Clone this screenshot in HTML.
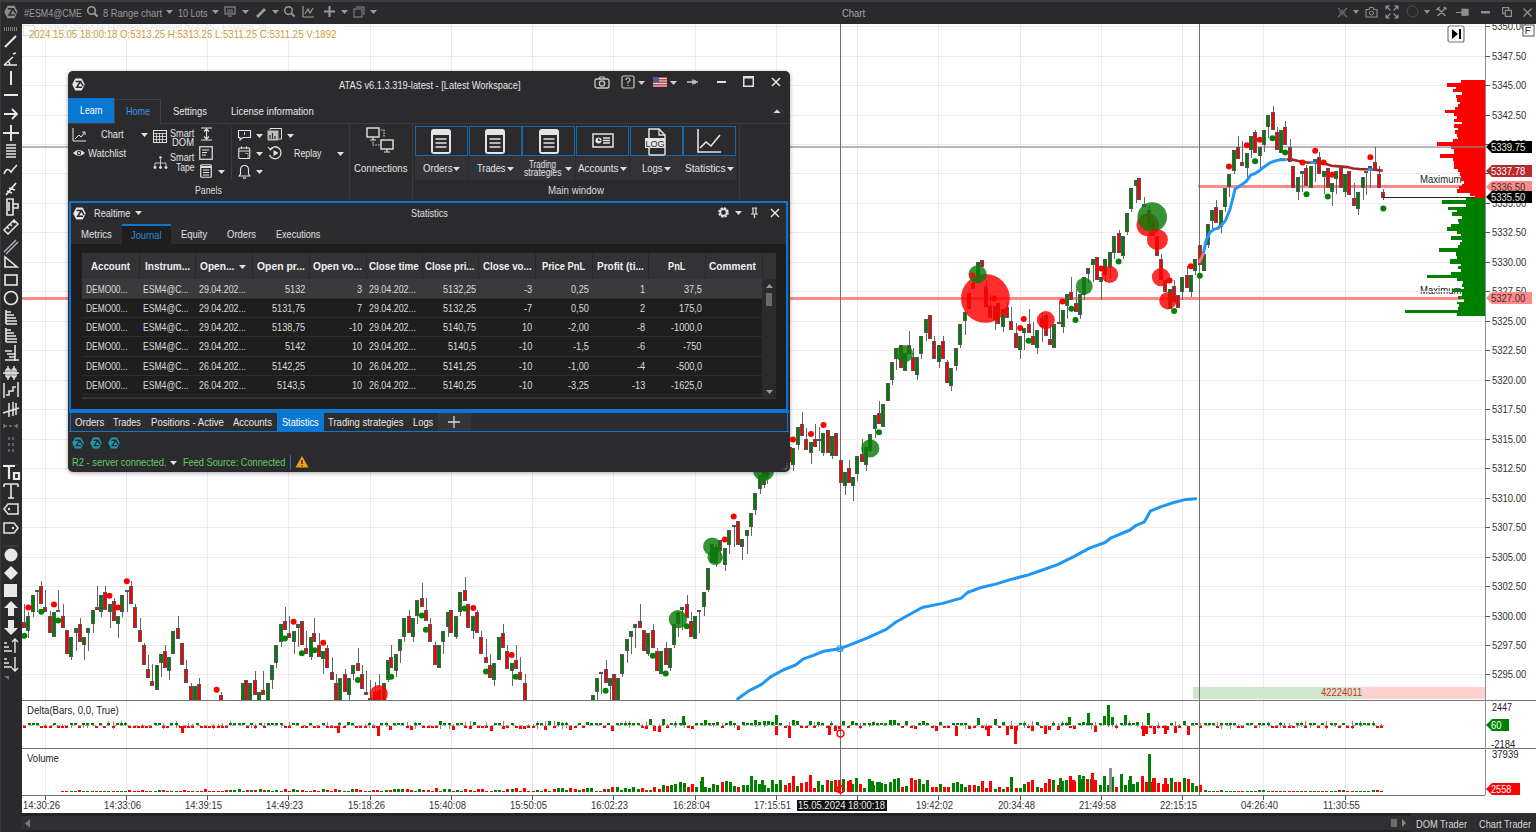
<!DOCTYPE html>
<html><head><meta charset="utf-8">
<style>
*{margin:0;padding:0;box-sizing:border-box}
html,body{width:1536px;height:832px;overflow:hidden;background:#fff;font-family:"Liberation Sans",sans-serif}
.a{position:absolute}
.pl{font-size:11px;color:#333;white-space:nowrap;line-height:14px}
.tt{color:#9b9b9b;font-size:11px;white-space:nowrap;line-height:14px}
.w{color:#e6e6e6;font-size:11px;white-space:nowrap;line-height:14px}
</style></head><body>
<div class="a" style="left:1419.9px;top:173.4px;font-size:10px;line-height:13px;color:#222;font-weight:400;white-space:nowrap;transform:scaleX(0.9575);transform-origin:0 0;">Maximum</div><div class="a" style="left:1419.9px;top:284.2px;font-size:10px;line-height:13px;color:#222;font-weight:400;white-space:nowrap;transform:scaleX(0.9575);transform-origin:0 0;">Maximum</div><svg class="a" style="left:0;top:0" width="1536" height="832" viewBox="0 0 1536 832" shape-rendering="crispEdges"><defs><clipPath id="cm"><rect x="22" y="24" width="1463" height="676"/></clipPath><clipPath id="cp"><rect x="22" y="700" width="1463" height="95"/></clipPath></defs><path d="M45.5 24V795 M126.5 24V795 M207.5 24V795 M288.5 24V795 M370.5 24V795 M451.5 24V795 M532.5 24V795 M613.5 24V795 M695.5 24V795 M776.5 24V795 M857.5 24V795 M938.5 24V795 M1020.5 24V795 M1101.5 24V795 M1182.5 24V795 M1263.5 24V795 M1345.5 24V795 M22 26.5H1485 M22 56.5H1485 M22 85.5H1485 M22 115.5H1485 M22 144.5H1485 M22 173.5H1485 M22 203.5H1485 M22 232.5H1485 M22 262.5H1485 M22 291.5H1485 M22 321.5H1485 M22 350.5H1485 M22 380.5H1485 M22 409.5H1485 M22 439.5H1485 M22 468.5H1485 M22 498.5H1485 M22 527.5H1485 M22 557.5H1485 M22 586.5H1485 M22 616.5H1485 M22 645.5H1485 M22 674.5H1485" stroke="#f2e7ea" stroke-width="1" fill="none"/><rect x="1193" y="687" width="170" height="12" fill="#cfe6cc"/><rect x="1363" y="687" width="122" height="12" fill="#ffd0d0"/><g clip-path="url(#cm)"><rect x="22" y="297" width="1463" height="3" fill="#ff8a8a"/><rect x="1198" y="185" width="287" height="3" fill="#ff8a8a"/></g><g><rect x="1461" y="80" width="24" height="3" fill="#ff0000"/><rect x="1447" y="83" width="38" height="4" fill="#ff0000"/><rect x="1456" y="87" width="29" height="2" fill="#ff0000"/><rect x="1453" y="89" width="32" height="3" fill="#ff0000"/><rect x="1462" y="92" width="23" height="3" fill="#ff0000"/><rect x="1456" y="95" width="29" height="3" fill="#ff0000"/><rect x="1457" y="98" width="28" height="4" fill="#ff0000"/><rect x="1460" y="102" width="25" height="2" fill="#ff0000"/><rect x="1458" y="104" width="27" height="3" fill="#ff0000"/><rect x="1455" y="107" width="30" height="3" fill="#ff0000"/><rect x="1445" y="110" width="40" height="3" fill="#ff0000"/><rect x="1454" y="113" width="31" height="3" fill="#ff0000"/><rect x="1457" y="116" width="28" height="3" fill="#ff0000"/><rect x="1454" y="119" width="31" height="3" fill="#ff0000"/><rect x="1462" y="122" width="23" height="2" fill="#ff0000"/><rect x="1454" y="124" width="31" height="4" fill="#ff0000"/><rect x="1458" y="128" width="27" height="2" fill="#ff0000"/><rect x="1455" y="130" width="30" height="4" fill="#ff0000"/><rect x="1457" y="134" width="28" height="3" fill="#ff0000"/><rect x="1458" y="137" width="27" height="2" fill="#ff0000"/><rect x="1453" y="139" width="32" height="3" fill="#ff0000"/><rect x="1437" y="142" width="48" height="4" fill="#ff0000"/><rect x="1451" y="146" width="34" height="3" fill="#ff0000"/><rect x="1454" y="149" width="31" height="5" fill="#ff0000"/><rect x="1440" y="154" width="45" height="4" fill="#ff0000"/><rect x="1453" y="158" width="32" height="3" fill="#ff0000"/><rect x="1454" y="161" width="31" height="8" fill="#ff0000"/><rect x="1458" y="169" width="27" height="3" fill="#ff0000"/><rect x="1460" y="172" width="25" height="4" fill="#ff0000"/><rect x="1461" y="176" width="24" height="5" fill="#ff0000"/><rect x="1464" y="181" width="21" height="3" fill="#ff0000"/><rect x="1462" y="184" width="23" height="2" fill="#ff0000"/><rect x="1459" y="186" width="26" height="3" fill="#ff0000"/><rect x="1457" y="189" width="28" height="4" fill="#ff0000"/><rect x="1470" y="193" width="15" height="3" fill="#ff0000"/><rect x="1475" y="196" width="10" height="2" fill="#ff0000"/><rect x="1466" y="198" width="19" height="2" fill="#008000"/><rect x="1442" y="200" width="43" height="4" fill="#008000"/><rect x="1466" y="204" width="19" height="3" fill="#008000"/><rect x="1448" y="207" width="37" height="3" fill="#008000"/><rect x="1457" y="210" width="28" height="2" fill="#008000"/><rect x="1452" y="212" width="33" height="4" fill="#008000"/><rect x="1462" y="216" width="23" height="3" fill="#008000"/><rect x="1458" y="219" width="27" height="3" fill="#008000"/><rect x="1459" y="222" width="26" height="2" fill="#008000"/><rect x="1451" y="224" width="34" height="3" fill="#008000"/><rect x="1447" y="227" width="38" height="4" fill="#008000"/><rect x="1457" y="231" width="28" height="3" fill="#008000"/><rect x="1461" y="234" width="24" height="2" fill="#008000"/><rect x="1451" y="236" width="34" height="4" fill="#008000"/><rect x="1462" y="240" width="23" height="2" fill="#008000"/><rect x="1460" y="242" width="25" height="3" fill="#008000"/><rect x="1458" y="245" width="27" height="3" fill="#008000"/><rect x="1439" y="248" width="46" height="4" fill="#008000"/><rect x="1456" y="252" width="29" height="4" fill="#008000"/><rect x="1457" y="256" width="28" height="3" fill="#008000"/><rect x="1450" y="259" width="35" height="5" fill="#008000"/><rect x="1461" y="264" width="24" height="2" fill="#008000"/><rect x="1458" y="266" width="27" height="3" fill="#008000"/><rect x="1461" y="269" width="24" height="3" fill="#008000"/><rect x="1451" y="272" width="34" height="3" fill="#008000"/><rect x="1427" y="275" width="58" height="3" fill="#008000"/><rect x="1457" y="278" width="28" height="3" fill="#008000"/><rect x="1463" y="281" width="22" height="3" fill="#008000"/><rect x="1462" y="284" width="23" height="3" fill="#008000"/><rect x="1464" y="287" width="21" height="2" fill="#008000"/><rect x="1452" y="289" width="33" height="3" fill="#008000"/><rect x="1462" y="292" width="23" height="4" fill="#008000"/><rect x="1458" y="296" width="27" height="3" fill="#008000"/><rect x="1464" y="299" width="21" height="3" fill="#008000"/><rect x="1457" y="302" width="28" height="2" fill="#008000"/><rect x="1459" y="304" width="26" height="3" fill="#008000"/><rect x="1458" y="307" width="27" height="3" fill="#008000"/><rect x="1405" y="310" width="80" height="3" fill="#008000"/><rect x="1457" y="313" width="28" height="3" fill="#008000"/></g><path d="M22 147H1485" stroke="#8a8a8a" stroke-opacity="0.6" stroke-width="2"/><path d="M840.5 24V795M1199.5 24V795" stroke="#707070" stroke-width="1"/><g clip-path="url(#cm)"><path d="M24.5 604V628" stroke="#666"/><rect x="22.5" y="622.5" width="3" height="5" fill="#ff0000" stroke="#555" stroke-width="1"/><path d="M28.5 612V638" stroke="#666"/><rect x="26.5" y="616.5" width="3" height="14" fill="#008000" stroke="#555" stroke-width="1"/><path d="M33.5 595V617" stroke="#666"/><rect x="31.5" y="595.5" width="3" height="16" fill="#008000" stroke="#555" stroke-width="1"/><path d="M37.5 590V612" stroke="#666"/><rect x="35.5" y="590.5" width="3" height="1" fill="#008000" stroke="#555" stroke-width="1"/><path d="M41.5 581V604" stroke="#666"/><rect x="39.5" y="586.5" width="3" height="17" fill="#ff0000" stroke="#555" stroke-width="1"/><path d="M45.5 590V612" stroke="#666"/><rect x="43.5" y="607.5" width="3" height="4" fill="#ff0000" stroke="#555" stroke-width="1"/><path d="M50.5 611V633" stroke="#666"/><rect x="48.5" y="616.5" width="3" height="16" fill="#ff0000" stroke="#555" stroke-width="1"/><path d="M54.5 612V637" stroke="#666"/><rect x="52.5" y="612.5" width="3" height="24" fill="#008000" stroke="#555" stroke-width="1"/><path d="M58.5 590V612" stroke="#666"/><rect x="56.5" y="610.5" width="3" height="1" fill="#ff0000" stroke="#555" stroke-width="1"/><path d="M63.5 604V628" stroke="#666"/><rect x="61.5" y="616.5" width="3" height="11" fill="#ff0000" stroke="#555" stroke-width="1"/><path d="M67.5 630V654" stroke="#666"/><rect x="65.5" y="630.5" width="3" height="23" fill="#ff0000" stroke="#555" stroke-width="1"/><path d="M71.5 637V660" stroke="#666"/><rect x="69.5" y="637.5" width="3" height="19" fill="#008000" stroke="#555" stroke-width="1"/><path d="M76.5 628V651" stroke="#666"/><rect x="74.5" y="628.5" width="3" height="4" fill="#008000" stroke="#555" stroke-width="1"/><path d="M80.5 618V642" stroke="#666"/><rect x="78.5" y="624.5" width="3" height="17" fill="#ff0000" stroke="#555" stroke-width="1"/><path d="M84.5 637V660" stroke="#666"/><rect x="82.5" y="637.5" width="3" height="7" fill="#008000" stroke="#555" stroke-width="1"/><path d="M88.5 628V651" stroke="#666"/><rect x="86.5" y="628.5" width="3" height="4" fill="#008000" stroke="#555" stroke-width="1"/><path d="M93.5 610V633" stroke="#666"/><rect x="91.5" y="610.5" width="3" height="13" fill="#008000" stroke="#555" stroke-width="1"/><path d="M97.5 586V610" stroke="#666"/><rect x="95.5" y="607.5" width="3" height="2" fill="#ff0000" stroke="#555" stroke-width="1"/><path d="M101.5 595V617" stroke="#666"/><rect x="99.5" y="595.5" width="3" height="16" fill="#008000" stroke="#555" stroke-width="1"/><path d="M105.5 586V610" stroke="#666"/><rect x="103.5" y="592.5" width="3" height="17" fill="#ff0000" stroke="#555" stroke-width="1"/><path d="M110.5 604V628" stroke="#666"/><rect x="108.5" y="604.5" width="3" height="7" fill="#008000" stroke="#555" stroke-width="1"/><path d="M114.5 598V621" stroke="#666"/><rect x="112.5" y="601.5" width="3" height="19" fill="#ff0000" stroke="#555" stroke-width="1"/><path d="M118.5 616V638" stroke="#666"/><rect x="116.5" y="616.5" width="3" height="7" fill="#008000" stroke="#555" stroke-width="1"/><path d="M122.5 595V617" stroke="#666"/><rect x="120.5" y="595.5" width="3" height="16" fill="#008000" stroke="#555" stroke-width="1"/><path d="M127.5 590V612" stroke="#666"/><rect x="125.5" y="590.5" width="3" height="1" fill="#008000" stroke="#555" stroke-width="1"/><path d="M131.5 581V604" stroke="#666"/><rect x="129.5" y="586.5" width="3" height="17" fill="#ff0000" stroke="#555" stroke-width="1"/><path d="M135.5 604V628" stroke="#666"/><rect x="133.5" y="607.5" width="3" height="20" fill="#ff0000" stroke="#555" stroke-width="1"/><path d="M140.5 618V642" stroke="#666"/><rect x="138.5" y="630.5" width="3" height="11" fill="#ff0000" stroke="#555" stroke-width="1"/><path d="M144.5 643V665" stroke="#666"/><rect x="142.5" y="645.5" width="3" height="19" fill="#ff0000" stroke="#555" stroke-width="1"/><path d="M148.5 655V678" stroke="#666"/><rect x="146.5" y="669.5" width="3" height="8" fill="#ff0000" stroke="#555" stroke-width="1"/><path d="M152.5 664V686" stroke="#666"/><rect x="150.5" y="681.5" width="3" height="4" fill="#ff0000" stroke="#555" stroke-width="1"/><path d="M157.5 665V690" stroke="#666"/><rect x="155.5" y="665.5" width="3" height="24" fill="#008000" stroke="#555" stroke-width="1"/><path d="M161.5 654V677" stroke="#666"/><rect x="159.5" y="654.5" width="3" height="8" fill="#008000" stroke="#555" stroke-width="1"/><path d="M165.5 645V668" stroke="#666"/><rect x="163.5" y="651.5" width="3" height="16" fill="#ff0000" stroke="#555" stroke-width="1"/><path d="M169.5 657V680" stroke="#666"/><rect x="167.5" y="657.5" width="3" height="13" fill="#008000" stroke="#555" stroke-width="1"/><path d="M173.5 631V654" stroke="#666"/><rect x="171.5" y="631.5" width="3" height="22" fill="#008000" stroke="#555" stroke-width="1"/><path d="M178.5 616V639" stroke="#666"/><rect x="176.5" y="628.5" width="3" height="10" fill="#ff0000" stroke="#555" stroke-width="1"/><path d="M182.5 643V665" stroke="#666"/><rect x="180.5" y="643.5" width="3" height="21" fill="#ff0000" stroke="#555" stroke-width="1"/><path d="M186.5 660V683" stroke="#666"/><rect x="184.5" y="669.5" width="3" height="13" fill="#ff0000" stroke="#555" stroke-width="1"/><path d="M191.5 683V705" stroke="#666"/><rect x="189.5" y="686.5" width="3" height="18" fill="#ff0000" stroke="#555" stroke-width="1"/><path d="M195.5 686V705" stroke="#666"/><rect x="193.5" y="686.5" width="3" height="18" fill="#008000" stroke="#555" stroke-width="1"/><path d="M199.5 678V705" stroke="#666"/><rect x="197.5" y="684.5" width="3" height="20" fill="#ff0000" stroke="#555" stroke-width="1"/><path d="M221.5 692V705" stroke="#666"/><rect x="219.5" y="695.5" width="3" height="9" fill="#ff0000" stroke="#555" stroke-width="1"/><path d="M243.5 683V705" stroke="#666"/><rect x="241.5" y="683.5" width="3" height="21" fill="#008000" stroke="#555" stroke-width="1"/><path d="M246.5 680V705" stroke="#666"/><rect x="244.5" y="680.5" width="3" height="24" fill="#ff0000" stroke="#555" stroke-width="1"/><path d="M250.5 683V705" stroke="#666"/><rect x="248.5" y="683.5" width="3" height="21" fill="#008000" stroke="#555" stroke-width="1"/><path d="M255.5 671V695" stroke="#666"/><rect x="253.5" y="680.5" width="3" height="14" fill="#ff0000" stroke="#555" stroke-width="1"/><path d="M259.5 692V705" stroke="#666"/><rect x="257.5" y="692.5" width="3" height="12" fill="#008000" stroke="#555" stroke-width="1"/><path d="M263.5 671V695" stroke="#666"/><rect x="261.5" y="690.5" width="3" height="4" fill="#ff0000" stroke="#555" stroke-width="1"/><path d="M268.5 683V705" stroke="#666"/><rect x="266.5" y="683.5" width="3" height="21" fill="#008000" stroke="#555" stroke-width="1"/><path d="M272.5 665V689" stroke="#666"/><rect x="270.5" y="665.5" width="3" height="14" fill="#008000" stroke="#555" stroke-width="1"/><path d="M276.5 645V668" stroke="#666"/><rect x="274.5" y="645.5" width="3" height="17" fill="#008000" stroke="#555" stroke-width="1"/><path d="M281.5 624V647" stroke="#666"/><rect x="279.5" y="624.5" width="3" height="17" fill="#008000" stroke="#555" stroke-width="1"/><path d="M285.5 607V630" stroke="#666"/><rect x="283.5" y="621.5" width="3" height="8" fill="#ff0000" stroke="#555" stroke-width="1"/><path d="M289.5 616V638" stroke="#666"/><rect x="287.5" y="633.5" width="3" height="4" fill="#ff0000" stroke="#555" stroke-width="1"/><path d="M294.5 631V654" stroke="#666"/><rect x="292.5" y="631.5" width="3" height="10" fill="#008000" stroke="#555" stroke-width="1"/><path d="M298.5 624V647" stroke="#666"/><rect x="296.5" y="624.5" width="3" height="3" fill="#008000" stroke="#555" stroke-width="1"/><path d="M302.5 621V645" stroke="#666"/><rect x="300.5" y="621.5" width="3" height="23" fill="#ff0000" stroke="#555" stroke-width="1"/><path d="M306.5 631V654" stroke="#666"/><rect x="304.5" y="648.5" width="3" height="5" fill="#ff0000" stroke="#555" stroke-width="1"/><path d="M311.5 637V660" stroke="#666"/><rect x="309.5" y="637.5" width="3" height="19" fill="#008000" stroke="#555" stroke-width="1"/><path d="M314.5 618V642" stroke="#666"/><rect x="312.5" y="633.5" width="3" height="8" fill="#ff0000" stroke="#555" stroke-width="1"/><path d="M319.5 633V657" stroke="#666"/><rect x="317.5" y="645.5" width="3" height="11" fill="#ff0000" stroke="#555" stroke-width="1"/><path d="M323.5 651V674" stroke="#666"/><rect x="321.5" y="651.5" width="3" height="7" fill="#008000" stroke="#555" stroke-width="1"/><path d="M327.5 645V668" stroke="#666"/><rect x="325.5" y="648.5" width="3" height="19" fill="#ff0000" stroke="#555" stroke-width="1"/><path d="M332.5 657V680" stroke="#666"/><rect x="330.5" y="672.5" width="3" height="7" fill="#ff0000" stroke="#555" stroke-width="1"/><path d="M336.5 674V705" stroke="#666"/><rect x="334.5" y="683.5" width="3" height="21" fill="#ff0000" stroke="#555" stroke-width="1"/><path d="M340.5 678V705" stroke="#666"/><rect x="338.5" y="678.5" width="3" height="26" fill="#008000" stroke="#555" stroke-width="1"/><path d="M345.5 669V692" stroke="#666"/><rect x="343.5" y="674.5" width="3" height="17" fill="#ff0000" stroke="#555" stroke-width="1"/><path d="M349.5 678V705" stroke="#666"/><rect x="347.5" y="678.5" width="3" height="16" fill="#008000" stroke="#555" stroke-width="1"/><path d="M353.5 665V680" stroke="#666"/><rect x="351.5" y="665.5" width="3" height="8" fill="#008000" stroke="#555" stroke-width="1"/><path d="M358.5 648V671" stroke="#666"/><rect x="356.5" y="663.5" width="3" height="7" fill="#ff0000" stroke="#555" stroke-width="1"/><path d="M362.5 665V689" stroke="#666"/><rect x="360.5" y="674.5" width="3" height="14" fill="#ff0000" stroke="#555" stroke-width="1"/><path d="M366.5 671V695" stroke="#666"/><rect x="364.5" y="692.5" width="3" height="2" fill="#ff0000" stroke="#555" stroke-width="1"/><path d="M370.5 680V705" stroke="#666"/><rect x="368.5" y="698.5" width="3" height="6" fill="#008000" stroke="#555" stroke-width="1"/><path d="M375.5 682V705" stroke="#666"/><rect x="373.5" y="692.5" width="3" height="12" fill="#ff0000" stroke="#555" stroke-width="1"/><path d="M379.5 674V705" stroke="#666"/><rect x="377.5" y="690.5" width="3" height="14" fill="#ff0000" stroke="#555" stroke-width="1"/><path d="M384.5 683V705" stroke="#666"/><rect x="382.5" y="683.5" width="3" height="21" fill="#008000" stroke="#555" stroke-width="1"/><path d="M388.5 660V682" stroke="#666"/><rect x="386.5" y="660.5" width="3" height="19" fill="#008000" stroke="#555" stroke-width="1"/><path d="M391.5 645V668" stroke="#666"/><rect x="389.5" y="657.5" width="3" height="10" fill="#ff0000" stroke="#555" stroke-width="1"/><path d="M396.5 654V677" stroke="#666"/><rect x="394.5" y="654.5" width="3" height="16" fill="#008000" stroke="#555" stroke-width="1"/><path d="M400.5 639V663" stroke="#666"/><rect x="398.5" y="639.5" width="3" height="11" fill="#008000" stroke="#555" stroke-width="1"/><path d="M404.5 618V642" stroke="#666"/><rect x="402.5" y="618.5" width="3" height="18" fill="#008000" stroke="#555" stroke-width="1"/><path d="M409.5 610V633" stroke="#666"/><rect x="407.5" y="616.5" width="3" height="16" fill="#ff0000" stroke="#555" stroke-width="1"/><path d="M413.5 618V642" stroke="#666"/><rect x="411.5" y="618.5" width="3" height="18" fill="#008000" stroke="#555" stroke-width="1"/><path d="M417.5 600V624" stroke="#666"/><rect x="415.5" y="600.5" width="3" height="15" fill="#008000" stroke="#555" stroke-width="1"/><path d="M422.5 583V607" stroke="#666"/><rect x="420.5" y="598.5" width="3" height="8" fill="#ff0000" stroke="#555" stroke-width="1"/><path d="M426.5 598V621" stroke="#666"/><rect x="424.5" y="610.5" width="3" height="10" fill="#ff0000" stroke="#555" stroke-width="1"/><path d="M430.5 618V642" stroke="#666"/><rect x="428.5" y="624.5" width="3" height="17" fill="#ff0000" stroke="#555" stroke-width="1"/><path d="M435.5 642V665" stroke="#666"/><rect x="433.5" y="645.5" width="3" height="19" fill="#ff0000" stroke="#555" stroke-width="1"/><path d="M439.5 645V668" stroke="#666"/><rect x="437.5" y="645.5" width="3" height="22" fill="#008000" stroke="#555" stroke-width="1"/><path d="M443.5 631V654" stroke="#666"/><rect x="441.5" y="631.5" width="3" height="10" fill="#008000" stroke="#555" stroke-width="1"/><path d="M448.5 612V637" stroke="#666"/><rect x="446.5" y="612.5" width="3" height="14" fill="#008000" stroke="#555" stroke-width="1"/><path d="M451.5 610V633" stroke="#666"/><rect x="449.5" y="610.5" width="3" height="22" fill="#ff0000" stroke="#555" stroke-width="1"/><path d="M456.5 616V639" stroke="#666"/><rect x="454.5" y="616.5" width="3" height="20" fill="#008000" stroke="#555" stroke-width="1"/><path d="M460.5 592V616" stroke="#666"/><rect x="458.5" y="592.5" width="3" height="19" fill="#008000" stroke="#555" stroke-width="1"/><path d="M465.5 577V601" stroke="#666"/><rect x="463.5" y="590.5" width="3" height="10" fill="#ff0000" stroke="#555" stroke-width="1"/><path d="M468.5 604V628" stroke="#666"/><rect x="466.5" y="604.5" width="3" height="23" fill="#ff0000" stroke="#555" stroke-width="1"/><path d="M473.5 616V639" stroke="#666"/><rect x="471.5" y="616.5" width="3" height="14" fill="#008000" stroke="#555" stroke-width="1"/><path d="M477.5 610V633" stroke="#666"/><rect x="475.5" y="612.5" width="3" height="20" fill="#ff0000" stroke="#555" stroke-width="1"/><path d="M481.5 631V654" stroke="#666"/><rect x="479.5" y="637.5" width="3" height="16" fill="#ff0000" stroke="#555" stroke-width="1"/><path d="M486.5 639V663" stroke="#666"/><rect x="484.5" y="657.5" width="3" height="5" fill="#ff0000" stroke="#555" stroke-width="1"/><path d="M490.5 654V678" stroke="#666"/><rect x="488.5" y="665.5" width="3" height="12" fill="#ff0000" stroke="#555" stroke-width="1"/><path d="M494.5 663V686" stroke="#666"/><rect x="492.5" y="663.5" width="3" height="16" fill="#008000" stroke="#555" stroke-width="1"/><path d="M499.5 637V660" stroke="#666"/><rect x="497.5" y="637.5" width="3" height="22" fill="#008000" stroke="#555" stroke-width="1"/><path d="M503.5 624V648" stroke="#666"/><rect x="501.5" y="633.5" width="3" height="14" fill="#ff0000" stroke="#555" stroke-width="1"/><path d="M507.5 645V669" stroke="#666"/><rect x="505.5" y="651.5" width="3" height="17" fill="#ff0000" stroke="#555" stroke-width="1"/><path d="M512.5 663V686" stroke="#666"/><rect x="510.5" y="663.5" width="3" height="7" fill="#008000" stroke="#555" stroke-width="1"/><path d="M516.5 645V669" stroke="#666"/><rect x="514.5" y="660.5" width="3" height="8" fill="#ff0000" stroke="#555" stroke-width="1"/><path d="M520.5 657V680" stroke="#666"/><rect x="518.5" y="672.5" width="3" height="7" fill="#ff0000" stroke="#555" stroke-width="1"/><path d="M525.5 674V705" stroke="#666"/><rect x="523.5" y="683.5" width="3" height="21" fill="#ff0000" stroke="#555" stroke-width="1"/><path d="M593.5 695V705" stroke="#666"/><rect x="591.5" y="695.5" width="3" height="9" fill="#008000" stroke="#555" stroke-width="1"/><path d="M597.5 678V705" stroke="#666"/><rect x="595.5" y="678.5" width="3" height="13" fill="#008000" stroke="#555" stroke-width="1"/><path d="M601.5 672V694" stroke="#666"/><rect x="599.5" y="672.5" width="3" height="1" fill="#008000" stroke="#555" stroke-width="1"/><path d="M606.5 660V683" stroke="#666"/><rect x="604.5" y="669.5" width="3" height="13" fill="#ff0000" stroke="#555" stroke-width="1"/><path d="M610.5 678V705" stroke="#666"/><rect x="608.5" y="678.5" width="3" height="7" fill="#008000" stroke="#555" stroke-width="1"/><path d="M614.5 674V705" stroke="#666"/><rect x="612.5" y="674.5" width="3" height="30" fill="#ff0000" stroke="#555" stroke-width="1"/><path d="M618.5 678V705" stroke="#666"/><rect x="616.5" y="678.5" width="3" height="26" fill="#008000" stroke="#555" stroke-width="1"/><path d="M622.5 654V677" stroke="#666"/><rect x="620.5" y="654.5" width="3" height="19" fill="#008000" stroke="#555" stroke-width="1"/><path d="M627.5 639V663" stroke="#666"/><rect x="625.5" y="639.5" width="3" height="11" fill="#008000" stroke="#555" stroke-width="1"/><path d="M631.5 631V654" stroke="#666"/><rect x="629.5" y="631.5" width="3" height="5" fill="#008000" stroke="#555" stroke-width="1"/><path d="M635.5 624V648" stroke="#666"/><rect x="633.5" y="624.5" width="3" height="3" fill="#008000" stroke="#555" stroke-width="1"/><path d="M640.5 604V628" stroke="#666"/><rect x="638.5" y="621.5" width="3" height="6" fill="#ff0000" stroke="#555" stroke-width="1"/><path d="M644.5 630V651" stroke="#666"/><rect x="642.5" y="630.5" width="3" height="20" fill="#ff0000" stroke="#555" stroke-width="1"/><path d="M648.5 633V656" stroke="#666"/><rect x="646.5" y="633.5" width="3" height="20" fill="#008000" stroke="#555" stroke-width="1"/><path d="M653.5 624V648" stroke="#666"/><rect x="651.5" y="630.5" width="3" height="17" fill="#ff0000" stroke="#555" stroke-width="1"/><path d="M657.5 648V671" stroke="#666"/><rect x="655.5" y="651.5" width="3" height="19" fill="#ff0000" stroke="#555" stroke-width="1"/><path d="M661.5 651V674" stroke="#666"/><rect x="659.5" y="651.5" width="3" height="22" fill="#008000" stroke="#555" stroke-width="1"/><path d="M666.5 642V665" stroke="#666"/><rect x="664.5" y="648.5" width="3" height="16" fill="#ff0000" stroke="#555" stroke-width="1"/><path d="M670.5 648V671" stroke="#666"/><rect x="668.5" y="648.5" width="3" height="19" fill="#008000" stroke="#555" stroke-width="1"/><path d="M674.5 624V648" stroke="#666"/><rect x="672.5" y="624.5" width="3" height="20" fill="#008000" stroke="#555" stroke-width="1"/><path d="M678.5 612V637" stroke="#666"/><rect x="676.5" y="612.5" width="3" height="11" fill="#008000" stroke="#555" stroke-width="1"/><path d="M682.5 607V630" stroke="#666"/><rect x="680.5" y="607.5" width="3" height="2" fill="#008000" stroke="#555" stroke-width="1"/><path d="M687.5 595V618" stroke="#666"/><rect x="685.5" y="604.5" width="3" height="13" fill="#ff0000" stroke="#555" stroke-width="1"/><path d="M691.5 612V637" stroke="#666"/><rect x="689.5" y="621.5" width="3" height="15" fill="#ff0000" stroke="#555" stroke-width="1"/><path d="M695.5 616V639" stroke="#666"/><rect x="693.5" y="616.5" width="3" height="22" fill="#008000" stroke="#555" stroke-width="1"/><path d="M699.5 610V633" stroke="#666"/><rect x="697.5" y="610.5" width="3" height="1" fill="#008000" stroke="#555" stroke-width="1"/><path d="M704.5 592V616" stroke="#666"/><rect x="702.5" y="592.5" width="3" height="14" fill="#008000" stroke="#555" stroke-width="1"/><path d="M708.5 568V592" stroke="#666"/><rect x="706.5" y="568.5" width="3" height="21" fill="#008000" stroke="#555" stroke-width="1"/><path d="M712.5 544V563" stroke="#666"/><rect x="710.5" y="544.5" width="3" height="18" fill="#008000" stroke="#555" stroke-width="1"/><path d="M716.5 544V567" stroke="#666"/><rect x="714.5" y="547.5" width="3" height="15" fill="#008000" stroke="#555" stroke-width="1"/><path d="M720.5 540V560" stroke="#666"/><rect x="718.5" y="540.5" width="3" height="10" fill="#ff0000" stroke="#555" stroke-width="1"/><path d="M725.5 548V571" stroke="#666"/><rect x="723.5" y="548.5" width="3" height="16" fill="#008000" stroke="#555" stroke-width="1"/><path d="M729.5 530V554" stroke="#666"/><rect x="727.5" y="530.5" width="3" height="14" fill="#008000" stroke="#555" stroke-width="1"/><path d="M734.5 525V547" stroke="#666"/><rect x="732.5" y="525.5" width="3" height="1" fill="#008000" stroke="#555" stroke-width="1"/><path d="M738.5 521V545" stroke="#666"/><rect x="736.5" y="521.5" width="3" height="23" fill="#ff0000" stroke="#555" stroke-width="1"/><path d="M742.5 539V560" stroke="#666"/><rect x="740.5" y="539.5" width="3" height="7" fill="#008000" stroke="#555" stroke-width="1"/><path d="M747.5 530V554" stroke="#666"/><rect x="745.5" y="530.5" width="3" height="5" fill="#008000" stroke="#555" stroke-width="1"/><path d="M751.5 513V536" stroke="#666"/><rect x="749.5" y="513.5" width="3" height="13" fill="#008000" stroke="#555" stroke-width="1"/><path d="M755.5 493V515" stroke="#666"/><rect x="753.5" y="493.5" width="3" height="16" fill="#008000" stroke="#555" stroke-width="1"/><path d="M760.5 475V494" stroke="#666"/><rect x="758.5" y="475.5" width="3" height="13" fill="#008000" stroke="#555" stroke-width="1"/><path d="M764.5 467V488" stroke="#666"/><rect x="762.5" y="472.5" width="3" height="12" fill="#008000" stroke="#555" stroke-width="1"/><path d="M767.5 467V484" stroke="#666"/><rect x="765.5" y="467.5" width="3" height="10" fill="#008000" stroke="#555" stroke-width="1"/><path d="M790.5 447V462" stroke="#666"/><rect x="788.5" y="447.5" width="3" height="14" fill="#ff0000" stroke="#555" stroke-width="1"/><path d="M793.5 448V471" stroke="#666"/><rect x="791.5" y="448.5" width="3" height="16" fill="#008000" stroke="#555" stroke-width="1"/><path d="M798.5 427V450" stroke="#666"/><rect x="796.5" y="427.5" width="3" height="17" fill="#008000" stroke="#555" stroke-width="1"/><path d="M802.5 412V436" stroke="#666"/><rect x="800.5" y="424.5" width="3" height="11" fill="#ff0000" stroke="#555" stroke-width="1"/><path d="M806.5 428V450" stroke="#666"/><rect x="804.5" y="439.5" width="3" height="10" fill="#ff0000" stroke="#555" stroke-width="1"/><path d="M811.5 442V464" stroke="#666"/><rect x="809.5" y="442.5" width="3" height="10" fill="#008000" stroke="#555" stroke-width="1"/><path d="M815.5 424V447" stroke="#666"/><rect x="813.5" y="439.5" width="3" height="7" fill="#ff0000" stroke="#555" stroke-width="1"/><path d="M819.5 427V451" stroke="#666"/><rect x="817.5" y="439.5" width="3" height="1" fill="#008000" stroke="#555" stroke-width="1"/><path d="M823.5 433V456" stroke="#666"/><rect x="821.5" y="433.5" width="3" height="19" fill="#008000" stroke="#555" stroke-width="1"/><path d="M828.5 430V453" stroke="#666"/><rect x="826.5" y="430.5" width="3" height="22" fill="#ff0000" stroke="#555" stroke-width="1"/><path d="M832.5 436V459" stroke="#666"/><rect x="830.5" y="436.5" width="3" height="19" fill="#008000" stroke="#555" stroke-width="1"/><path d="M836.5 433V456" stroke="#666"/><rect x="834.5" y="433.5" width="3" height="22" fill="#ff0000" stroke="#555" stroke-width="1"/><path d="M841.5 460V483" stroke="#666"/><rect x="839.5" y="460.5" width="3" height="22" fill="#ff0000" stroke="#555" stroke-width="1"/><path d="M845.5 472V495" stroke="#666"/><rect x="843.5" y="472.5" width="3" height="13" fill="#008000" stroke="#555" stroke-width="1"/><path d="M849.5 460V483" stroke="#666"/><rect x="847.5" y="468.5" width="3" height="14" fill="#ff0000" stroke="#555" stroke-width="1"/><path d="M853.5 477V501" stroke="#666"/><rect x="851.5" y="477.5" width="3" height="8" fill="#008000" stroke="#555" stroke-width="1"/><path d="M857.5 456V481" stroke="#666"/><rect x="855.5" y="456.5" width="3" height="17" fill="#008000" stroke="#555" stroke-width="1"/><path d="M862.5 439V462" stroke="#666"/><rect x="860.5" y="454.5" width="3" height="7" fill="#ff0000" stroke="#555" stroke-width="1"/><path d="M866.5 447V471" stroke="#666"/><rect x="864.5" y="447.5" width="3" height="17" fill="#008000" stroke="#555" stroke-width="1"/><path d="M870.5 434V453" stroke="#666"/><rect x="868.5" y="434.5" width="3" height="16" fill="#008000" stroke="#555" stroke-width="1"/><path d="M875.5 415V438" stroke="#666"/><rect x="873.5" y="415.5" width="3" height="13" fill="#008000" stroke="#555" stroke-width="1"/><path d="M879.5 401V424" stroke="#666"/><rect x="877.5" y="413.5" width="3" height="10" fill="#ff0000" stroke="#555" stroke-width="1"/><path d="M883.5 404V427" stroke="#666"/><rect x="881.5" y="404.5" width="3" height="22" fill="#008000" stroke="#555" stroke-width="1"/><path d="M888.5 383V401" stroke="#666"/><rect x="886.5" y="383.5" width="3" height="17" fill="#008000" stroke="#555" stroke-width="1"/><path d="M892.5 362V385" stroke="#666"/><rect x="890.5" y="362.5" width="3" height="17" fill="#008000" stroke="#555" stroke-width="1"/><path d="M896.5 348V370" stroke="#666"/><rect x="894.5" y="348.5" width="3" height="10" fill="#008000" stroke="#555" stroke-width="1"/><path d="M901.5 345V368" stroke="#666"/><rect x="899.5" y="345.5" width="3" height="22" fill="#ff0000" stroke="#555" stroke-width="1"/><path d="M905.5 353V371" stroke="#666"/><rect x="903.5" y="353.5" width="3" height="17" fill="#008000" stroke="#555" stroke-width="1"/><path d="M909.5 331V354" stroke="#666"/><rect x="907.5" y="345.5" width="3" height="8" fill="#ff0000" stroke="#555" stroke-width="1"/><path d="M913.5 348V371" stroke="#666"/><rect x="911.5" y="357.5" width="3" height="13" fill="#ff0000" stroke="#555" stroke-width="1"/><path d="M917.5 357V380" stroke="#666"/><rect x="915.5" y="357.5" width="3" height="17" fill="#008000" stroke="#555" stroke-width="1"/><path d="M921.5 336V359" stroke="#666"/><rect x="919.5" y="336.5" width="3" height="17" fill="#008000" stroke="#555" stroke-width="1"/><path d="M926.5 319V341" stroke="#666"/><rect x="924.5" y="319.5" width="3" height="13" fill="#008000" stroke="#555" stroke-width="1"/><path d="M930.5 315V339" stroke="#666"/><rect x="928.5" y="315.5" width="3" height="23" fill="#ff0000" stroke="#555" stroke-width="1"/><path d="M934.5 336V359" stroke="#666"/><rect x="932.5" y="341.5" width="3" height="17" fill="#ff0000" stroke="#555" stroke-width="1"/><path d="M939.5 345V368" stroke="#666"/><rect x="937.5" y="345.5" width="3" height="16" fill="#008000" stroke="#555" stroke-width="1"/><path d="M943.5 336V359" stroke="#666"/><rect x="941.5" y="341.5" width="3" height="17" fill="#ff0000" stroke="#555" stroke-width="1"/><path d="M947.5 360V383" stroke="#666"/><rect x="945.5" y="362.5" width="3" height="20" fill="#ff0000" stroke="#555" stroke-width="1"/><path d="M951.5 368V391" stroke="#666"/><rect x="949.5" y="368.5" width="3" height="17" fill="#008000" stroke="#555" stroke-width="1"/><path d="M956.5 348V371" stroke="#666"/><rect x="954.5" y="348.5" width="3" height="17" fill="#008000" stroke="#555" stroke-width="1"/><path d="M960.5 324V348" stroke="#666"/><rect x="958.5" y="324.5" width="3" height="20" fill="#008000" stroke="#555" stroke-width="1"/><path d="M965.5 312V335" stroke="#666"/><rect x="963.5" y="312.5" width="3" height="8" fill="#008000" stroke="#555" stroke-width="1"/><path d="M969.5 293V309" stroke="#666"/><rect x="967.5" y="293.5" width="3" height="15" fill="#ff0000" stroke="#555" stroke-width="1"/><path d="M973.5 276V289" stroke="#666"/><rect x="971.5" y="283.5" width="3" height="5" fill="#ff0000" stroke="#555" stroke-width="1"/><path d="M978.5 262V283" stroke="#666"/><rect x="976.5" y="262.5" width="3" height="20" fill="#008000" stroke="#555" stroke-width="1"/><path d="M982.5 260V267" stroke="#666"/><rect x="980.5" y="260.5" width="3" height="6" fill="#ff0000" stroke="#555" stroke-width="1"/><path d="M986.5 280V307" stroke="#666"/><rect x="984.5" y="286.5" width="3" height="20" fill="#ff0000" stroke="#555" stroke-width="1"/><path d="M990.5 294V318" stroke="#666"/><rect x="988.5" y="306.5" width="3" height="11" fill="#ff0000" stroke="#555" stroke-width="1"/><path d="M995.5 306V330" stroke="#666"/><rect x="993.5" y="306.5" width="3" height="13" fill="#008000" stroke="#555" stroke-width="1"/><path d="M998.5 303V324" stroke="#666"/><rect x="996.5" y="303.5" width="3" height="20" fill="#ff0000" stroke="#555" stroke-width="1"/><path d="M1003.5 309V332" stroke="#666"/><rect x="1001.5" y="309.5" width="3" height="17" fill="#008000" stroke="#555" stroke-width="1"/><path d="M1007.5 303V318" stroke="#666"/><rect x="1005.5" y="307.5" width="3" height="10" fill="#ff0000" stroke="#555" stroke-width="1"/><path d="M1011.5 307V330" stroke="#666"/><rect x="1009.5" y="321.5" width="3" height="8" fill="#ff0000" stroke="#555" stroke-width="1"/><path d="M1016.5 323V348" stroke="#666"/><rect x="1014.5" y="333.5" width="3" height="14" fill="#ff0000" stroke="#555" stroke-width="1"/><path d="M1020.5 336V359" stroke="#666"/><rect x="1018.5" y="336.5" width="3" height="13" fill="#008000" stroke="#555" stroke-width="1"/><path d="M1024.5 328V350" stroke="#666"/><rect x="1022.5" y="328.5" width="3" height="4" fill="#008000" stroke="#555" stroke-width="1"/><path d="M1029.5 309V333" stroke="#666"/><rect x="1027.5" y="324.5" width="3" height="8" fill="#ff0000" stroke="#555" stroke-width="1"/><path d="M1033.5 322V345" stroke="#666"/><rect x="1031.5" y="336.5" width="3" height="8" fill="#ff0000" stroke="#555" stroke-width="1"/><path d="M1037.5 330V354" stroke="#666"/><rect x="1035.5" y="330.5" width="3" height="17" fill="#008000" stroke="#555" stroke-width="1"/><path d="M1042.5 313V342" stroke="#666"/><rect x="1040.5" y="318.5" width="3" height="8" fill="#ff0000" stroke="#555" stroke-width="1"/><path d="M1046.5 313V336" stroke="#666"/><rect x="1044.5" y="315.5" width="3" height="20" fill="#ff0000" stroke="#555" stroke-width="1"/><path d="M1050.5 325V345" stroke="#666"/><rect x="1048.5" y="339.5" width="3" height="5" fill="#ff0000" stroke="#555" stroke-width="1"/><path d="M1054.5 324V348" stroke="#666"/><rect x="1052.5" y="324.5" width="3" height="23" fill="#008000" stroke="#555" stroke-width="1"/><path d="M1059.5 301V324" stroke="#666"/><rect x="1057.5" y="322.5" width="3" height="1" fill="#ff0000" stroke="#555" stroke-width="1"/><path d="M1063.5 310V333" stroke="#666"/><rect x="1061.5" y="310.5" width="3" height="16" fill="#008000" stroke="#555" stroke-width="1"/><path d="M1067.5 294V319" stroke="#666"/><rect x="1065.5" y="294.5" width="3" height="11" fill="#008000" stroke="#555" stroke-width="1"/><path d="M1071.5 277V300" stroke="#666"/><rect x="1069.5" y="292.5" width="3" height="7" fill="#ff0000" stroke="#555" stroke-width="1"/><path d="M1076.5 289V312" stroke="#666"/><rect x="1074.5" y="303.5" width="3" height="8" fill="#ff0000" stroke="#555" stroke-width="1"/><path d="M1080.5 294V319" stroke="#666"/><rect x="1078.5" y="294.5" width="3" height="20" fill="#008000" stroke="#555" stroke-width="1"/><path d="M1084.5 277V300" stroke="#666"/><rect x="1082.5" y="277.5" width="3" height="17" fill="#008000" stroke="#555" stroke-width="1"/><path d="M1088.5 268V283" stroke="#666"/><rect x="1086.5" y="268.5" width="3" height="5" fill="#008000" stroke="#555" stroke-width="1"/><path d="M1093.5 259V282" stroke="#666"/><rect x="1091.5" y="259.5" width="3" height="5" fill="#008000" stroke="#555" stroke-width="1"/><path d="M1097.5 257V280" stroke="#666"/><rect x="1095.5" y="257.5" width="3" height="22" fill="#ff0000" stroke="#555" stroke-width="1"/><path d="M1101.5 277V300" stroke="#666"/><rect x="1099.5" y="277.5" width="3" height="4" fill="#008000" stroke="#555" stroke-width="1"/><path d="M1105.5 259V282" stroke="#666"/><rect x="1103.5" y="259.5" width="3" height="15" fill="#008000" stroke="#555" stroke-width="1"/><path d="M1110.5 252V278" stroke="#666"/><rect x="1108.5" y="252.5" width="3" height="15" fill="#008000" stroke="#555" stroke-width="1"/><path d="M1114.5 236V259" stroke="#666"/><rect x="1112.5" y="236.5" width="3" height="16" fill="#008000" stroke="#555" stroke-width="1"/><path d="M1119.5 230V253" stroke="#666"/><rect x="1117.5" y="233.5" width="3" height="19" fill="#ff0000" stroke="#555" stroke-width="1"/><path d="M1123.5 236V259" stroke="#666"/><rect x="1121.5" y="236.5" width="3" height="19" fill="#008000" stroke="#555" stroke-width="1"/><path d="M1127.5 213V235" stroke="#666"/><rect x="1125.5" y="213.5" width="3" height="18" fill="#008000" stroke="#555" stroke-width="1"/><path d="M1131.5 188V212" stroke="#666"/><rect x="1129.5" y="188.5" width="3" height="20" fill="#008000" stroke="#555" stroke-width="1"/><path d="M1136.5 180V203" stroke="#666"/><rect x="1134.5" y="180.5" width="3" height="5" fill="#008000" stroke="#555" stroke-width="1"/><path d="M1139.5 178V200" stroke="#666"/><rect x="1137.5" y="178.5" width="3" height="21" fill="#ff0000" stroke="#555" stroke-width="1"/><path d="M1144.5 197V207" stroke="#666"/><rect x="1142.5" y="204.5" width="3" height="2" fill="#ff0000" stroke="#555" stroke-width="1"/><path d="M1149.5 205V227" stroke="#666"/><rect x="1147.5" y="210.5" width="3" height="16" fill="#ff0000" stroke="#555" stroke-width="1"/><path d="M1153.5 219V236" stroke="#666"/><rect x="1151.5" y="222.5" width="3" height="13" fill="#ff0000" stroke="#555" stroke-width="1"/><path d="M1157.5 236V256" stroke="#666"/><rect x="1155.5" y="236.5" width="3" height="19" fill="#ff0000" stroke="#555" stroke-width="1"/><path d="M1161.5 254V280" stroke="#666"/><rect x="1159.5" y="259.5" width="3" height="20" fill="#ff0000" stroke="#555" stroke-width="1"/><path d="M1165.5 280V292" stroke="#666"/><rect x="1163.5" y="280.5" width="3" height="11" fill="#ff0000" stroke="#555" stroke-width="1"/><path d="M1170.5 289V309" stroke="#666"/><rect x="1168.5" y="289.5" width="3" height="19" fill="#008000" stroke="#555" stroke-width="1"/><path d="M1174.5 280V302" stroke="#666"/><rect x="1172.5" y="286.5" width="3" height="15" fill="#ff0000" stroke="#555" stroke-width="1"/><path d="M1178.5 295V308" stroke="#666"/><rect x="1176.5" y="295.5" width="3" height="12" fill="#ff0000" stroke="#555" stroke-width="1"/><path d="M1182.5 277V300" stroke="#666"/><rect x="1180.5" y="277.5" width="3" height="14" fill="#008000" stroke="#555" stroke-width="1"/><path d="M1187.5 266V288" stroke="#666"/><rect x="1185.5" y="275.5" width="3" height="12" fill="#ff0000" stroke="#555" stroke-width="1"/><path d="M1191.5 275V297" stroke="#666"/><rect x="1189.5" y="275.5" width="3" height="16" fill="#008000" stroke="#555" stroke-width="1"/><path d="M1195.5 259V275" stroke="#666"/><rect x="1193.5" y="259.5" width="3" height="11" fill="#008000" stroke="#555" stroke-width="1"/><path d="M1200.5 245V265" stroke="#666"/><rect x="1198.5" y="245.5" width="3" height="19" fill="#ff0000" stroke="#555" stroke-width="1"/><path d="M1204.5 254V271" stroke="#666"/><rect x="1202.5" y="254.5" width="3" height="16" fill="#008000" stroke="#555" stroke-width="1"/><path d="M1208.5 224V248" stroke="#666"/><rect x="1206.5" y="224.5" width="3" height="20" fill="#008000" stroke="#555" stroke-width="1"/><path d="M1212.5 210V230" stroke="#666"/><rect x="1210.5" y="210.5" width="3" height="10" fill="#008000" stroke="#555" stroke-width="1"/><path d="M1216.5 200V223" stroke="#666"/><rect x="1214.5" y="207.5" width="3" height="15" fill="#ff0000" stroke="#555" stroke-width="1"/><path d="M1221.5 210V233" stroke="#666"/><rect x="1219.5" y="210.5" width="3" height="16" fill="#008000" stroke="#555" stroke-width="1"/><path d="M1225.5 188V212" stroke="#666"/><rect x="1223.5" y="188.5" width="3" height="18" fill="#008000" stroke="#555" stroke-width="1"/><path d="M1229.5 174V197" stroke="#666"/><rect x="1227.5" y="174.5" width="3" height="12" fill="#008000" stroke="#555" stroke-width="1"/><path d="M1234.5 150V174" stroke="#666"/><rect x="1232.5" y="150.5" width="3" height="20" fill="#008000" stroke="#555" stroke-width="1"/><path d="M1238.5 136V159" stroke="#666"/><rect x="1236.5" y="147.5" width="3" height="11" fill="#ff0000" stroke="#555" stroke-width="1"/><path d="M1242.5 141V166" stroke="#666"/><rect x="1240.5" y="162.5" width="3" height="3" fill="#ff0000" stroke="#555" stroke-width="1"/><path d="M1247.5 153V177" stroke="#666"/><rect x="1245.5" y="153.5" width="3" height="14" fill="#008000" stroke="#555" stroke-width="1"/><path d="M1251.5 136V158" stroke="#666"/><rect x="1249.5" y="136.5" width="3" height="13" fill="#008000" stroke="#555" stroke-width="1"/><path d="M1255.5 130V153" stroke="#666"/><rect x="1253.5" y="132.5" width="3" height="20" fill="#ff0000" stroke="#555" stroke-width="1"/><path d="M1260.5 147V169" stroke="#666"/><rect x="1258.5" y="147.5" width="3" height="8" fill="#008000" stroke="#555" stroke-width="1"/><path d="M1264.5 130V152" stroke="#666"/><rect x="1262.5" y="130.5" width="3" height="14" fill="#008000" stroke="#555" stroke-width="1"/><path d="M1268.5 115V138" stroke="#666"/><rect x="1266.5" y="115.5" width="3" height="11" fill="#008000" stroke="#555" stroke-width="1"/><path d="M1273.5 106V130" stroke="#666"/><rect x="1271.5" y="112.5" width="3" height="17" fill="#ff0000" stroke="#555" stroke-width="1"/><path d="M1277.5 127V150" stroke="#666"/><rect x="1275.5" y="132.5" width="3" height="17" fill="#ff0000" stroke="#555" stroke-width="1"/><path d="M1281.5 130V153" stroke="#666"/><rect x="1279.5" y="130.5" width="3" height="22" fill="#008000" stroke="#555" stroke-width="1"/><path d="M1285.5 121V145" stroke="#666"/><rect x="1283.5" y="127.5" width="3" height="17" fill="#ff0000" stroke="#555" stroke-width="1"/><path d="M1290.5 139V162" stroke="#666"/><rect x="1288.5" y="147.5" width="3" height="14" fill="#ff0000" stroke="#555" stroke-width="1"/><path d="M1293.5 166V188" stroke="#666"/><rect x="1291.5" y="166.5" width="3" height="21" fill="#ff0000" stroke="#555" stroke-width="1"/><path d="M1298.5 177V200" stroke="#666"/><rect x="1296.5" y="177.5" width="3" height="14" fill="#008000" stroke="#555" stroke-width="1"/><path d="M1302.5 171V192" stroke="#666"/><rect x="1300.5" y="171.5" width="3" height="2" fill="#008000" stroke="#555" stroke-width="1"/><path d="M1306.5 165V186" stroke="#666"/><rect x="1304.5" y="168.5" width="3" height="17" fill="#ff0000" stroke="#555" stroke-width="1"/><path d="M1311.5 166V188" stroke="#666"/><rect x="1309.5" y="166.5" width="3" height="21" fill="#008000" stroke="#555" stroke-width="1"/><path d="M1315.5 159V182" stroke="#666"/><rect x="1313.5" y="159.5" width="3" height="2" fill="#008000" stroke="#555" stroke-width="1"/><path d="M1319.5 152V174" stroke="#666"/><rect x="1317.5" y="157.5" width="3" height="16" fill="#ff0000" stroke="#555" stroke-width="1"/><path d="M1324.5 171V194" stroke="#666"/><rect x="1322.5" y="171.5" width="3" height="5" fill="#008000" stroke="#555" stroke-width="1"/><path d="M1328.5 168V188" stroke="#666"/><rect x="1326.5" y="168.5" width="3" height="19" fill="#ff0000" stroke="#555" stroke-width="1"/><path d="M1332.5 183V206" stroke="#666"/><rect x="1330.5" y="183.5" width="3" height="8" fill="#008000" stroke="#555" stroke-width="1"/><path d="M1336.5 171V194" stroke="#666"/><rect x="1334.5" y="171.5" width="3" height="7" fill="#008000" stroke="#555" stroke-width="1"/><path d="M1341.5 168V188" stroke="#666"/><rect x="1339.5" y="168.5" width="3" height="19" fill="#ff0000" stroke="#555" stroke-width="1"/><path d="M1345.5 174V197" stroke="#666"/><rect x="1343.5" y="174.5" width="3" height="17" fill="#008000" stroke="#555" stroke-width="1"/><path d="M1349.5 171V195" stroke="#666"/><rect x="1347.5" y="171.5" width="3" height="23" fill="#ff0000" stroke="#555" stroke-width="1"/><path d="M1354.5 183V206" stroke="#666"/><rect x="1352.5" y="198.5" width="3" height="7" fill="#ff0000" stroke="#555" stroke-width="1"/><path d="M1358.5 192V215" stroke="#666"/><rect x="1356.5" y="192.5" width="3" height="16" fill="#008000" stroke="#555" stroke-width="1"/><path d="M1363.5 177V200" stroke="#666"/><rect x="1361.5" y="177.5" width="3" height="10" fill="#008000" stroke="#555" stroke-width="1"/><path d="M1366.5 171V195" stroke="#666"/><rect x="1364.5" y="171.5" width="3" height="1" fill="#008000" stroke="#555" stroke-width="1"/><path d="M1370.5 166V188" stroke="#666"/><rect x="1368.5" y="166.5" width="3" height="1" fill="#008000" stroke="#555" stroke-width="1"/><path d="M1375.5 147V169" stroke="#666"/><rect x="1373.5" y="162.5" width="3" height="6" fill="#ff0000" stroke="#555" stroke-width="1"/><path d="M1379.5 166V188" stroke="#666"/><rect x="1377.5" y="174.5" width="3" height="13" fill="#ff0000" stroke="#555" stroke-width="1"/><path d="M1383.5 189V200" stroke="#666"/><rect x="1381.5" y="192.5" width="3" height="5" fill="#ff0000" stroke="#555" stroke-width="1"/></g><g clip-path="url(#cm)" shape-rendering="auto"><path d="M737.8 698.8 L748.8 690.9 L761.2 684.7 L770.6 676.9 L783.1 670.0 L795.6 665.0 L803.4 658.8 L812.8 655.6 L823.8 651.2 L839.4 648.8 L851.9 644.1 L867.5 637.8 L886.2 629.4 L895.6 622.2 L908.1 615.3 L922.2 607.5 L942.5 603.4 L961.2 598.1 L967.5 592.5 L980.0 587.8 L995.6 584.1 L1011.2 579.4 L1026.9 575.3 L1042.5 570.0 L1058.1 564.4 L1073.8 556.6 L1089.4 548.1 L1105.0 542.5 L1111.2 537.8 L1130.0 530.0 L1136.2 525.3 L1144.1 522.2 L1150.3 511.2 L1161.2 506.6 L1173.8 502.5 L1186.2 499.4 L1195.6 498.8" stroke="#2196f3" stroke-width="3" fill="none" stroke-linejoin="round" stroke-linecap="round"/><path d="M1199 263 L1203.3 253.6" stroke="#ff7070" stroke-width="3" fill="none"/><path d="M1203.3 253.6 L1206.3 240.0 L1209.8 232.6 L1214.2 229.1 L1217.6 228.3 L1221.1 225.7 L1225.5 220.4 L1229.8 210.0 L1232.5 199.5 L1235.1 189.0 L1240.3 185.6 L1246.4 181.2 L1250.7 175.1 L1255.1 173.4 L1260.3 169.9 L1264.7 166.4 L1269.9 162.9 L1275.1 160.9 L1281.2 159.5 L1286.5 159.8" stroke="#2196f3" stroke-width="3" fill="none" stroke-linejoin="round"/><path d="M1286.8 159.2 L1294.0 159.9 L1302.7 162.0 L1309.9 162.8 L1318.5 162.8 L1324.3 163.5 L1331.5 165.7 L1338.7 166.4 L1347.4 167.1 L1353.2 168.5 L1361.8 169.3 L1367.6 169.3 L1374.8 169.6 L1382.7 170.7" stroke="#a82424" stroke-width="2.6" fill="none" stroke-linejoin="round"/><path d="M1310 162.8H1316M1367.6 169.3L1373 169.5" stroke="#2196f3" stroke-width="2.6"/><circle cx="378.8" cy="694.1" r="9.1" fill="rgba(255,0,0,0.82)"/><circle cx="677.9" cy="619.2" r="9.1" fill="rgba(10,125,10,0.82)"/><circle cx="712.2" cy="546.5" r="9.1" fill="rgba(10,125,10,0.82)"/><circle cx="715.2" cy="557.2" r="7.7" fill="rgba(10,125,10,0.82)"/><circle cx="763.6" cy="470.7" r="10.5" fill="rgba(10,125,10,0.82)"/><circle cx="870.3" cy="448.4" r="9.1" fill="rgba(10,125,10,0.82)"/><circle cx="904.4" cy="353.7" r="8.7" fill="rgba(10,125,10,0.82)"/><circle cx="985.4" cy="298.4" r="24.4" fill="rgba(255,0,0,0.82)"/><circle cx="977.6" cy="274.4" r="9.1" fill="rgba(10,125,10,0.82)"/><circle cx="972.3" cy="275.3" r="3.0" fill="rgba(255,0,0,0.82)"/><circle cx="1045.8" cy="320.1" r="9.0" fill="rgba(255,0,0,0.82)"/><circle cx="1084.3" cy="286.2" r="8.4" fill="rgba(10,125,10,0.82)"/><circle cx="1109.8" cy="274.5" r="8.4" fill="rgba(255,0,0,0.82)"/><circle cx="1147.8" cy="224.9" r="11.3" fill="rgba(255,0,0,0.82)"/><circle cx="1152.2" cy="217.0" r="14.8" fill="rgba(10,125,10,0.82)"/><circle cx="1157.4" cy="239.7" r="10.5" fill="rgba(255,0,0,0.82)"/><circle cx="1160.9" cy="277.1" r="9.1" fill="rgba(255,0,0,0.82)"/><circle cx="1167.9" cy="300.7" r="8.7" fill="rgba(255,0,0,0.82)"/><circle cx="28.4" cy="607.4" r="3" fill="#ff0000"/><circle cx="24.4" cy="635.8" r="3" fill="#008000"/><circle cx="41.3" cy="611.7" r="3" fill="#008000"/><circle cx="54.0" cy="604.4" r="3" fill="#ff0000"/><circle cx="58.2" cy="620.6" r="3" fill="#008000"/><circle cx="109.5" cy="595.7" r="3" fill="#ff0000"/><circle cx="118.1" cy="607.4" r="3" fill="#ff0000"/><circle cx="126.8" cy="581.3" r="3" fill="#ff0000"/><circle cx="216.6" cy="689.8" r="3" fill="#ff0000"/><circle cx="284.9" cy="638.4" r="3" fill="#008000"/><circle cx="293.6" cy="621.8" r="3" fill="#ff0000"/><circle cx="301.9" cy="653.2" r="3" fill="#008000"/><circle cx="323.2" cy="642.8" r="3" fill="#ff0000"/><circle cx="314.4" cy="650.2" r="3" fill="#008000"/><circle cx="357.9" cy="679.9" r="3" fill="#008000"/><circle cx="391.2" cy="676.7" r="3" fill="#008000"/><circle cx="421.8" cy="615.4" r="3" fill="#008000"/><circle cx="425.9" cy="629.7" r="3" fill="#008000"/><circle cx="464.6" cy="608.4" r="3" fill="#008000"/><circle cx="473.3" cy="607.9" r="3" fill="#ff0000"/><circle cx="486.0" cy="671.5" r="3" fill="#008000"/><circle cx="511.6" cy="654.9" r="3" fill="#ff0000"/><circle cx="515.8" cy="676.7" r="3" fill="#008000"/><circle cx="605.6" cy="690.7" r="3" fill="#008000"/><circle cx="652.8" cy="655.8" r="3" fill="#008000"/><circle cx="665.7" cy="673.6" r="3" fill="#008000"/><circle cx="686.6" cy="626.2" r="3" fill="#008000"/><circle cx="724.9" cy="539.6" r="3" fill="#ff0000"/><circle cx="733.7" cy="516.4" r="3" fill="#ff0000"/><circle cx="793.0" cy="439.5" r="3" fill="#ff0000"/><circle cx="811.0" cy="434.0" r="3" fill="#ff0000"/><circle cx="823.5" cy="425.0" r="3" fill="#ff0000"/><circle cx="879.0" cy="432.3" r="3" fill="#008000"/><circle cx="994.1" cy="298.4" r="3" fill="#ff0000"/><circle cx="1023.8" cy="318.9" r="3" fill="#ff0000"/><circle cx="1020.2" cy="327.9" r="3" fill="#ff0000"/><circle cx="1028.6" cy="340.8" r="3" fill="#008000"/><circle cx="1062.5" cy="301.5" r="3" fill="#ff0000"/><circle cx="1071.3" cy="308.7" r="3" fill="#008000"/><circle cx="1075.5" cy="320.1" r="3" fill="#008000"/><circle cx="1101.1" cy="268.4" r="3" fill="#ff0000"/><circle cx="1118.6" cy="261.5" r="3" fill="#008000"/><circle cx="1169.6" cy="280.6" r="3" fill="#ff0000"/><circle cx="1190.8" cy="266.2" r="3" fill="#ff0000"/><circle cx="1199.8" cy="275.7" r="3" fill="#008000"/><circle cx="1174.1" cy="311.1" r="3" fill="#008000"/><circle cx="1229.0" cy="166.4" r="3" fill="#ff0000"/><circle cx="1246.9" cy="145.2" r="3" fill="#ff0000"/><circle cx="1255.1" cy="161.2" r="3" fill="#008000"/><circle cx="1259.8" cy="139.8" r="3" fill="#ff0000"/><circle cx="1272.5" cy="138.2" r="3" fill="#008000"/><circle cx="1285.2" cy="152.5" r="3" fill="#008000"/><circle cx="1302.5" cy="162.6" r="3" fill="#ff0000"/><circle cx="1315.2" cy="150.7" r="3" fill="#ff0000"/><circle cx="1323.6" cy="162.6" r="3" fill="#ff0000"/><circle cx="1332.1" cy="174.8" r="3" fill="#ff0000"/><circle cx="1306.5" cy="194.3" r="3" fill="#008000"/><circle cx="1327.8" cy="196.6" r="3" fill="#008000"/><circle cx="1370.4" cy="157.2" r="3" fill="#ff0000"/><circle cx="1383.3" cy="208.6" r="3" fill="#008000"/></g><path d="M1383 197.5H1475" stroke="#222" stroke-width="1"/><path d="M22 700.5H1536M22 748.5H1536M22 795.5H1485" stroke="#777" stroke-width="1.5"/><path d="M1485.5 24V795" stroke="#8c9096" stroke-width="1.5"/><path d="M22 725.5H1385" stroke="#b0b0b0" stroke-width="1" stroke-dasharray="4 3"/><g clip-path="url(#cp)"><rect x="23" y="726" width="3" height="2" fill="#ff0000"/><rect x="28" y="723" width="3" height="2" fill="#008000"/><rect x="32" y="723" width="3" height="2" fill="#008000"/><rect x="36" y="723" width="3" height="2" fill="#008000"/><rect x="40" y="726" width="3" height="2" fill="#ff0000"/><path d="M45.5 724V726" stroke="#8a8a8a"/><rect x="44" y="726" width="3" height="2" fill="#ff0000"/><rect x="49" y="726" width="3" height="2" fill="#ff0000"/><rect x="53" y="723" width="3" height="2" fill="#008000"/><rect x="57" y="726" width="3" height="2" fill="#ff0000"/><path d="M62.5 724V727" stroke="#8a8a8a"/><rect x="61" y="726" width="3" height="2" fill="#ff0000"/><rect x="65" y="726" width="3" height="2" fill="#ff0000"/><path d="M71.5 723V728" stroke="#8a8a8a"/><rect x="70" y="723" width="3" height="2" fill="#008000"/><rect x="74" y="723" width="3" height="2" fill="#008000"/><rect x="78" y="726" width="3" height="2" fill="#ff0000"/><path d="M83.5 723V728" stroke="#8a8a8a"/><rect x="82" y="723" width="3" height="2" fill="#008000"/><path d="M87.5 724V728" stroke="#8a8a8a"/><rect x="86" y="723" width="3" height="2" fill="#008000"/><rect x="91" y="723" width="3" height="2" fill="#008000"/><rect x="95" y="726" width="3" height="2" fill="#ff0000"/><rect x="99" y="723" width="3" height="2" fill="#008000"/><rect x="103" y="726" width="3" height="2" fill="#ff0000"/><path d="M108.5 721V726" stroke="#8a8a8a"/><rect x="107" y="723" width="3" height="2" fill="#008000"/><path d="M113.5 721V729" stroke="#8a8a8a"/><rect x="112" y="726" width="3" height="2" fill="#ff0000"/><rect x="116" y="723" width="3" height="2" fill="#008000"/><path d="M121.5 721V726" stroke="#8a8a8a"/><rect x="120" y="723" width="3" height="2" fill="#008000"/><path d="M125.5 722V726" stroke="#8a8a8a"/><rect x="124" y="723" width="3" height="2" fill="#008000"/><rect x="128" y="726" width="3" height="2" fill="#ff0000"/><rect x="133" y="726" width="3" height="2" fill="#ff0000"/><rect x="137" y="726" width="3" height="2" fill="#ff0000"/><path d="M142.5 724V727" stroke="#8a8a8a"/><rect x="141" y="726" width="3" height="2" fill="#ff0000"/><rect x="145" y="726" width="3" height="2" fill="#ff0000"/><rect x="149" y="726" width="3" height="2" fill="#ff0000"/><rect x="154" y="723" width="3" height="2" fill="#008000"/><rect x="158" y="723" width="3" height="2" fill="#008000"/><path d="M163.5 723V729" stroke="#8a8a8a"/><rect x="162" y="726" width="3" height="2" fill="#ff0000"/><rect x="166" y="726" width="3" height="2" fill="#ff0000"/><rect x="170" y="723" width="3" height="2" fill="#008000"/><path d="M176.5 721V728" stroke="#8a8a8a"/><rect x="175" y="723" width="3" height="2" fill="#008000"/><rect x="179" y="726" width="3" height="2" fill="#ff0000"/><rect x="183" y="726" width="3" height="2" fill="#ff0000"/><path d="M188.5 723V726" stroke="#8a8a8a"/><rect x="187" y="726" width="3" height="2" fill="#ff0000"/><path d="M192.5 724V727" stroke="#8a8a8a"/><rect x="191" y="726" width="3" height="2" fill="#ff0000"/><rect x="196" y="723" width="3" height="2" fill="#008000"/><rect x="200" y="726" width="3" height="2" fill="#ff0000"/><rect x="204" y="726" width="3" height="2" fill="#ff0000"/><rect x="208" y="726" width="3" height="2" fill="#ff0000"/><path d="M213.5 724V729" stroke="#8a8a8a"/><rect x="212" y="726" width="3" height="2" fill="#ff0000"/><path d="M218.5 724V726" stroke="#8a8a8a"/><rect x="217" y="726" width="3" height="2" fill="#ff0000"/><path d="M222.5 723V728" stroke="#8a8a8a"/><rect x="221" y="726" width="3" height="2" fill="#ff0000"/><rect x="225" y="726" width="3" height="2" fill="#ff0000"/><path d="M230.5 721V726" stroke="#8a8a8a"/><rect x="229" y="723" width="3" height="2" fill="#008000"/><rect x="233" y="723" width="3" height="2" fill="#008000"/><rect x="238" y="723" width="3" height="2" fill="#008000"/><rect x="242" y="723" width="3" height="2" fill="#008000"/><rect x="246" y="726" width="3" height="2" fill="#ff0000"/><path d="M251.5 724V728" stroke="#8a8a8a"/><rect x="250" y="723" width="3" height="2" fill="#008000"/><path d="M255.5 724V729" stroke="#8a8a8a"/><rect x="254" y="726" width="3" height="2" fill="#ff0000"/><rect x="259" y="723" width="3" height="2" fill="#008000"/><path d="M264.5 723V727" stroke="#8a8a8a"/><rect x="263" y="726" width="3" height="2" fill="#ff0000"/><rect x="267" y="723" width="3" height="2" fill="#008000"/><rect x="271" y="723" width="3" height="2" fill="#008000"/><rect x="275" y="723" width="3" height="2" fill="#008000"/><path d="M281.5 723V728" stroke="#8a8a8a"/><rect x="280" y="723" width="3" height="2" fill="#008000"/><rect x="284" y="726" width="3" height="2" fill="#ff0000"/><path d="M289.5 722V727" stroke="#8a8a8a"/><rect x="288" y="726" width="3" height="2" fill="#ff0000"/><rect x="292" y="723" width="3" height="2" fill="#008000"/><rect x="296" y="723" width="3" height="2" fill="#008000"/><rect x="301" y="726" width="3" height="2" fill="#ff0000"/><rect x="305" y="726" width="3" height="2" fill="#ff0000"/><rect x="309" y="723" width="3" height="2" fill="#008000"/><rect x="313" y="726" width="3" height="2" fill="#ff0000"/><rect x="317" y="726" width="3" height="2" fill="#ff0000"/><path d="M323.5 723V726" stroke="#8a8a8a"/><rect x="322" y="723" width="3" height="2" fill="#008000"/><path d="M327.5 722V726" stroke="#8a8a8a"/><rect x="326" y="726" width="3" height="2" fill="#ff0000"/><rect x="330" y="726" width="3" height="2" fill="#ff0000"/><rect x="334" y="726" width="3" height="2" fill="#ff0000"/><path d="M339.5 722V727" stroke="#8a8a8a"/><rect x="338" y="723" width="3" height="2" fill="#008000"/><rect x="343" y="726" width="3" height="2" fill="#ff0000"/><rect x="347" y="722" width="3" height="3" fill="#008000"/><rect x="351" y="723" width="3" height="2" fill="#008000"/><rect x="355" y="726" width="3" height="2" fill="#ff0000"/><rect x="359" y="726" width="3" height="2" fill="#ff0000"/><path d="M365.5 724V727" stroke="#8a8a8a"/><rect x="364" y="726" width="3" height="2" fill="#ff0000"/><path d="M369.5 722V728" stroke="#8a8a8a"/><rect x="368" y="723" width="3" height="2" fill="#008000"/><path d="M373.5 724V726" stroke="#8a8a8a"/><rect x="372" y="726" width="3" height="2" fill="#ff0000"/><rect x="376" y="726" width="3" height="2" fill="#ff0000"/><rect x="380" y="723" width="3" height="2" fill="#008000"/><path d="M386.5 722V727" stroke="#8a8a8a"/><rect x="385" y="723" width="3" height="2" fill="#008000"/><rect x="389" y="726" width="3" height="4" fill="#ff0000"/><rect x="393" y="723" width="3" height="2" fill="#008000"/><rect x="397" y="723" width="3" height="2" fill="#008000"/><rect x="401" y="723" width="3" height="2" fill="#008000"/><path d="M407.5 722V728" stroke="#8a8a8a"/><rect x="406" y="726" width="3" height="2" fill="#ff0000"/><rect x="410" y="726" width="3" height="4" fill="#ff0000"/><path d="M415.5 722V729" stroke="#8a8a8a"/><rect x="414" y="723" width="3" height="2" fill="#008000"/><rect x="418" y="723" width="3" height="2" fill="#008000"/><rect x="422" y="726" width="3" height="2" fill="#ff0000"/><rect x="427" y="726" width="3" height="2" fill="#ff0000"/><rect x="431" y="726" width="3" height="2" fill="#ff0000"/><rect x="435" y="726" width="3" height="2" fill="#ff0000"/><path d="M440.5 721V729" stroke="#8a8a8a"/><rect x="439" y="721" width="3" height="4" fill="#008000"/><rect x="443" y="723" width="3" height="2" fill="#008000"/><path d="M449.5 723V729" stroke="#8a8a8a"/><rect x="448" y="723" width="3" height="2" fill="#008000"/><path d="M453.5 724V726" stroke="#8a8a8a"/><rect x="452" y="726" width="3" height="4" fill="#ff0000"/><rect x="456" y="723" width="3" height="2" fill="#008000"/><rect x="460" y="723" width="3" height="2" fill="#008000"/><path d="M465.5 722V727" stroke="#8a8a8a"/><rect x="464" y="726" width="3" height="2" fill="#ff0000"/><path d="M470.5 721V727" stroke="#8a8a8a"/><rect x="469" y="726" width="3" height="3" fill="#ff0000"/><rect x="473" y="722" width="3" height="3" fill="#008000"/><rect x="477" y="726" width="3" height="2" fill="#ff0000"/><rect x="481" y="726" width="3" height="2" fill="#ff0000"/><path d="M486.5 722V727" stroke="#8a8a8a"/><rect x="485" y="726" width="3" height="2" fill="#ff0000"/><rect x="490" y="726" width="3" height="5" fill="#ff0000"/><rect x="494" y="723" width="3" height="2" fill="#008000"/><rect x="498" y="723" width="3" height="2" fill="#008000"/><path d="M503.5 721V726" stroke="#8a8a8a"/><rect x="502" y="726" width="3" height="3" fill="#ff0000"/><rect x="506" y="726" width="3" height="2" fill="#ff0000"/><rect x="511" y="723" width="3" height="2" fill="#008000"/><rect x="515" y="726" width="3" height="2" fill="#ff0000"/><rect x="519" y="726" width="3" height="3" fill="#ff0000"/><rect x="523" y="726" width="3" height="3" fill="#ff0000"/><path d="M528.5 724V727" stroke="#8a8a8a"/><rect x="527" y="726" width="3" height="2" fill="#ff0000"/><path d="M533.5 724V726" stroke="#8a8a8a"/><rect x="532" y="726" width="3" height="2" fill="#ff0000"/><path d="M537.5 721V729" stroke="#8a8a8a"/><rect x="536" y="723" width="3" height="2" fill="#008000"/><rect x="540" y="723" width="3" height="2" fill="#008000"/><path d="M545.5 721V728" stroke="#8a8a8a"/><rect x="544" y="726" width="3" height="4" fill="#ff0000"/><rect x="548" y="721" width="3" height="4" fill="#008000"/><path d="M554.5 721V727" stroke="#8a8a8a"/><rect x="553" y="726" width="3" height="2" fill="#ff0000"/><path d="M558.5 724V727" stroke="#8a8a8a"/><rect x="557" y="722" width="3" height="3" fill="#008000"/><path d="M562.5 722V729" stroke="#8a8a8a"/><rect x="561" y="723" width="3" height="2" fill="#008000"/><path d="M566.5 722V728" stroke="#8a8a8a"/><rect x="565" y="723" width="3" height="2" fill="#008000"/><rect x="569" y="726" width="3" height="4" fill="#ff0000"/><rect x="574" y="726" width="3" height="2" fill="#ff0000"/><rect x="578" y="723" width="3" height="2" fill="#008000"/><rect x="582" y="726" width="3" height="2" fill="#ff0000"/><rect x="586" y="722" width="3" height="3" fill="#008000"/><rect x="590" y="723" width="3" height="2" fill="#008000"/><rect x="595" y="723" width="3" height="2" fill="#008000"/><rect x="599" y="723" width="3" height="2" fill="#008000"/><rect x="603" y="726" width="3" height="2" fill="#ff0000"/><rect x="607" y="723" width="3" height="2" fill="#008000"/><rect x="611" y="726" width="3" height="5" fill="#ff0000"/><rect x="616" y="723" width="3" height="2" fill="#008000"/><rect x="620" y="723" width="3" height="2" fill="#008000"/><path d="M625.5 721V726" stroke="#8a8a8a"/><rect x="624" y="723" width="3" height="2" fill="#008000"/><path d="M629.5 721V728" stroke="#8a8a8a"/><rect x="628" y="723" width="3" height="2" fill="#008000"/><rect x="632" y="723" width="3" height="2" fill="#008000"/><rect x="637" y="723" width="3" height="2" fill="#008000"/><path d="M642.5 724V727" stroke="#8a8a8a"/><rect x="641" y="726" width="3" height="2" fill="#ff0000"/><path d="M646.5 722V729" stroke="#8a8a8a"/><rect x="645" y="726" width="3" height="3" fill="#ff0000"/><rect x="649" y="719" width="3" height="6" fill="#008000"/><rect x="653" y="726" width="3" height="5" fill="#ff0000"/><path d="M659.5 724V729" stroke="#8a8a8a"/><rect x="658" y="726" width="3" height="6" fill="#ff0000"/><path d="M663.5 724V726" stroke="#8a8a8a"/><rect x="662" y="719" width="3" height="6" fill="#008000"/><path d="M667.5 724V728" stroke="#8a8a8a"/><rect x="666" y="726" width="3" height="2" fill="#ff0000"/><rect x="670" y="723" width="3" height="2" fill="#008000"/><path d="M675.5 721V728" stroke="#8a8a8a"/><rect x="674" y="723" width="3" height="2" fill="#008000"/><rect x="679" y="723" width="3" height="2" fill="#008000"/><path d="M684.5 724V728" stroke="#8a8a8a"/><rect x="683" y="722" width="3" height="3" fill="#008000"/><rect x="687" y="726" width="3" height="2" fill="#ff0000"/><rect x="691" y="726" width="3" height="3" fill="#ff0000"/><rect x="695" y="723" width="3" height="2" fill="#008000"/><rect x="700" y="723" width="3" height="2" fill="#008000"/><path d="M705.5 724V726" stroke="#8a8a8a"/><rect x="704" y="720" width="3" height="5" fill="#008000"/><rect x="708" y="723" width="3" height="2" fill="#008000"/><path d="M713.5 724V727" stroke="#8a8a8a"/><rect x="712" y="723" width="3" height="2" fill="#008000"/><rect x="716" y="722" width="3" height="3" fill="#008000"/><path d="M722.5 723V726" stroke="#8a8a8a"/><rect x="721" y="726" width="3" height="2" fill="#ff0000"/><rect x="725" y="723" width="3" height="2" fill="#008000"/><rect x="729" y="721" width="3" height="4" fill="#008000"/><path d="M734.5 723V728" stroke="#8a8a8a"/><rect x="733" y="723" width="3" height="2" fill="#008000"/><rect x="737" y="726" width="3" height="4" fill="#ff0000"/><rect x="742" y="722" width="3" height="3" fill="#008000"/><rect x="746" y="723" width="3" height="2" fill="#008000"/><rect x="750" y="723" width="3" height="2" fill="#008000"/><path d="M755.5 722V727" stroke="#8a8a8a"/><rect x="754" y="720" width="3" height="5" fill="#008000"/><rect x="758" y="722" width="3" height="3" fill="#008000"/><path d="M764.5 723V727" stroke="#8a8a8a"/><rect x="763" y="721" width="3" height="4" fill="#008000"/><rect x="767" y="721" width="3" height="4" fill="#008000"/><rect x="771" y="722" width="3" height="3" fill="#008000"/><rect x="775" y="719" width="3" height="6" fill="#008000"/><path d="M780.5 723V726" stroke="#8a8a8a"/><rect x="779" y="723" width="3" height="2" fill="#008000"/><rect x="784" y="726" width="3" height="2" fill="#ff0000"/><path d="M789.5 722V729" stroke="#8a8a8a"/><rect x="788" y="726" width="3" height="2" fill="#ff0000"/><rect x="792" y="720" width="3" height="5" fill="#008000"/><rect x="796" y="721" width="3" height="4" fill="#008000"/><rect x="800" y="726" width="3" height="2" fill="#ff0000"/><rect x="805" y="726" width="3" height="2" fill="#ff0000"/><path d="M810.5 722V726" stroke="#8a8a8a"/><rect x="809" y="721" width="3" height="4" fill="#008000"/><path d="M814.5 722V726" stroke="#8a8a8a"/><rect x="813" y="726" width="3" height="2" fill="#ff0000"/><path d="M818.5 721V727" stroke="#8a8a8a"/><rect x="817" y="722" width="3" height="3" fill="#008000"/><rect x="821" y="723" width="3" height="2" fill="#008000"/><rect x="826" y="726" width="3" height="2" fill="#ff0000"/><path d="M831.5 721V726" stroke="#8a8a8a"/><rect x="830" y="723" width="3" height="2" fill="#008000"/><rect x="834" y="726" width="3" height="5" fill="#ff0000"/><rect x="838" y="726" width="3" height="3" fill="#ff0000"/><rect x="842" y="721" width="3" height="4" fill="#008000"/><rect x="847" y="726" width="3" height="2" fill="#ff0000"/><rect x="851" y="721" width="3" height="4" fill="#008000"/><rect x="855" y="723" width="3" height="2" fill="#008000"/><path d="M860.5 723V729" stroke="#8a8a8a"/><rect x="859" y="726" width="3" height="2" fill="#ff0000"/><rect x="863" y="723" width="3" height="2" fill="#008000"/><path d="M869.5 723V727" stroke="#8a8a8a"/><rect x="868" y="723" width="3" height="2" fill="#008000"/><path d="M873.5 721V726" stroke="#8a8a8a"/><rect x="872" y="722" width="3" height="3" fill="#008000"/><rect x="876" y="723" width="3" height="2" fill="#008000"/><rect x="880" y="723" width="3" height="2" fill="#008000"/><rect x="884" y="723" width="3" height="2" fill="#008000"/><rect x="889" y="720" width="3" height="5" fill="#008000"/><rect x="893" y="720" width="3" height="5" fill="#008000"/><rect x="897" y="723" width="3" height="2" fill="#008000"/><rect x="901" y="726" width="3" height="2" fill="#ff0000"/><rect x="905" y="721" width="3" height="4" fill="#008000"/><rect x="910" y="726" width="3" height="2" fill="#ff0000"/><rect x="914" y="726" width="3" height="3" fill="#ff0000"/><rect x="918" y="723" width="3" height="2" fill="#008000"/><rect x="922" y="721" width="3" height="4" fill="#008000"/><rect x="926" y="723" width="3" height="2" fill="#008000"/><rect x="931" y="726" width="3" height="2" fill="#ff0000"/><rect x="935" y="726" width="3" height="5" fill="#ff0000"/><rect x="939" y="722" width="3" height="3" fill="#008000"/><rect x="943" y="726" width="3" height="2" fill="#ff0000"/><rect x="947" y="726" width="3" height="2" fill="#ff0000"/><rect x="952" y="723" width="3" height="2" fill="#008000"/><rect x="956" y="723" width="3" height="2" fill="#008000"/><rect x="960" y="723" width="3" height="2" fill="#008000"/><path d="M965.5 723V729" stroke="#8a8a8a"/><rect x="964" y="723" width="3" height="2" fill="#008000"/><rect x="968" y="726" width="3" height="3" fill="#ff0000"/><rect x="973" y="726" width="3" height="2" fill="#ff0000"/><rect x="977" y="718" width="3" height="7" fill="#008000"/><rect x="981" y="726" width="3" height="2" fill="#ff0000"/><path d="M986.5 724V727" stroke="#8a8a8a"/><rect x="985" y="726" width="3" height="4" fill="#ff0000"/><rect x="989" y="726" width="3" height="2" fill="#ff0000"/><rect x="994" y="719" width="3" height="6" fill="#008000"/><rect x="998" y="726" width="3" height="2" fill="#ff0000"/><rect x="1002" y="722" width="3" height="3" fill="#008000"/><rect x="1006" y="726" width="3" height="9" fill="#ff0000"/><path d="M1011.5 721V728" stroke="#8a8a8a"/><rect x="1010" y="726" width="3" height="3" fill="#ff0000"/><rect x="1015" y="726" width="3" height="5" fill="#ff0000"/><rect x="1019" y="723" width="3" height="2" fill="#008000"/><path d="M1024.5 721V728" stroke="#8a8a8a"/><rect x="1023" y="723" width="3" height="2" fill="#008000"/><path d="M1028.5 724V727" stroke="#8a8a8a"/><rect x="1027" y="726" width="3" height="2" fill="#ff0000"/><path d="M1032.5 721V726" stroke="#8a8a8a"/><rect x="1031" y="726" width="3" height="5" fill="#ff0000"/><path d="M1037.5 723V726" stroke="#8a8a8a"/><rect x="1036" y="722" width="3" height="3" fill="#008000"/><rect x="1040" y="726" width="3" height="2" fill="#ff0000"/><rect x="1044" y="726" width="3" height="8" fill="#ff0000"/><rect x="1048" y="726" width="3" height="4" fill="#ff0000"/><path d="M1053.5 721V726" stroke="#8a8a8a"/><rect x="1052" y="723" width="3" height="2" fill="#008000"/><path d="M1058.5 723V726" stroke="#8a8a8a"/><rect x="1057" y="726" width="3" height="4" fill="#ff0000"/><path d="M1062.5 721V726" stroke="#8a8a8a"/><rect x="1061" y="723" width="3" height="2" fill="#008000"/><path d="M1066.5 722V726" stroke="#8a8a8a"/><rect x="1065" y="723" width="3" height="2" fill="#008000"/><rect x="1069" y="726" width="3" height="2" fill="#ff0000"/><rect x="1073" y="726" width="3" height="3" fill="#ff0000"/><rect x="1078" y="723" width="3" height="2" fill="#008000"/><rect x="1082" y="722" width="3" height="3" fill="#008000"/><rect x="1086" y="723" width="3" height="2" fill="#008000"/><path d="M1091.5 723V729" stroke="#8a8a8a"/><rect x="1090" y="723" width="3" height="2" fill="#008000"/><path d="M1095.5 722V728" stroke="#8a8a8a"/><rect x="1094" y="726" width="3" height="6" fill="#ff0000"/><rect x="1099" y="723" width="3" height="2" fill="#008000"/><rect x="1103" y="716" width="3" height="9" fill="#008000"/><path d="M1108.5 722V727" stroke="#8a8a8a"/><rect x="1107" y="721" width="3" height="4" fill="#008000"/><path d="M1112.5 722V727" stroke="#8a8a8a"/><rect x="1111" y="717" width="3" height="8" fill="#008000"/><path d="M1116.5 724V729" stroke="#8a8a8a"/><rect x="1115" y="726" width="3" height="2" fill="#ff0000"/><rect x="1120" y="723" width="3" height="2" fill="#008000"/><path d="M1125.5 721V726" stroke="#8a8a8a"/><rect x="1124" y="720" width="3" height="5" fill="#008000"/><path d="M1129.5 721V726" stroke="#8a8a8a"/><rect x="1128" y="723" width="3" height="2" fill="#008000"/><rect x="1132" y="723" width="3" height="2" fill="#008000"/><path d="M1137.5 724V727" stroke="#8a8a8a"/><rect x="1136" y="722" width="3" height="3" fill="#008000"/><path d="M1142.5 722V729" stroke="#8a8a8a"/><rect x="1141" y="726" width="3" height="3" fill="#ff0000"/><rect x="1145" y="726" width="3" height="8" fill="#ff0000"/><rect x="1149" y="726" width="3" height="2" fill="#ff0000"/><rect x="1153" y="726" width="3" height="8" fill="#ff0000"/><path d="M1158.5 722V729" stroke="#8a8a8a"/><rect x="1157" y="726" width="3" height="2" fill="#ff0000"/><rect x="1162" y="726" width="3" height="2" fill="#ff0000"/><rect x="1166" y="726" width="3" height="4" fill="#ff0000"/><rect x="1170" y="723" width="3" height="2" fill="#008000"/><path d="M1175.5 721V727" stroke="#8a8a8a"/><rect x="1174" y="726" width="3" height="7" fill="#ff0000"/><path d="M1179.5 724V727" stroke="#8a8a8a"/><rect x="1178" y="726" width="3" height="2" fill="#ff0000"/><rect x="1183" y="721" width="3" height="4" fill="#008000"/><rect x="1187" y="726" width="3" height="9" fill="#ff0000"/><rect x="1191" y="723" width="3" height="2" fill="#008000"/><rect x="1195" y="723" width="3" height="2" fill="#008000"/><path d="M1200.5 723V726" stroke="#8a8a8a"/><rect x="1199" y="726" width="3" height="2" fill="#ff0000"/><rect x="1204" y="723" width="3" height="2" fill="#008000"/><path d="M1209.5 723V726" stroke="#8a8a8a"/><rect x="1208" y="723" width="3" height="2" fill="#008000"/><rect x="1212" y="723" width="3" height="2" fill="#008000"/><path d="M1217.5 722V726" stroke="#8a8a8a"/><rect x="1216" y="726" width="3" height="2" fill="#ff0000"/><path d="M1221.5 723V729" stroke="#8a8a8a"/><rect x="1220" y="723" width="3" height="2" fill="#008000"/><rect x="1225" y="723" width="3" height="2" fill="#008000"/><path d="M1230.5 722V729" stroke="#8a8a8a"/><rect x="1229" y="723" width="3" height="2" fill="#008000"/><rect x="1233" y="723" width="3" height="2" fill="#008000"/><path d="M1238.5 724V726" stroke="#8a8a8a"/><rect x="1237" y="726" width="3" height="2" fill="#ff0000"/><rect x="1241" y="726" width="3" height="2" fill="#ff0000"/><rect x="1246" y="723" width="3" height="2" fill="#008000"/><rect x="1250" y="723" width="3" height="2" fill="#008000"/><rect x="1254" y="726" width="3" height="2" fill="#ff0000"/><path d="M1259.5 723V728" stroke="#8a8a8a"/><rect x="1258" y="723" width="3" height="2" fill="#008000"/><rect x="1262" y="723" width="3" height="2" fill="#008000"/><path d="M1268.5 722V727" stroke="#8a8a8a"/><rect x="1267" y="723" width="3" height="2" fill="#008000"/><rect x="1271" y="726" width="3" height="2" fill="#ff0000"/><rect x="1275" y="726" width="3" height="2" fill="#ff0000"/><path d="M1280.5 722V728" stroke="#8a8a8a"/><rect x="1279" y="723" width="3" height="2" fill="#008000"/><path d="M1284.5 723V727" stroke="#8a8a8a"/><rect x="1283" y="726" width="3" height="2" fill="#ff0000"/><path d="M1289.5 723V726" stroke="#8a8a8a"/><rect x="1288" y="726" width="3" height="2" fill="#ff0000"/><rect x="1292" y="726" width="3" height="2" fill="#ff0000"/><path d="M1297.5 724V728" stroke="#8a8a8a"/><rect x="1296" y="723" width="3" height="2" fill="#008000"/><path d="M1301.5 722V727" stroke="#8a8a8a"/><rect x="1300" y="723" width="3" height="2" fill="#008000"/><path d="M1305.5 721V727" stroke="#8a8a8a"/><rect x="1304" y="726" width="3" height="2" fill="#ff0000"/><path d="M1310.5 723V728" stroke="#8a8a8a"/><rect x="1309" y="723" width="3" height="2" fill="#008000"/><rect x="1313" y="723" width="3" height="2" fill="#008000"/><rect x="1317" y="726" width="3" height="2" fill="#ff0000"/><rect x="1321" y="723" width="3" height="2" fill="#008000"/><path d="M1326.5 721V729" stroke="#8a8a8a"/><rect x="1325" y="726" width="3" height="2" fill="#ff0000"/><rect x="1330" y="723" width="3" height="2" fill="#008000"/><path d="M1335.5 723V727" stroke="#8a8a8a"/><rect x="1334" y="723" width="3" height="2" fill="#008000"/><rect x="1338" y="726" width="3" height="2" fill="#ff0000"/><rect x="1342" y="723" width="3" height="2" fill="#008000"/><rect x="1346" y="726" width="3" height="2" fill="#ff0000"/><path d="M1352.5 721V729" stroke="#8a8a8a"/><rect x="1351" y="726" width="3" height="2" fill="#ff0000"/><rect x="1355" y="723" width="3" height="2" fill="#008000"/><path d="M1360.5 721V727" stroke="#8a8a8a"/><rect x="1359" y="723" width="3" height="2" fill="#008000"/><rect x="1363" y="723" width="3" height="2" fill="#008000"/><rect x="1367" y="723" width="3" height="2" fill="#008000"/><path d="M1373.5 721V726" stroke="#8a8a8a"/><rect x="1372" y="723" width="3" height="2" fill="#008000"/><rect x="1376" y="726" width="3" height="2" fill="#ff0000"/><path d="M1381.5 724V727" stroke="#8a8a8a"/><rect x="1380" y="726" width="3" height="2" fill="#ff0000"/><rect x="1107" y="705" width="3" height="20" fill="#008000"/><rect x="1087" y="713" width="3" height="12" fill="#008000"/><rect x="1147" y="713" width="3" height="12" fill="#008000"/><rect x="1124" y="715" width="3" height="10" fill="#008000"/><rect x="1068" y="717" width="3" height="8" fill="#008000"/><rect x="775" y="715" width="3" height="10" fill="#008000"/><rect x="682" y="716" width="3" height="9" fill="#008000"/><rect x="828" y="726" width="3" height="9" fill="#ff0000"/><rect x="788" y="726" width="3" height="12" fill="#ff0000"/><rect x="775" y="726" width="3" height="9" fill="#ff0000"/><rect x="1014" y="726" width="3" height="18" fill="#ff0000"/><rect x="955" y="726" width="3" height="10" fill="#ff0000"/><rect x="987" y="726" width="3" height="10" fill="#ff0000"/><rect x="1164" y="726" width="3" height="8" fill="#ff0000"/><rect x="1142" y="726" width="3" height="10" fill="#ff0000"/><rect x="377" y="726" width="3" height="10" fill="#ff0000"/><rect x="337" y="726" width="3" height="7" fill="#ff0000"/><rect x="181" y="726" width="3" height="7" fill="#ff0000"/><rect x="61" y="791" width="3" height="1" fill="#ff0000"/><rect x="65" y="791" width="3" height="1" fill="#ff0000"/><rect x="70" y="791" width="3" height="1" fill="#008000"/><rect x="74" y="791" width="3" height="1" fill="#008000"/><rect x="78" y="790" width="3" height="2" fill="#ff0000"/><rect x="82" y="791" width="3" height="1" fill="#008000"/><rect x="86" y="791" width="3" height="1" fill="#008000"/><rect x="91" y="791" width="3" height="1" fill="#008000"/><rect x="95" y="791" width="3" height="1" fill="#ff0000"/><rect x="99" y="791" width="3" height="1" fill="#008000"/><rect x="103" y="791" width="3" height="1" fill="#ff0000"/><rect x="107" y="791" width="3" height="1" fill="#008000"/><rect x="112" y="791" width="3" height="1" fill="#ff0000"/><rect x="116" y="791" width="3" height="1" fill="#008000"/><rect x="120" y="791" width="3" height="1" fill="#008000"/><rect x="124" y="791" width="3" height="1" fill="#008000"/><rect x="128" y="790" width="3" height="2" fill="#ff0000"/><rect x="133" y="791" width="3" height="1" fill="#ff0000"/><rect x="137" y="791" width="3" height="1" fill="#ff0000"/><rect x="141" y="790" width="3" height="2" fill="#ff0000"/><rect x="145" y="791" width="3" height="1" fill="#ff0000"/><rect x="149" y="791" width="3" height="1" fill="#ff0000"/><rect x="154" y="791" width="3" height="1" fill="#008000"/><rect x="158" y="790" width="3" height="2" fill="#008000"/><rect x="162" y="790" width="3" height="2" fill="#ff0000"/><rect x="166" y="791" width="3" height="1" fill="#ff0000"/><rect x="170" y="791" width="3" height="1" fill="#008000"/><rect x="175" y="791" width="3" height="1" fill="#008000"/><rect x="179" y="791" width="3" height="1" fill="#ff0000"/><rect x="183" y="790" width="3" height="2" fill="#ff0000"/><rect x="187" y="791" width="3" height="1" fill="#ff0000"/><rect x="191" y="791" width="3" height="1" fill="#ff0000"/><rect x="196" y="791" width="3" height="1" fill="#008000"/><rect x="200" y="791" width="3" height="1" fill="#ff0000"/><rect x="204" y="789" width="3" height="3" fill="#ff0000"/><rect x="208" y="791" width="3" height="1" fill="#ff0000"/><rect x="212" y="791" width="3" height="1" fill="#ff0000"/><rect x="217" y="791" width="3" height="1" fill="#ff0000"/><rect x="221" y="791" width="3" height="1" fill="#ff0000"/><rect x="225" y="790" width="3" height="2" fill="#ff0000"/><rect x="229" y="790" width="3" height="2" fill="#008000"/><rect x="233" y="790" width="3" height="2" fill="#008000"/><rect x="238" y="789" width="3" height="3" fill="#008000"/><rect x="242" y="791" width="3" height="1" fill="#008000"/><rect x="246" y="790" width="3" height="2" fill="#ff0000"/><rect x="250" y="790" width="3" height="2" fill="#008000"/><rect x="254" y="790" width="3" height="2" fill="#ff0000"/><rect x="259" y="789" width="3" height="3" fill="#008000"/><rect x="263" y="790" width="3" height="2" fill="#ff0000"/><rect x="267" y="790" width="3" height="2" fill="#008000"/><rect x="271" y="791" width="3" height="1" fill="#008000"/><rect x="275" y="790" width="3" height="2" fill="#008000"/><rect x="280" y="791" width="3" height="1" fill="#008000"/><rect x="284" y="789" width="3" height="3" fill="#ff0000"/><rect x="288" y="791" width="3" height="1" fill="#ff0000"/><rect x="292" y="789" width="3" height="3" fill="#008000"/><rect x="296" y="790" width="3" height="2" fill="#008000"/><rect x="301" y="790" width="3" height="2" fill="#ff0000"/><rect x="305" y="791" width="3" height="1" fill="#ff0000"/><rect x="309" y="791" width="3" height="1" fill="#008000"/><rect x="313" y="790" width="3" height="2" fill="#ff0000"/><rect x="317" y="791" width="3" height="1" fill="#ff0000"/><rect x="322" y="789" width="3" height="3" fill="#008000"/><rect x="326" y="790" width="3" height="2" fill="#ff0000"/><rect x="330" y="791" width="3" height="1" fill="#ff0000"/><rect x="334" y="789" width="3" height="3" fill="#ff0000"/><rect x="338" y="790" width="3" height="2" fill="#008000"/><rect x="343" y="791" width="3" height="1" fill="#ff0000"/><rect x="347" y="791" width="3" height="1" fill="#008000"/><rect x="351" y="789" width="3" height="3" fill="#008000"/><rect x="355" y="789" width="3" height="3" fill="#ff0000"/><rect x="359" y="790" width="3" height="2" fill="#ff0000"/><rect x="364" y="791" width="3" height="1" fill="#ff0000"/><rect x="368" y="791" width="3" height="1" fill="#008000"/><rect x="372" y="790" width="3" height="2" fill="#ff0000"/><rect x="376" y="790" width="3" height="2" fill="#ff0000"/><rect x="380" y="791" width="3" height="1" fill="#008000"/><rect x="385" y="790" width="3" height="2" fill="#008000"/><rect x="389" y="790" width="3" height="2" fill="#ff0000"/><rect x="393" y="789" width="3" height="3" fill="#008000"/><rect x="397" y="789" width="3" height="3" fill="#008000"/><rect x="401" y="789" width="3" height="3" fill="#008000"/><rect x="406" y="789" width="3" height="3" fill="#ff0000"/><rect x="410" y="790" width="3" height="2" fill="#ff0000"/><rect x="414" y="791" width="3" height="1" fill="#008000"/><rect x="418" y="789" width="3" height="3" fill="#008000"/><rect x="422" y="790" width="3" height="2" fill="#ff0000"/><rect x="427" y="790" width="3" height="2" fill="#ff0000"/><rect x="431" y="791" width="3" height="1" fill="#ff0000"/><rect x="435" y="788" width="3" height="4" fill="#ff0000"/><rect x="439" y="791" width="3" height="1" fill="#008000"/><rect x="443" y="789" width="3" height="3" fill="#008000"/><rect x="448" y="789" width="3" height="3" fill="#008000"/><rect x="452" y="791" width="3" height="1" fill="#ff0000"/><rect x="456" y="790" width="3" height="2" fill="#008000"/><rect x="460" y="791" width="3" height="1" fill="#008000"/><rect x="464" y="789" width="3" height="3" fill="#ff0000"/><rect x="469" y="790" width="3" height="2" fill="#ff0000"/><rect x="473" y="791" width="3" height="1" fill="#008000"/><rect x="477" y="789" width="3" height="3" fill="#ff0000"/><rect x="481" y="789" width="3" height="3" fill="#ff0000"/><rect x="485" y="791" width="3" height="1" fill="#ff0000"/><rect x="490" y="791" width="3" height="1" fill="#ff0000"/><rect x="494" y="790" width="3" height="2" fill="#008000"/><rect x="498" y="790" width="3" height="2" fill="#008000"/><rect x="502" y="791" width="3" height="1" fill="#ff0000"/><rect x="506" y="789" width="3" height="3" fill="#ff0000"/><rect x="511" y="789" width="3" height="3" fill="#008000"/><rect x="515" y="788" width="3" height="4" fill="#ff0000"/><rect x="519" y="791" width="3" height="1" fill="#ff0000"/><rect x="523" y="788" width="3" height="4" fill="#ff0000"/><rect x="527" y="791" width="3" height="1" fill="#ff0000"/><rect x="532" y="791" width="3" height="1" fill="#ff0000"/><rect x="536" y="790" width="3" height="2" fill="#008000"/><rect x="540" y="791" width="3" height="1" fill="#008000"/><rect x="544" y="789" width="3" height="3" fill="#ff0000"/><rect x="548" y="791" width="3" height="1" fill="#008000"/><rect x="553" y="789" width="3" height="3" fill="#ff0000"/><rect x="557" y="788" width="3" height="4" fill="#008000"/><rect x="561" y="788" width="3" height="4" fill="#008000"/><rect x="565" y="790" width="3" height="2" fill="#008000"/><rect x="569" y="788" width="3" height="4" fill="#ff0000"/><rect x="574" y="789" width="3" height="3" fill="#ff0000"/><rect x="578" y="790" width="3" height="2" fill="#008000"/><rect x="582" y="789" width="3" height="3" fill="#ff0000"/><rect x="586" y="788" width="3" height="4" fill="#008000"/><rect x="590" y="788" width="3" height="4" fill="#008000"/><rect x="595" y="791" width="3" height="1" fill="#008000"/><rect x="599" y="791" width="3" height="1" fill="#008000"/><rect x="603" y="789" width="3" height="3" fill="#ff0000"/><rect x="607" y="789" width="3" height="3" fill="#008000"/><rect x="611" y="787" width="3" height="5" fill="#ff0000"/><rect x="616" y="787" width="3" height="5" fill="#008000"/><rect x="620" y="790" width="3" height="2" fill="#008000"/><rect x="624" y="788" width="3" height="4" fill="#008000"/><rect x="628" y="789" width="3" height="3" fill="#008000"/><rect x="632" y="787" width="3" height="5" fill="#008000"/><rect x="637" y="789" width="3" height="3" fill="#008000"/><rect x="641" y="788" width="3" height="4" fill="#ff0000"/><rect x="645" y="790" width="3" height="2" fill="#ff0000"/><rect x="649" y="790" width="3" height="2" fill="#008000"/><rect x="653" y="787" width="3" height="5" fill="#ff0000"/><rect x="658" y="789" width="3" height="3" fill="#ff0000"/><rect x="662" y="785" width="3" height="7" fill="#008000"/><rect x="666" y="786" width="3" height="6" fill="#ff0000"/><rect x="670" y="785" width="3" height="7" fill="#008000"/><rect x="674" y="784" width="3" height="8" fill="#008000"/><rect x="679" y="782" width="3" height="10" fill="#008000"/><rect x="683" y="783" width="3" height="9" fill="#008000"/><rect x="687" y="787" width="3" height="5" fill="#ff0000"/><rect x="691" y="784" width="3" height="8" fill="#ff0000"/><rect x="695" y="787" width="3" height="5" fill="#008000"/><rect x="700" y="781" width="3" height="11" fill="#008000"/><rect x="704" y="787" width="3" height="5" fill="#008000"/><rect x="708" y="788" width="3" height="4" fill="#008000"/><rect x="712" y="784" width="3" height="8" fill="#008000"/><rect x="716" y="785" width="3" height="7" fill="#008000"/><rect x="721" y="782" width="3" height="10" fill="#ff0000"/><rect x="725" y="781" width="3" height="11" fill="#008000"/><rect x="729" y="782" width="3" height="10" fill="#008000"/><rect x="733" y="786" width="3" height="6" fill="#008000"/><rect x="737" y="787" width="3" height="5" fill="#ff0000"/><rect x="742" y="785" width="3" height="7" fill="#008000"/><rect x="746" y="785" width="3" height="7" fill="#008000"/><rect x="750" y="784" width="3" height="8" fill="#008000"/><rect x="754" y="780" width="3" height="12" fill="#008000"/><rect x="758" y="784" width="3" height="8" fill="#008000"/><rect x="763" y="785" width="3" height="7" fill="#008000"/><rect x="767" y="788" width="3" height="4" fill="#008000"/><rect x="771" y="780" width="3" height="12" fill="#008000"/><rect x="775" y="784" width="3" height="8" fill="#008000"/><rect x="779" y="785" width="3" height="7" fill="#008000"/><rect x="784" y="785" width="3" height="7" fill="#ff0000"/><rect x="788" y="783" width="3" height="9" fill="#ff0000"/><rect x="792" y="787" width="3" height="5" fill="#008000"/><rect x="796" y="786" width="3" height="6" fill="#008000"/><rect x="800" y="783" width="3" height="9" fill="#ff0000"/><rect x="805" y="782" width="3" height="10" fill="#ff0000"/><rect x="809" y="785" width="3" height="7" fill="#008000"/><rect x="813" y="788" width="3" height="4" fill="#ff0000"/><rect x="817" y="781" width="3" height="11" fill="#008000"/><rect x="821" y="785" width="3" height="7" fill="#008000"/><rect x="826" y="780" width="3" height="12" fill="#ff0000"/><rect x="830" y="781" width="3" height="11" fill="#008000"/><rect x="834" y="780" width="3" height="12" fill="#ff0000"/><rect x="838" y="780" width="3" height="12" fill="#ff0000"/><rect x="842" y="779" width="3" height="13" fill="#008000"/><rect x="847" y="781" width="3" height="11" fill="#ff0000"/><rect x="851" y="784" width="3" height="8" fill="#008000"/><rect x="855" y="778" width="3" height="14" fill="#008000"/><rect x="859" y="784" width="3" height="8" fill="#ff0000"/><rect x="863" y="788" width="3" height="4" fill="#008000"/><rect x="868" y="779" width="3" height="13" fill="#008000"/><rect x="872" y="785" width="3" height="7" fill="#008000"/><rect x="876" y="782" width="3" height="10" fill="#008000"/><rect x="880" y="783" width="3" height="9" fill="#008000"/><rect x="884" y="784" width="3" height="8" fill="#008000"/><rect x="889" y="782" width="3" height="10" fill="#008000"/><rect x="893" y="779" width="3" height="13" fill="#008000"/><rect x="897" y="778" width="3" height="14" fill="#008000"/><rect x="901" y="787" width="3" height="5" fill="#ff0000"/><rect x="905" y="786" width="3" height="6" fill="#008000"/><rect x="910" y="778" width="3" height="14" fill="#ff0000"/><rect x="914" y="780" width="3" height="12" fill="#ff0000"/><rect x="918" y="779" width="3" height="13" fill="#008000"/><rect x="922" y="784" width="3" height="8" fill="#008000"/><rect x="926" y="780" width="3" height="12" fill="#008000"/><rect x="931" y="787" width="3" height="5" fill="#ff0000"/><rect x="935" y="787" width="3" height="5" fill="#ff0000"/><rect x="939" y="784" width="3" height="8" fill="#008000"/><rect x="943" y="787" width="3" height="5" fill="#ff0000"/><rect x="947" y="787" width="3" height="5" fill="#ff0000"/><rect x="952" y="783" width="3" height="9" fill="#008000"/><rect x="956" y="782" width="3" height="10" fill="#008000"/><rect x="960" y="784" width="3" height="8" fill="#008000"/><rect x="964" y="787" width="3" height="5" fill="#008000"/><rect x="968" y="785" width="3" height="7" fill="#ff0000"/><rect x="973" y="785" width="3" height="7" fill="#ff0000"/><rect x="977" y="786" width="3" height="6" fill="#008000"/><rect x="981" y="781" width="3" height="11" fill="#ff0000"/><rect x="985" y="788" width="3" height="4" fill="#ff0000"/><rect x="989" y="781" width="3" height="11" fill="#ff0000"/><rect x="994" y="789" width="3" height="3" fill="#008000"/><rect x="998" y="787" width="3" height="5" fill="#ff0000"/><rect x="1002" y="789" width="3" height="3" fill="#008000"/><rect x="1006" y="787" width="3" height="5" fill="#ff0000"/><rect x="1010" y="781" width="3" height="11" fill="#ff0000"/><rect x="1015" y="788" width="3" height="4" fill="#ff0000"/><rect x="1019" y="788" width="3" height="4" fill="#008000"/><rect x="1023" y="784" width="3" height="8" fill="#008000"/><rect x="1027" y="782" width="3" height="10" fill="#ff0000"/><rect x="1031" y="780" width="3" height="12" fill="#ff0000"/><rect x="1036" y="787" width="3" height="5" fill="#008000"/><rect x="1040" y="788" width="3" height="4" fill="#ff0000"/><rect x="1044" y="783" width="3" height="9" fill="#ff0000"/><rect x="1048" y="779" width="3" height="13" fill="#ff0000"/><rect x="1052" y="780" width="3" height="12" fill="#008000"/><rect x="1057" y="785" width="3" height="7" fill="#ff0000"/><rect x="1061" y="781" width="3" height="11" fill="#008000"/><rect x="1065" y="780" width="3" height="12" fill="#008000"/><rect x="1069" y="776" width="3" height="16" fill="#ff0000"/><rect x="1073" y="781" width="3" height="11" fill="#ff0000"/><rect x="1078" y="775" width="3" height="17" fill="#008000"/><rect x="1082" y="776" width="3" height="16" fill="#008000"/><rect x="1086" y="779" width="3" height="13" fill="#008000"/><rect x="1090" y="779" width="3" height="13" fill="#008000"/><rect x="1094" y="780" width="3" height="12" fill="#ff0000"/><rect x="1099" y="785" width="3" height="7" fill="#008000"/><rect x="1103" y="779" width="3" height="13" fill="#008000"/><rect x="1107" y="785" width="3" height="7" fill="#008000"/><rect x="1111" y="777" width="3" height="15" fill="#008000"/><rect x="1115" y="787" width="3" height="5" fill="#ff0000"/><rect x="1120" y="774" width="3" height="18" fill="#008000"/><rect x="1124" y="785" width="3" height="7" fill="#008000"/><rect x="1128" y="780" width="3" height="12" fill="#008000"/><rect x="1132" y="784" width="3" height="8" fill="#008000"/><rect x="1136" y="782" width="3" height="10" fill="#008000"/><rect x="1141" y="776" width="3" height="16" fill="#ff0000"/><rect x="1145" y="782" width="3" height="10" fill="#ff0000"/><rect x="1149" y="782" width="3" height="10" fill="#ff0000"/><rect x="1153" y="778" width="3" height="14" fill="#ff0000"/><rect x="1157" y="783" width="3" height="9" fill="#ff0000"/><rect x="1162" y="784" width="3" height="8" fill="#ff0000"/><rect x="1166" y="784" width="3" height="8" fill="#ff0000"/><rect x="1170" y="778" width="3" height="14" fill="#008000"/><rect x="1174" y="782" width="3" height="10" fill="#ff0000"/><rect x="1178" y="782" width="3" height="10" fill="#ff0000"/><rect x="1183" y="778" width="3" height="14" fill="#008000"/><rect x="1187" y="779" width="3" height="13" fill="#ff0000"/><rect x="1191" y="783" width="3" height="9" fill="#008000"/><rect x="1195" y="786" width="3" height="6" fill="#008000"/><rect x="1199" y="785" width="3" height="7" fill="#ff0000"/><rect x="1204" y="790" width="3" height="2" fill="#008000"/><rect x="1208" y="791" width="3" height="1" fill="#008000"/><rect x="1212" y="791" width="3" height="1" fill="#008000"/><rect x="1216" y="791" width="3" height="1" fill="#ff0000"/><rect x="1220" y="790" width="3" height="2" fill="#008000"/><rect x="1225" y="791" width="3" height="1" fill="#008000"/><rect x="1229" y="791" width="3" height="1" fill="#008000"/><rect x="1233" y="791" width="3" height="1" fill="#008000"/><rect x="1237" y="791" width="3" height="1" fill="#ff0000"/><rect x="1241" y="791" width="3" height="1" fill="#ff0000"/><rect x="1246" y="791" width="3" height="1" fill="#008000"/><rect x="1250" y="791" width="3" height="1" fill="#008000"/><rect x="1254" y="791" width="3" height="1" fill="#ff0000"/><rect x="1258" y="790" width="3" height="2" fill="#008000"/><rect x="1262" y="790" width="3" height="2" fill="#008000"/><rect x="1267" y="791" width="3" height="1" fill="#008000"/><rect x="1271" y="791" width="3" height="1" fill="#ff0000"/><rect x="1275" y="791" width="3" height="1" fill="#ff0000"/><rect x="1279" y="791" width="3" height="1" fill="#008000"/><rect x="1283" y="791" width="3" height="1" fill="#ff0000"/><rect x="1288" y="791" width="3" height="1" fill="#ff0000"/><rect x="1292" y="791" width="3" height="1" fill="#ff0000"/><rect x="1296" y="791" width="3" height="1" fill="#008000"/><rect x="1300" y="791" width="3" height="1" fill="#008000"/><rect x="1304" y="791" width="3" height="1" fill="#ff0000"/><rect x="1309" y="791" width="3" height="1" fill="#008000"/><rect x="1313" y="791" width="3" height="1" fill="#008000"/><rect x="1317" y="791" width="3" height="1" fill="#ff0000"/><rect x="1321" y="791" width="3" height="1" fill="#008000"/><rect x="1325" y="791" width="3" height="1" fill="#ff0000"/><rect x="1330" y="791" width="3" height="1" fill="#008000"/><rect x="1334" y="791" width="3" height="1" fill="#008000"/><rect x="1338" y="790" width="3" height="2" fill="#ff0000"/><rect x="1342" y="790" width="3" height="2" fill="#008000"/><rect x="1346" y="791" width="3" height="1" fill="#ff0000"/><rect x="1351" y="791" width="3" height="1" fill="#ff0000"/><rect x="1355" y="791" width="3" height="1" fill="#008000"/><rect x="1359" y="791" width="3" height="1" fill="#008000"/><rect x="1363" y="791" width="3" height="1" fill="#008000"/><rect x="1367" y="791" width="3" height="1" fill="#008000"/><rect x="1372" y="790" width="3" height="2" fill="#008000"/><rect x="1376" y="790" width="3" height="2" fill="#ff0000"/><rect x="1380" y="791" width="3" height="1" fill="#ff0000"/><rect x="1148" y="754" width="3" height="38" fill="#008000"/><rect x="1129" y="776" width="3" height="16" fill="#008000"/><rect x="1109" y="773" width="3" height="19" fill="#ff0000"/><rect x="1152" y="778" width="3" height="14" fill="#ff0000"/><rect x="1164" y="778" width="3" height="14" fill="#ff0000"/><rect x="1091" y="773" width="3" height="19" fill="#ff0000"/><rect x="1103" y="776" width="3" height="16" fill="#008000"/><rect x="1059" y="778" width="3" height="14" fill="#008000"/><rect x="1072" y="780" width="3" height="12" fill="#ff0000"/><rect x="1079" y="779" width="3" height="13" fill="#008000"/><rect x="1086" y="780" width="3" height="12" fill="#ff0000"/><rect x="779" y="780" width="3" height="12" fill="#008000"/><rect x="750" y="776" width="3" height="16" fill="#008000"/><rect x="761" y="780" width="3" height="12" fill="#008000"/><rect x="701" y="777" width="3" height="15" fill="#008000"/><rect x="792" y="776" width="3" height="16" fill="#ff0000"/><rect x="809" y="775" width="3" height="17" fill="#ff0000"/><rect x="849" y="780" width="3" height="12" fill="#ff0000"/><rect x="871" y="781" width="3" height="11" fill="#008000"/><rect x="878" y="782" width="3" height="10" fill="#008000"/><rect x="1010" y="777" width="3" height="15" fill="#008000"/><rect x="1109" y="768" width="3" height="24" fill="#909090"/></g><g shape-rendering="auto"><circle cx="840.5" cy="733.5" r="3.5" fill="none" stroke="#ff0000" stroke-width="1.5"/><circle cx="840.5" cy="789.5" r="3.5" fill="none" stroke="#ff0000" stroke-width="1.5"/><circle cx="840" cy="648.75" r="3" fill="none" stroke="#2196f3" stroke-width="1.2"/></g><path d="M1485 26.5H1490 M1485 56.5H1490 M1485 85.5H1490 M1485 115.5H1490 M1485 144.5H1490 M1485 173.5H1490 M1485 203.5H1490 M1485 232.5H1490 M1485 262.5H1490 M1485 291.5H1490 M1485 321.5H1490 M1485 350.5H1490 M1485 380.5H1490 M1485 409.5H1490 M1485 439.5H1490 M1485 468.5H1490 M1485 498.5H1490 M1485 527.5H1490 M1485 557.5H1490 M1485 586.5H1490 M1485 616.5H1490 M1485 645.5H1490 M1485 674.5H1490 M45.5 795V800 M126.5 795V800 M207.5 795V800 M288.5 795V800 M370.5 795V800 M451.5 795V800 M532.5 795V800 M613.5 795V800 M695.5 795V800 M776.5 795V800 M857.5 795V800 M938.5 795V800 M1020.5 795V800 M1101.5 795V800 M1182.5 795V800 M1263.5 795V800 M1345.5 795V800" stroke="#555" stroke-width="1"/></svg><div class="a" style="left:23px;top:25px;width:320px;height:15px;background:#fff"></div><div class="a" style="left:40.0px;top:21.0px;font-size:10px;line-height:13px;color:#e4e4e4;font-weight:400;white-space:nowrap;transform:scaleX(0.8068);transform-origin:0 0;">Trading Station by Ekmeleon - Powered by ATAS - ESM4@CME</div><div class="a" style="left:23px;top:25px;width:12px;height:11px;border:1px solid #ddd"></div><div class="a" style="left:28.6px;top:26.6px;font-size:10.5px;line-height:14px;color:#cf9c38;font-weight:400;white-space:nowrap;transform:scaleX(0.9178);transform-origin:0 0;">2024.15.05 18:00:18 O:5313.25 H:5313.25 L:5311.25 C:5311.25 V:1892</div><div class="a" style="left:1492.0px;top:700.5px;font-size:10px;line-height:13px;color:#222;font-weight:400;white-space:nowrap;transform:scaleX(0.8989);transform-origin:0 0;">2447</div><div class="a" style="left:1490.8px;top:737.8px;font-size:10px;line-height:13px;color:#222;font-weight:400;white-space:nowrap;transform:scaleX(0.9461);transform-origin:0 0;">-2184</div><div class="a" style="left:1492.0px;top:748.2px;font-size:10px;line-height:13px;color:#222;font-weight:400;white-space:nowrap;transform:scaleX(0.9528);transform-origin:0 0;">37939</div><div class="a" style="left:26.8px;top:702.8px;font-size:10.5px;line-height:14px;color:#222;font-weight:400;white-space:nowrap;transform:scaleX(0.9136);transform-origin:0 0;">Delta(Bars, 0,0, True)</div><div class="a" style="left:26.8px;top:751.0px;font-size:10.5px;line-height:14px;color:#222;font-weight:400;white-space:nowrap;transform:scaleX(0.9078);transform-origin:0 0;">Volume</div><div class="a" style="left:1321.4px;top:686.4px;font-size:10px;line-height:13px;color:#e02828;font-weight:400;white-space:nowrap;transform:scaleX(0.9417);transform-origin:0 0;">42224011</div><div class="a" style="left:1492.0px;top:20.1px;font-size:10px;line-height:13px;color:#333;font-weight:400;white-space:nowrap;transform:scaleX(0.9487);transform-origin:0 0;">5350.00</div><div class="a" style="left:1492.0px;top:49.6px;font-size:10px;line-height:13px;color:#333;font-weight:400;white-space:nowrap;transform:scaleX(0.9487);transform-origin:0 0;">5347.50</div><div class="a" style="left:1492.0px;top:79.0px;font-size:10px;line-height:13px;color:#333;font-weight:400;white-space:nowrap;transform:scaleX(0.9487);transform-origin:0 0;">5345.00</div><div class="a" style="left:1492.0px;top:108.5px;font-size:10px;line-height:13px;color:#333;font-weight:400;white-space:nowrap;transform:scaleX(0.9487);transform-origin:0 0;">5342.50</div><div class="a" style="left:1492.0px;top:138.0px;font-size:10px;line-height:13px;color:#333;font-weight:400;white-space:nowrap;transform:scaleX(0.9487);transform-origin:0 0;">5340.00</div><div class="a" style="left:1492.0px;top:167.4px;font-size:10px;line-height:13px;color:#333;font-weight:400;white-space:nowrap;transform:scaleX(0.9487);transform-origin:0 0;">5337.50</div><div class="a" style="left:1492.0px;top:196.9px;font-size:10px;line-height:13px;color:#333;font-weight:400;white-space:nowrap;transform:scaleX(0.9487);transform-origin:0 0;">5335.00</div><div class="a" style="left:1492.0px;top:226.4px;font-size:10px;line-height:13px;color:#333;font-weight:400;white-space:nowrap;transform:scaleX(0.9487);transform-origin:0 0;">5332.50</div><div class="a" style="left:1492.0px;top:255.9px;font-size:10px;line-height:13px;color:#333;font-weight:400;white-space:nowrap;transform:scaleX(0.9487);transform-origin:0 0;">5330.00</div><div class="a" style="left:1492.0px;top:285.3px;font-size:10px;line-height:13px;color:#333;font-weight:400;white-space:nowrap;transform:scaleX(0.9487);transform-origin:0 0;">5327.50</div><div class="a" style="left:1492.0px;top:314.8px;font-size:10px;line-height:13px;color:#333;font-weight:400;white-space:nowrap;transform:scaleX(0.9487);transform-origin:0 0;">5325.00</div><div class="a" style="left:1492.0px;top:344.3px;font-size:10px;line-height:13px;color:#333;font-weight:400;white-space:nowrap;transform:scaleX(0.9487);transform-origin:0 0;">5322.50</div><div class="a" style="left:1492.0px;top:373.7px;font-size:10px;line-height:13px;color:#333;font-weight:400;white-space:nowrap;transform:scaleX(0.9487);transform-origin:0 0;">5320.00</div><div class="a" style="left:1492.0px;top:403.2px;font-size:10px;line-height:13px;color:#333;font-weight:400;white-space:nowrap;transform:scaleX(0.9487);transform-origin:0 0;">5317.50</div><div class="a" style="left:1492.0px;top:432.7px;font-size:10px;line-height:13px;color:#333;font-weight:400;white-space:nowrap;transform:scaleX(0.9487);transform-origin:0 0;">5315.00</div><div class="a" style="left:1492.0px;top:462.1px;font-size:10px;line-height:13px;color:#333;font-weight:400;white-space:nowrap;transform:scaleX(0.9487);transform-origin:0 0;">5312.50</div><div class="a" style="left:1492.0px;top:491.6px;font-size:10px;line-height:13px;color:#333;font-weight:400;white-space:nowrap;transform:scaleX(0.9487);transform-origin:0 0;">5310.00</div><div class="a" style="left:1492.0px;top:521.1px;font-size:10px;line-height:13px;color:#333;font-weight:400;white-space:nowrap;transform:scaleX(0.9487);transform-origin:0 0;">5307.50</div><div class="a" style="left:1492.0px;top:550.6px;font-size:10px;line-height:13px;color:#333;font-weight:400;white-space:nowrap;transform:scaleX(0.9487);transform-origin:0 0;">5305.00</div><div class="a" style="left:1492.0px;top:580.0px;font-size:10px;line-height:13px;color:#333;font-weight:400;white-space:nowrap;transform:scaleX(0.9487);transform-origin:0 0;">5302.50</div><div class="a" style="left:1492.0px;top:609.5px;font-size:10px;line-height:13px;color:#333;font-weight:400;white-space:nowrap;transform:scaleX(0.9487);transform-origin:0 0;">5300.00</div><div class="a" style="left:1492.0px;top:639.0px;font-size:10px;line-height:13px;color:#333;font-weight:400;white-space:nowrap;transform:scaleX(0.9487);transform-origin:0 0;">5297.50</div><div class="a" style="left:1492.0px;top:668.4px;font-size:10px;line-height:13px;color:#333;font-weight:400;white-space:nowrap;transform:scaleX(0.9487);transform-origin:0 0;">5295.00</div><div class="a" style="left:22.5px;top:798.4px;font-size:10.5px;line-height:14px;color:#333;font-weight:400;white-space:nowrap;transform:scaleX(0.9052);transform-origin:0 0;">14:30:26</div><div class="a" style="left:103.8px;top:798.4px;font-size:10.5px;line-height:14px;color:#333;font-weight:400;white-space:nowrap;transform:scaleX(0.9052);transform-origin:0 0;">14:33:06</div><div class="a" style="left:185.0px;top:798.4px;font-size:10.5px;line-height:14px;color:#333;font-weight:400;white-space:nowrap;transform:scaleX(0.9052);transform-origin:0 0;">14:39:15</div><div class="a" style="left:266.2px;top:798.4px;font-size:10.5px;line-height:14px;color:#333;font-weight:400;white-space:nowrap;transform:scaleX(0.9052);transform-origin:0 0;">14:49:23</div><div class="a" style="left:347.5px;top:798.4px;font-size:10.5px;line-height:14px;color:#333;font-weight:400;white-space:nowrap;transform:scaleX(0.9052);transform-origin:0 0;">15:18:26</div><div class="a" style="left:428.8px;top:798.4px;font-size:10.5px;line-height:14px;color:#333;font-weight:400;white-space:nowrap;transform:scaleX(0.9052);transform-origin:0 0;">15:40:08</div><div class="a" style="left:510.0px;top:798.4px;font-size:10.5px;line-height:14px;color:#333;font-weight:400;white-space:nowrap;transform:scaleX(0.9052);transform-origin:0 0;">15:50:05</div><div class="a" style="left:591.2px;top:798.4px;font-size:10.5px;line-height:14px;color:#333;font-weight:400;white-space:nowrap;transform:scaleX(0.9052);transform-origin:0 0;">16:02:23</div><div class="a" style="left:672.5px;top:798.4px;font-size:10.5px;line-height:14px;color:#333;font-weight:400;white-space:nowrap;transform:scaleX(0.9052);transform-origin:0 0;">16:28:04</div><div class="a" style="left:753.8px;top:798.4px;font-size:10.5px;line-height:14px;color:#333;font-weight:400;white-space:nowrap;transform:scaleX(0.9052);transform-origin:0 0;">17:15:51</div><div class="a" style="left:916.2px;top:798.4px;font-size:10.5px;line-height:14px;color:#333;font-weight:400;white-space:nowrap;transform:scaleX(0.9052);transform-origin:0 0;">19:42:02</div><div class="a" style="left:997.5px;top:798.4px;font-size:10.5px;line-height:14px;color:#333;font-weight:400;white-space:nowrap;transform:scaleX(0.9052);transform-origin:0 0;">20:34:48</div><div class="a" style="left:1078.8px;top:798.4px;font-size:10.5px;line-height:14px;color:#333;font-weight:400;white-space:nowrap;transform:scaleX(0.9052);transform-origin:0 0;">21:49:58</div><div class="a" style="left:1160.0px;top:798.4px;font-size:10.5px;line-height:14px;color:#333;font-weight:400;white-space:nowrap;transform:scaleX(0.9052);transform-origin:0 0;">22:15:15</div><div class="a" style="left:1241.2px;top:798.4px;font-size:10.5px;line-height:14px;color:#333;font-weight:400;white-space:nowrap;transform:scaleX(0.9052);transform-origin:0 0;">04:26:40</div><div class="a" style="left:1322.5px;top:798.4px;font-size:10.5px;line-height:14px;color:#333;font-weight:400;white-space:nowrap;transform:scaleX(0.9228);transform-origin:0 0;">11:30:55</div><svg class="a" style="left:1486px;top:141px" width="46" height="12"><path d="M0 6L6 0H46V12H6Z" fill="#000"/></svg><div class="a" style="left:1490.5px;top:140.5px;font-size:10px;line-height:13px;color:#f0f0e0;font-weight:400;white-space:nowrap;transform:scaleX(0.9487);transform-origin:0 0;">5339.75</div><svg class="a" style="left:1486px;top:165px" width="46" height="12"><path d="M0 6L6 0H46V12H6Z" fill="#b52a2a"/></svg><div class="a" style="left:1490.5px;top:164.5px;font-size:10px;line-height:13px;color:#fff;font-weight:400;white-space:nowrap;transform:scaleX(0.9487);transform-origin:0 0;">5337.78</div><svg class="a" style="left:1486px;top:181px" width="46" height="12"><path d="M0 6L6 0H46V12H6Z" fill="#ff8a8a"/></svg><div class="a" style="left:1490.5px;top:180.5px;font-size:10px;line-height:13px;color:#333;font-weight:400;white-space:nowrap;transform:scaleX(0.9487);transform-origin:0 0;">5336.50</div><svg class="a" style="left:1486px;top:191px" width="46" height="12"><path d="M0 6L6 0H46V12H6Z" fill="#000"/></svg><div class="a" style="left:1490.5px;top:190.5px;font-size:10px;line-height:13px;color:#f0f0e0;font-weight:400;white-space:nowrap;transform:scaleX(0.9487);transform-origin:0 0;">5335.50</div><svg class="a" style="left:1486px;top:292px" width="46" height="12"><path d="M0 6L6 0H46V12H6Z" fill="#ff8a8a"/></svg><div class="a" style="left:1490.5px;top:291.5px;font-size:10px;line-height:13px;color:#333;font-weight:400;white-space:nowrap;transform:scaleX(0.9487);transform-origin:0 0;">5327.00</div><svg class="a" style="left:1486px;top:719px" width="23" height="12"><path d="M0 6L6 0H23V12H6Z" fill="#008000"/></svg><div class="a" style="left:1490.5px;top:718.5px;font-size:10px;line-height:13px;color:#fff;font-weight:400;white-space:nowrap;transform:scaleX(0.9438);transform-origin:0 0;">60</div><svg class="a" style="left:1486px;top:783px" width="34" height="12"><path d="M0 6L6 0H34V12H6Z" fill="#ff0000"/></svg><div class="a" style="left:1490.5px;top:782.5px;font-size:10px;line-height:13px;color:#fff;font-weight:400;white-space:nowrap;transform:scaleX(0.9213);transform-origin:0 0;">2558</div><div class="a" style="left:797px;top:800px;width:90px;height:11px;background:#111"></div><div class="a" style="left:798.0px;top:798.4px;font-size:10.5px;line-height:14px;color:#f0f0e8;font-weight:400;white-space:nowrap;transform:scaleX(0.9030);transform-origin:0 0;">15.05.2024 18:00:18</div><svg class="a" style="left:1447px;top:25px" width="19" height="18"><rect x="1" y="1" width="16" height="16" rx="2" stroke="#777" fill="#fff" stroke-width="1.2"/><path d="M5 4L11 9L5 14Z M12 4H14V14H12Z" fill="#000"/></svg><svg class="a" style="left:1522px;top:24px" width="15" height="14"><rect x="1" y="1" width="11" height="11" stroke="#555" fill="#fff"/><path d="M4 3.5V10M4 3.5H9M4 6.5H8" stroke="#333"/></svg><div class="a" style="left:0;top:0;width:1536px;height:24px;background:#2a2a2d"></div><div class="a" style="left:0;top:0;width:1536px;height:2px;background:#3d3d41"></div><svg class="a" style="left:4px;top:5px" width="14" height="14" viewBox="0 0 13 13"><path d="M3.3 0.6H9.7L12.8 6.5L9.7 12.4H3.3L0.2 6.5Z" fill="#8e8e8e"/><path d="M3.6 3.5H8.4L4.7 9.3H10M8.4 3.5L11.3 8.2" stroke="#2a2a2d" stroke-width="1.5" fill="none" stroke-linejoin="miter"/></svg><div class="a" style="left:24.0px;top:5.5px;font-size:10.5px;line-height:14px;color:#9a9a9a;font-weight:400;white-space:nowrap;transform:scaleX(0.8475);transform-origin:0 0;">#ESM4@CME</div><svg class="a" style="left:86px;top:5px" width="13" height="13"><circle cx="5.5" cy="5.5" r="3.8" stroke="#9b9b9b" stroke-width="1.6" fill="none"/><path d="M8.3 8.3L11.5 11.5" stroke="#9b9b9b" stroke-width="2"/></svg><div class="a" style="left:103.0px;top:5.5px;font-size:10.5px;line-height:14px;color:#9a9a9a;font-weight:400;white-space:nowrap;transform:scaleX(0.8944);transform-origin:0 0;">8 Range chart</div><svg class="a" style="left:166px;top:10px" width="7" height="4"><path d="M0 0H7L3.5 4Z" fill="#9b9b9b"/></svg><div class="a" style="left:178.0px;top:5.5px;font-size:10.5px;line-height:14px;color:#9a9a9a;font-weight:400;white-space:nowrap;transform:scaleX(0.8562);transform-origin:0 0;">10 Lots</div><svg class="a" style="left:212px;top:10px" width="7" height="4"><path d="M0 0H7L3.5 4Z" fill="#9b9b9b"/></svg><svg class="a" style="left:224px;top:6px" width="13" height="11"><rect x="1" y="1" width="10" height="7" stroke="#8a8a8a" fill="none" stroke-width="1.2"/><path d="M3 4H9M3 6H9M4 10H8" stroke="#8a8a8a"/></svg><svg class="a" style="left:242px;top:10px" width="7" height="4"><path d="M0 0H7L3.5 4Z" fill="#9b9b9b"/></svg><svg class="a" style="left:254px;top:5px" width="13" height="13"><path d="M2 11L10 3L12 5L4 13Z" fill="#9b9b9b"/></svg><svg class="a" style="left:272px;top:10px" width="7" height="4"><path d="M0 0H7L3.5 4Z" fill="#9b9b9b"/></svg><svg class="a" style="left:283px;top:5px" width="13" height="13"><circle cx="5.5" cy="5.5" r="3.8" stroke="#9b9b9b" stroke-width="1.4" fill="none"/><path d="M8.3 8.3L11.5 11.5" stroke="#9b9b9b" stroke-width="1.8"/></svg><svg class="a" style="left:302px;top:5px" width="13" height="13"><path d="M1 1V12H12M3 9L6 4L8 8L11 3" stroke="#9b9b9b" stroke-width="1.2" fill="none"/></svg><svg class="a" style="left:323px;top:5px" width="13" height="13"><path d="M6.5 1V12M1 6.5H12" stroke="#9b9b9b" stroke-width="2"/></svg><svg class="a" style="left:341px;top:10px" width="7" height="4"><path d="M0 0H7L3.5 4Z" fill="#9b9b9b"/></svg><svg class="a" style="left:353px;top:6px" width="12" height="12"><rect x="1" y="3" width="8" height="8" stroke="#8a8a8a" fill="none"/><path d="M3 1H11V9" stroke="#8a8a8a" fill="none"/></svg><svg class="a" style="left:370px;top:10px" width="7" height="4"><path d="M0 0H7L3.5 4Z" fill="#9b9b9b"/></svg><div class="a" style="left:841.5px;top:5.5px;font-size:10.5px;line-height:14px;color:#a8a8a8;font-weight:400;white-space:nowrap;transform:scaleX(0.8954);transform-origin:0 0;">Chart</div><svg class="a" style="left:1337px;top:7px" width="11" height="11"><path d="M1 1L10 10M10 1L1 10" stroke="#6e6e6e" stroke-width="1.2"/><path d="M5.5 2V9M2 5.5H9" stroke="#5a5a5a" stroke-width="0.8"/></svg><svg class="a" style="left:1353px;top:10px" width="6" height="4"><path d="M0 0H6L3.0 4Z" fill="#8f8f8f"/></svg><svg class="a" style="left:1365px;top:6px" width="13" height="12"><path d="M1 3.5H4L5 1.5H8L9 3.5H12V11H1Z" stroke="#8f8f8f" fill="none" stroke-width="1.1"/><circle cx="6.5" cy="7" r="2" stroke="#8f8f8f" fill="none"/></svg><svg class="a" style="left:1385px;top:5px" width="14" height="14"><path d="M2 2L5.5 5.5M12 2L8.5 5.5M2 12L5.5 8.5M12 12L8.5 8.5" stroke="#8f8f8f" stroke-width="1.4"/><path d="M0.5 0.5H5L0.5 5ZM13.5 0.5H9L13.5 5ZM0.5 13.5H5L0.5 9ZM13.5 13.5H9L13.5 9Z" fill="#8f8f8f"/></svg><svg class="a" style="left:1406px;top:5px" width="13" height="13"><circle cx="6.5" cy="6.5" r="5.5" stroke="#505050" fill="none" stroke-width="1"/></svg><svg class="a" style="left:1424px;top:10px" width="6" height="4"><path d="M0 0H6L3.0 4Z" fill="#8f8f8f"/></svg><svg class="a" style="left:1436px;top:6px" width="11" height="11"><path d="M1.5 10L9 2.5M2 2.5L9.5 10M0.5 4L3.5 1M7.5 1.5Q10 1 10 3.5" stroke="#8f8f8f" stroke-width="1.5" fill="none"/></svg><svg class="a" style="left:1456px;top:8px" width="13" height="8"><path d="M0 4.5H7" stroke="#8f8f8f" stroke-width="1"/><path d="M6 1.5H12V7H6ZM8 0.5V8" stroke="#8f8f8f" stroke-width="1.3" fill="#8f8f8f"/></svg><svg class="a" style="left:1481px;top:11px" width="9" height="3"><rect x="0" y="0" width="9" height="2.5" fill="#8f8f8f"/></svg><svg class="a" style="left:1502px;top:7px" width="10" height="10"><rect x="0.6" y="0.6" width="6" height="6" stroke="#8f8f8f" fill="none" stroke-width="1.2"/><rect x="3.4" y="3.4" width="6" height="6" stroke="#8f8f8f" fill="#2a2a2d" stroke-width="1.2"/></svg><svg class="a" style="left:1523px;top:8px" width="9" height="9"><path d="M0.5 0.5L8.5 8.5M8.5 0.5L0.5 8.5" stroke="#8f8f8f" stroke-width="1.3"/></svg><div class="a" style="left:0;top:24px;width:22px;height:808px;background:#2a2a2d"></div><div class="a" style="left:0;top:0;width:1px;height:832px;background:#3a3a3e"></div><svg class="a" style="left:1px;top:26px" width="20" height="6" viewBox="0 0 20 6"><path d="M3 2H17M3 4H17" stroke="#cfcfcf" stroke-dasharray="1 1"/></svg><svg class="a" style="left:1px;top:31px" width="20" height="20" viewBox="0 0 20 20"><path d="M4 16L15 5" stroke="#e8e8e8" stroke-width="2"/></svg><svg class="a" style="left:1px;top:50px" width="20" height="20" viewBox="0 0 20 20"><path d="M3 15H16M3 15L12 7M9 15A6 6 0 0 0 7 11M12 4L15 3" stroke="#e8e8e8" stroke-width="1.5" fill="none"/></svg><svg class="a" style="left:1px;top:69px" width="20" height="20" viewBox="0 0 20 20"><path d="M10 2V16" stroke="#e8e8e8" stroke-width="2"/></svg><svg class="a" style="left:1px;top:86px" width="20" height="20" viewBox="0 0 20 20"><path d="M3 9H17" stroke="#e8e8e8" stroke-width="2"/></svg><svg class="a" style="left:1px;top:104px" width="20" height="20" viewBox="0 0 20 20"><path d="M3 10H16M11 5L16 10L11 15" stroke="#e8e8e8" stroke-width="1.8" fill="none"/></svg><svg class="a" style="left:1px;top:123px" width="20" height="20" viewBox="0 0 20 20"><path d="M10 2V18M2 10H18" stroke="#e8e8e8" stroke-width="2"/></svg><svg class="a" style="left:1px;top:142px" width="20" height="20" viewBox="0 0 20 20"><path d="M5 3H15M5 6H15M5 9H15M5 12H15M5 15H15" stroke="#e8e8e8" stroke-width="1.6"/></svg><svg class="a" style="left:1px;top:160px" width="20" height="20" viewBox="0 0 20 20"><path d="M3 14Q6 6 10 12Q13 8 16 5" stroke="#e8e8e8" stroke-width="1.6" fill="none"/></svg><svg class="a" style="left:1px;top:179px" width="20" height="20" viewBox="0 0 20 20"><path d="M5 16L15 4M8 9L14 11M6 12L11 14" stroke="#e8e8e8" stroke-width="1.8" fill="none"/></svg><svg class="a" style="left:1px;top:197px" width="20" height="20" viewBox="0 0 20 20"><path d="M6 2H12V18H6ZM12 7H17V11H12M8 5V14" stroke="#e8e8e8" stroke-width="1.6" fill="none"/></svg><svg class="a" style="left:1px;top:217px" width="20" height="20" viewBox="0 0 20 20"><path d="M3 13L13 3L17 7L7 17Z M6 10L8 12M9 7L11 9M12 4L14 6" stroke="#e8e8e8" stroke-width="1.5" fill="none"/></svg><svg class="a" style="left:1px;top:237px" width="20" height="20" viewBox="0 0 20 20"><path d="M3 15L15 3M5 17L17 5" stroke="#bbb" stroke-width="1.3"/></svg><svg class="a" style="left:1px;top:252px" width="20" height="20" viewBox="0 0 20 20"><path d="M4 15H16L4 5Z" stroke="#e8e8e8" stroke-width="1.6" fill="none"/></svg><svg class="a" style="left:1px;top:270px" width="20" height="20" viewBox="0 0 20 20"><rect x="4" y="5" width="12" height="10" stroke="#e8e8e8" stroke-width="1.6" fill="none"/></svg><svg class="a" style="left:1px;top:288px" width="20" height="20" viewBox="0 0 20 20"><circle cx="10" cy="10" r="6.5" stroke="#e8e8e8" stroke-width="1.6" fill="none"/></svg><svg class="a" style="left:1px;top:307px" width="20" height="20" viewBox="0 0 20 20"><path d="M5 3V17M5 5H10M5 8H13M5 11H15M5 14H16M5 17H16" stroke="#e8e8e8" stroke-width="1.6"/></svg><svg class="a" style="left:1px;top:325px" width="20" height="20" viewBox="0 0 20 20"><path d="M5 3V17M5 5H10M5 8H13M5 11H15M5 14H16M5 17H16" stroke="#e8e8e8" stroke-width="1.6"/></svg><svg class="a" style="left:1px;top:343px" width="20" height="20" viewBox="0 0 20 20"><path d="M14 2V18M4 8H11M6 11H14M8 14H14M4 17H18" stroke="#e8e8e8" stroke-width="1.6"/></svg><svg class="a" style="left:1px;top:362px" width="20" height="20" viewBox="0 0 20 20"><path d="M2 11H18M7 4V18M13 4V18M5 8Q7 5 9 8V14Q7 17 5 14ZM11 8Q13 5 15 8V14Q13 17 11 14Z" stroke="#e8e8e8" stroke-width="1.4" fill="none"/></svg><svg class="a" style="left:1px;top:380px" width="20" height="20" viewBox="0 0 20 20"><path d="M3 3V18M17 2V17M5 15H8V11H12V7H15" stroke="#e8e8e8" stroke-width="1.5" fill="none"/></svg><svg class="a" style="left:1px;top:399px" width="20" height="20" viewBox="0 0 20 20"><path d="M2 14L18 9M8 4V18M12 3V17M15 4V16" stroke="#e8e8e8" stroke-width="1.5" fill="none"/></svg><svg class="a" style="left:1px;top:416px" width="20" height="20" viewBox="0 0 20 20"><path d="M3 10H6M8 10H11M13 10H16M3 8V12M16 8V12" stroke="#999" stroke-width="1"/></svg><svg class="a" style="left:1px;top:435px" width="20" height="20" viewBox="0 0 20 20"><path d="M8 2V5M12 2V5M8 8V11M12 8V11M8 14V17M12 14V17" stroke="#999" stroke-width="1"/></svg><svg class="a" style="left:1px;top:456px" width="20" height="20" viewBox="0 0 20 20"><path d="M2 9H18" stroke="#444"/></svg><svg class="a" style="left:1px;top:463px" width="20" height="20" viewBox="0 0 20 20"><path d="M2 3H14M8 3V16M13 10H18V16H13Z" stroke="#e8e8e8" stroke-width="2.2" fill="none"/></svg><svg class="a" style="left:1px;top:481px" width="20" height="20" viewBox="0 0 20 20"><path d="M3 3H17M10 3V17M7 17H13M3 3V6M17 3V6" stroke="#e8e8e8" stroke-width="1.6" fill="none"/></svg><svg class="a" style="left:1px;top:499px" width="20" height="20" viewBox="0 0 20 20"><path d="M17 5H7L3 10L7 15H17Z" stroke="#e8e8e8" stroke-width="1.5" fill="none"/><circle cx="8" cy="10" r="1.2" fill="#e8e8e8"/></svg><svg class="a" style="left:1px;top:518px" width="20" height="20" viewBox="0 0 20 20"><path d="M3 5H13L17 10L13 15H3Z" stroke="#e8e8e8" stroke-width="1.5" fill="none"/><circle cx="12" cy="10" r="1.2" fill="#e8e8e8"/></svg><svg class="a" style="left:1px;top:537px" width="20" height="20" viewBox="0 0 20 20"><path d="M2 9H18" stroke="#444"/></svg><svg class="a" style="left:1px;top:545px" width="20" height="20" viewBox="0 0 20 20"><circle cx="10" cy="10" r="6.5" fill="#e8e8e8"/></svg><svg class="a" style="left:1px;top:563px" width="20" height="20" viewBox="0 0 20 20"><path d="M10 3L17 10L10 17L3 10Z" fill="#e8e8e8"/></svg><svg class="a" style="left:1px;top:581px" width="20" height="20" viewBox="0 0 20 20"><rect x="3" y="3" width="13" height="13" fill="#e8e8e8"/></svg><svg class="a" style="left:1px;top:599px" width="20" height="20" viewBox="0 0 20 20"><path d="M10 2L17 9H13V17H7V9H3Z" fill="#e8e8e8"/></svg><svg class="a" style="left:1px;top:617px" width="20" height="20" viewBox="0 0 20 20"><path d="M10 18L17 11H13V3H7V11H3Z" fill="#e8e8e8"/></svg><svg class="a" style="left:1px;top:636px" width="20" height="20" viewBox="0 0 20 20"><path d="M3 7H6M3 11H8M3 15H11M14 3V17M11 6L14 3L17 6" stroke="#e8e8e8" stroke-width="1.4" fill="none"/></svg><svg class="a" style="left:1px;top:654px" width="20" height="20" viewBox="0 0 20 20"><path d="M3 5H6M3 9H8M3 13H11M14 3V17M11 14L14 17L17 14" stroke="#e8e8e8" stroke-width="1.4" fill="none"/></svg><svg class="a" style="left:1px;top:672px" width="20" height="20" viewBox="0 0 20 20"><path d="M3 4L8 4L8 8Z" fill="#777"/></svg><div class="a" style="left:22px;top:813px;width:1514px;height:19px;background:#303033"></div><div class="a" style="left:22px;top:813px;width:1389px;height:3px;background:#232326"></div><div class="a" style="left:22px;top:830px;width:1389px;height:2px;background:#232326"></div><div class="a" style="left:1411px;top:813px;width:125px;height:19px;background:#2e2e31"></div><svg class="a" style="left:25px;top:819px" width="6" height="9"><path d="M5 0V9L0 4.5Z" fill="#777"/></svg><div class="a" style="left:1391px;top:819px;width:6px;height:8px;background:#6a6a6a"></div><svg class="a" style="left:1402px;top:819px" width="5" height="8"><path d="M0 0V8L4 4Z" fill="#888"/></svg><div class="a" style="left:1416.0px;top:817.0px;font-size:10.5px;line-height:14px;color:#d8d8d8;font-weight:400;white-space:nowrap;transform:scaleX(0.8829);transform-origin:0 0;">DOM Trader</div><div class="a" style="left:1479.0px;top:817.0px;font-size:10.5px;line-height:14px;color:#d8d8d8;font-weight:400;white-space:nowrap;transform:scaleX(0.8821);transform-origin:0 0;">Chart Trader</div><div class="a" style="left:68px;top:71px;width:722px;height:401px;background:#2b2b2e;border-radius:5px;box-shadow:0 1px 4px rgba(0,0,0,0.35)"></div><svg class="a" style="left:72px;top:78px" width="13" height="13" viewBox="0 0 13 13"><path d="M3.3 0.6H9.7L12.8 6.5L9.7 12.4H3.3L0.2 6.5Z" fill="#e8e8e8"/><path d="M3.6 3.5H8.4L4.7 9.3H10M8.4 3.5L11.3 8.2" stroke="#2b2b2e" stroke-width="1.5" fill="none" stroke-linejoin="miter"/></svg><div class="a" style="left:338.5px;top:79.0px;font-size:10.2px;line-height:13px;color:#e6e6e6;font-weight:400;white-space:nowrap;transform:scaleX(0.9106);transform-origin:0 0;">ATAS v6.1.3.319-latest - [Latest Workspace]</div><svg class="a" style="left:594px;top:76px" width="16" height="13" viewBox="0 0 16 13"><rect x="1" y="3" width="14" height="9" rx="2" stroke="#c8c8c8" stroke-width="1.3" fill="none"/><circle cx="8" cy="7.5" r="2.6" stroke="#c8c8c8" stroke-width="1.3" fill="none"/><path d="M5 3L6 1H10L11 3" stroke="#c8c8c8" stroke-width="1.2" fill="none"/></svg><svg class="a" style="left:621px;top:75px" width="15" height="14" viewBox="0 0 15 14"><rect x="1" y="1" width="12" height="12" rx="1.5" stroke="#c8c8c8" stroke-width="1.2" fill="none"/><path d="M5 5Q5 3 7 3Q9 3 9 5Q9 6 7 7V8.5M7 10V11" stroke="#c8c8c8" stroke-width="1.2" fill="none"/></svg><svg class="a" style="left:638px;top:81px" width="7" height="4"><path d="M0 0H7L3.5 4Z" fill="#cfcfcf"/></svg><svg class="a" style="left:653px;top:77px" width="14" height="10" viewBox="0 0 14 10"><rect width="14" height="10" fill="#c04848"/><path d="M0 1.5H14M0 4H14M0 6.5H14M0 9H14" stroke="#d8d8e0" stroke-width="1"/><rect width="6" height="5" fill="#4a5aa0"/></svg><svg class="a" style="left:670px;top:81px" width="7" height="4"><path d="M0 0H7L3.5 4Z" fill="#cfcfcf"/></svg><svg class="a" style="left:687px;top:79px" width="12" height="6" viewBox="0 0 12 6"><path d="M0 3H11M6 0.5V5.5M8 1V5" stroke="#c8c8c8" stroke-width="1.5"/></svg><div class="a" style="left:717px;top:81px;width:9px;height:2px;background:#e0e0e0;"></div><svg class="a" style="left:743px;top:76px" width="11" height="11" viewBox="0 0 11 11"><rect x="0.75" y="0.75" width="9.5" height="9.5" stroke="#e0e0e0" stroke-width="1.5" fill="none"/><rect x="0" y="0" width="11" height="2.5" fill="#e0e0e0"/></svg><svg class="a" style="left:771px;top:77px" width="10" height="10" viewBox="0 0 10 10"><path d="M1 1L9 9M9 1L1 9" stroke="#e8e8e8" stroke-width="1.5"/></svg><div class="a" style="left:68px;top:98px;width:46px;height:25px;background:#0a78d2;"></div><div class="a" style="left:79.5px;top:104.0px;font-size:10.2px;line-height:13px;color:#ffffff;font-weight:400;white-space:nowrap;transform:scaleX(0.8633);transform-origin:0 0;">Learn</div><div class="a" style="left:114px;top:99px;width:47px;height:25px;background:#2b2b2e;border:1px solid #414145;border-bottom:none"></div><div class="a" style="left:126.0px;top:104.5px;font-size:10.2px;line-height:13px;color:#3d95e0;font-weight:400;white-space:nowrap;transform:scaleX(0.8828);transform-origin:0 0;">Home</div><div class="a" style="left:172.7px;top:105.0px;font-size:10.2px;line-height:13px;color:#e6e6e6;font-weight:400;white-space:nowrap;transform:scaleX(0.9236);transform-origin:0 0;">Settings</div><div class="a" style="left:230.7px;top:105.0px;font-size:10.2px;line-height:13px;color:#e6e6e6;font-weight:400;white-space:nowrap;transform:scaleX(0.9361);transform-origin:0 0;">License information</div><div class="a" style="left:68px;top:123px;width:46px;height:1px;background:#3d3d41;"></div><div class="a" style="left:161px;top:123px;width:628px;height:1px;background:#3d3d41;"></div><svg class="a" style="left:769px;top:103px" width="16" height="16" viewBox="0 0 16 16"><circle cx="8" cy="8" r="7" fill="#2f2f33"/><path d="M4.5 10H11.5L8 6.5Z" fill="#e0e0e0"/></svg><svg class="a" style="left:72px;top:127px" width="15" height="15" viewBox="0 0 15 15"><path d="M1 1V14H14" stroke="#e4e4e4" stroke-width="1" fill="none"/><path d="M3 12L7 8L9 10L13 5M10 5H13V8" stroke="#e4e4e4" stroke-width="1" fill="none"/></svg><div class="a" style="left:101.4px;top:128.0px;font-size:10.2px;line-height:13px;color:#e4e4e4;font-weight:400;white-space:nowrap;transform:scaleX(0.9068);transform-origin:0 0;">Chart</div><svg class="a" style="left:141px;top:133px" width="7" height="4"><path d="M0 0H7L3.5 4Z" fill="#e0e0e0"/></svg><svg class="a" style="left:72px;top:148px" width="14" height="10" viewBox="0 0 14 10"><path d="M1 5Q7 -1 13 5Q7 11 1 5Z" fill="#e4e4e4"/><circle cx="7" cy="5" r="2.2" fill="#2b2b2e"/><circle cx="7" cy="5" r="1.1" fill="#e4e4e4"/></svg><div class="a" style="left:88.4px;top:146.5px;font-size:10.2px;line-height:13px;color:#e4e4e4;font-weight:400;white-space:nowrap;transform:scaleX(0.9303);transform-origin:0 0;">Watchlist</div><svg class="a" style="left:153px;top:130px" width="15" height="14" viewBox="0 0 15 14"><rect x="0.5" y="0.5" width="13" height="12" stroke="#e4e4e4" fill="none"/><path d="M0.5 3.5H13.5M0.5 6.5H13.5M0.5 9.5H13.5M3.5 3V13M6.5 3V13M9.5 3V13" stroke="#e4e4e4" stroke-width="0.8"/></svg><div class="a" style="left:169.5px;top:126.5px;font-size:10.2px;line-height:13px;color:#e4e4e4;font-weight:400;white-space:nowrap;transform:scaleX(0.8943);transform-origin:0 0;">Smart</div><div class="a" style="left:171.5px;top:135.5px;font-size:10.2px;line-height:13px;color:#e4e4e4;font-weight:400;white-space:nowrap;transform:scaleX(0.9251);transform-origin:0 0;">DOM</div><svg class="a" style="left:153px;top:156px" width="15" height="14" viewBox="0 0 15 14"><circle cx="7.5" cy="1.5" r="1.3" fill="#e4e4e4"/><path d="M7.5 3V7M2 7H13M2 7V10M7.5 7V10M13 7V10" stroke="#e4e4e4" stroke-width="0.8" fill="none"/><circle cx="2" cy="11.5" r="1.4" fill="#e4e4e4"/><circle cx="7.5" cy="11.5" r="1.4" fill="#e4e4e4"/><circle cx="13" cy="11.5" r="1.4" fill="#e4e4e4"/></svg><div class="a" style="left:169.5px;top:151.0px;font-size:10.2px;line-height:13px;color:#e4e4e4;font-weight:400;white-space:nowrap;transform:scaleX(0.8943);transform-origin:0 0;">Smart</div><div class="a" style="left:176.0px;top:160.5px;font-size:10.2px;line-height:13px;color:#e4e4e4;font-weight:400;white-space:nowrap;transform:scaleX(0.8373);transform-origin:0 0;">Tape</div><svg class="a" style="left:200px;top:127px" width="13" height="14" viewBox="0 0 13 14"><path d="M1 1H12M1 13H12M6.5 2V12M4 4.5L6.5 2L9 4.5M4 9.5L6.5 12L9 9.5" stroke="#e4e4e4" stroke-width="1.1" fill="none"/></svg><svg class="a" style="left:199px;top:146px" width="14" height="14" viewBox="0 0 14 14"><rect x="0.75" y="0.75" width="12.5" height="12.5" stroke="#e4e4e4" stroke-width="1.2" fill="none"/><path d="M3 4H10M3 6.5H8M3 9H7" stroke="#e4e4e4" stroke-width="1.1"/></svg><svg class="a" style="left:200px;top:164px" width="12" height="14" viewBox="0 0 12 14"><rect x="0.75" y="0.75" width="10.5" height="12.5" rx="1" stroke="#e4e4e4" stroke-width="1.2" fill="none"/><path d="M1 3H11" stroke="#e4e4e4" stroke-width="2"/><path d="M3 6H9M3 8.5H9M3 11H9" stroke="#e4e4e4" stroke-width="1"/></svg><svg class="a" style="left:218px;top:170px" width="7" height="4"><path d="M0 0H7L3.5 4Z" fill="#e0e0e0"/></svg><div class="a" style="left:231px;top:127px;width:1px;height:52px;background:#404044;"></div><svg class="a" style="left:237px;top:129px" width="15" height="12" viewBox="0 0 15 12"><path d="M1.5 1.5H13.5V8.5H6L3 11V8.5H1.5Z" stroke="#e4e4e4" stroke-width="1.1" fill="none"/><path d="M7.5 3V6" stroke="#e4e4e4" stroke-width="1"/></svg><svg class="a" style="left:256px;top:134px" width="7" height="4"><path d="M0 0H7L3.5 4Z" fill="#e0e0e0"/></svg><svg class="a" style="left:267px;top:128px" width="15" height="13" viewBox="0 0 15 13"><rect x="0.5" y="2.5" width="11" height="10" fill="#bdbdbd"/><path d="M3 2V0.5H14.5V11H12" stroke="#e4e4e4" fill="none"/><path d="M3 11V7M5.5 11V5M8 11V8" stroke="#333" stroke-width="1.2"/></svg><svg class="a" style="left:287px;top:134px" width="7" height="4"><path d="M0 0H7L3.5 4Z" fill="#e0e0e0"/></svg><svg class="a" style="left:238px;top:146px" width="13" height="14" viewBox="0 0 13 14"><rect x="0.75" y="2" width="11" height="10.5" rx="1" stroke="#e4e4e4" stroke-width="1.1" fill="none"/><path d="M0.75 5H11.75M3.5 0.5V3M8.5 0.5V3" stroke="#e4e4e4" stroke-width="1.1"/><path d="M7 7.5H10V12" stroke="#aaa" stroke-width="1"/></svg><svg class="a" style="left:256px;top:152px" width="7" height="4"><path d="M0 0H7L3.5 4Z" fill="#e0e0e0"/></svg><svg class="a" style="left:267px;top:145px" width="16" height="16" viewBox="0 0 16 16"><path d="M3 4.5A6 6 0 1 1 2.5 10" stroke="#e4e4e4" stroke-width="1.3" fill="none"/><path d="M1 2L3.5 5L6 2.5" stroke="#e4e4e4" stroke-width="1.1" fill="none"/><path d="M6.5 5V11L11.5 8Z" fill="#e4e4e4"/></svg><div class="a" style="left:294.0px;top:146.7px;font-size:10.2px;line-height:13px;color:#e4e4e4;font-weight:400;white-space:nowrap;transform:scaleX(0.8670);transform-origin:0 0;">Replay</div><svg class="a" style="left:337px;top:152px" width="7" height="4"><path d="M0 0H7L3.5 4Z" fill="#e0e0e0"/></svg><svg class="a" style="left:238px;top:164px" width="13" height="15" viewBox="0 0 13 15"><path d="M6.5 1.5Q2.5 1.5 2.5 6V10L1 12H12L10.5 10V6Q10.5 1.5 6.5 1.5Z" stroke="#e4e4e4" stroke-width="1.1" fill="none"/><path d="M5 13.5Q6.5 15 8 13.5" stroke="#e4e4e4" stroke-width="1.1" fill="none"/></svg><svg class="a" style="left:256px;top:170px" width="7" height="4"><path d="M0 0H7L3.5 4Z" fill="#e0e0e0"/></svg><div class="a" style="left:194.6px;top:184.0px;font-size:10.2px;line-height:13px;color:#dcdcdc;font-weight:400;white-space:nowrap;transform:scaleX(0.8602);transform-origin:0 0;">Panels</div><div class="a" style="left:349px;top:124px;width:1px;height:75px;background:#3a3a3e;"></div><svg class="a" style="left:366px;top:127px" width="29" height="28" viewBox="0 0 29 28"><rect x="1" y="1" width="12" height="9" stroke="#e4e4e4" stroke-width="1.4" fill="none"/><path d="M7 10V13M4 13H10" stroke="#e4e4e4" stroke-width="1.2"/><rect x="15" y="13" width="12" height="9" stroke="#e4e4e4" stroke-width="1.4" fill="none"/><path d="M21 22V25M18 25H24" stroke="#e4e4e4" stroke-width="1.2"/><path d="M15 3H18V10M7 15V18H14" stroke="#e4e4e4" stroke-width="1.1" stroke-dasharray="1.5 1.2" fill="none"/></svg><div class="a" style="left:354.0px;top:161.5px;font-size:10.2px;line-height:13px;color:#e4e4e4;font-weight:400;white-space:nowrap;transform:scaleX(0.9446);transform-origin:0 0;">Connections</div><div class="a" style="left:412px;top:124px;width:1px;height:75px;background:#3a3a3e;"></div><div class="a" style="left:415px;top:126px;width:53px;height:30px;background:#2b2b2e;border:1px solid #1767ad"></div><div class="a" style="left:415px;top:156px;width:53px;height:24px;background:#333337;"></div><svg class="a" style="left:430px;top:128px" width="22" height="27" viewBox="0 0 22 27"><rect x="1" y="1" width="20" height="25" rx="3" fill="#e4e4e4"/><rect x="3" y="7" width="16" height="17" fill="#2b2b2e"/><path d="M5.5 11H16.5M5.5 15H16.5M5.5 19H16.5" stroke="#e4e4e4" stroke-width="1.6"/></svg><div class="a" style="left:422.8px;top:161.5px;font-size:10.2px;line-height:13px;color:#e4e4e4;font-weight:400;white-space:nowrap;transform:scaleX(0.9473);transform-origin:0 0;">Orders</div><svg class="a" style="left:453px;top:167px" width="7" height="4"><path d="M0 0H7L3.5 4Z" fill="#e0e0e0"/></svg><div class="a" style="left:469px;top:126px;width:53px;height:30px;background:#2b2b2e;border:1px solid #1767ad"></div><div class="a" style="left:469px;top:156px;width:53px;height:24px;background:#333337;"></div><svg class="a" style="left:484px;top:128px" width="22" height="27" viewBox="0 0 22 27"><rect x="1" y="1" width="20" height="25" rx="3" fill="#e4e4e4"/><rect x="3" y="7" width="16" height="17" fill="#2b2b2e"/><path d="M5.5 11H16.5M5.5 15H16.5M5.5 19H16.5" stroke="#e4e4e4" stroke-width="1.6"/></svg><div class="a" style="left:477.2px;top:161.5px;font-size:10.2px;line-height:13px;color:#e4e4e4;font-weight:400;white-space:nowrap;transform:scaleX(0.9097);transform-origin:0 0;">Trades</div><svg class="a" style="left:507px;top:167px" width="7" height="4"><path d="M0 0H7L3.5 4Z" fill="#e0e0e0"/></svg><div class="a" style="left:522px;top:126px;width:53px;height:30px;background:#2b2b2e;border:1px solid #1767ad"></div><div class="a" style="left:522px;top:156px;width:53px;height:24px;background:#333337;"></div><svg class="a" style="left:538px;top:128px" width="22" height="27" viewBox="0 0 22 27"><rect x="1" y="1" width="20" height="25" rx="3" fill="#e4e4e4"/><rect x="3" y="7" width="16" height="17" fill="#2b2b2e"/><path d="M5.5 11H16.5M5.5 15H16.5M5.5 19H16.5" stroke="#e4e4e4" stroke-width="1.6"/></svg><div class="a" style="left:529.0px;top:158.0px;font-size:10.2px;line-height:13px;color:#e4e4e4;font-weight:400;white-space:nowrap;transform:scaleX(0.7901);transform-origin:0 0;">Trading</div><div class="a" style="left:524.0px;top:166.0px;font-size:10.2px;line-height:13px;color:#e4e4e4;font-weight:400;white-space:nowrap;transform:scaleX(0.8490);transform-origin:0 0;">strategies</div><svg class="a" style="left:565px;top:167px" width="7" height="4"><path d="M0 0H7L3.5 4Z" fill="#e0e0e0"/></svg><div class="a" style="left:576px;top:126px;width:53px;height:30px;background:#2b2b2e;border:1px solid #1767ad"></div><div class="a" style="left:576px;top:156px;width:53px;height:24px;background:#333337;"></div><svg class="a" style="left:592px;top:133px" width="22" height="15" viewBox="0 0 22 15"><rect x="1" y="1" width="20" height="13" stroke="#e4e4e4" stroke-width="1.5" fill="none"/><circle cx="6.5" cy="7.5" r="3" fill="#e4e4e4"/><path d="M6.5 5.5V7.5H8.5" stroke="#2b2b2e" stroke-width="1"/><path d="M11 5H18M11 7.5H18M11 10H18" stroke="#e4e4e4" stroke-width="1.4"/></svg><div class="a" style="left:578.2px;top:161.5px;font-size:10.2px;line-height:13px;color:#e4e4e4;font-weight:400;white-space:nowrap;transform:scaleX(0.9664);transform-origin:0 0;">Accounts</div><svg class="a" style="left:620px;top:167px" width="7" height="4"><path d="M0 0H7L3.5 4Z" fill="#e0e0e0"/></svg><div class="a" style="left:630px;top:126px;width:53px;height:30px;background:#2b2b2e;border:1px solid #1767ad"></div><div class="a" style="left:630px;top:156px;width:53px;height:24px;background:#333337;"></div><svg class="a" style="left:644px;top:127px" width="24" height="30" viewBox="0 0 24 30"><path d="M5 2H15L21 8V27Q21 28 20 28H6Q5 28 5 27Z" stroke="#e4e4e4" stroke-width="1.5" fill="none"/><path d="M15 2V8H21" stroke="#e4e4e4" stroke-width="1.3" fill="none"/><rect x="1" y="11" width="20" height="10" fill="#e4e4e4"/><text x="11" y="19.5" font-family="Liberation Sans" font-size="9" text-anchor="middle" fill="#2b2b2e">LOG</text></svg><div class="a" style="left:642.2px;top:161.5px;font-size:10.2px;line-height:13px;color:#e4e4e4;font-weight:400;white-space:nowrap;transform:scaleX(0.9279);transform-origin:0 0;">Logs</div><svg class="a" style="left:664px;top:167px" width="7" height="4"><path d="M0 0H7L3.5 4Z" fill="#e0e0e0"/></svg><div class="a" style="left:683px;top:126px;width:53px;height:30px;background:#2b2b2e;border:1px solid #1767ad"></div><div class="a" style="left:683px;top:156px;width:53px;height:24px;background:#333337;"></div><svg class="a" style="left:696px;top:128px" width="26" height="26" viewBox="0 0 26 26"><path d="M2 1V24H25" stroke="#e4e4e4" stroke-width="1.6" fill="none"/><path d="M4 20L10 14L15 18L24 7" stroke="#e4e4e4" stroke-width="1.6" fill="none"/></svg><div class="a" style="left:685.2px;top:161.5px;font-size:10.2px;line-height:13px;color:#e4e4e4;font-weight:400;white-space:nowrap;transform:scaleX(0.9935);transform-origin:0 0;">Statistics</div><svg class="a" style="left:727px;top:167px" width="7" height="4"><path d="M0 0H7L3.5 4Z" fill="#e0e0e0"/></svg><div class="a" style="left:548.0px;top:184.0px;font-size:10.2px;line-height:13px;color:#dcdcdc;font-weight:400;white-space:nowrap;transform:scaleX(0.9509);transform-origin:0 0;">Main window</div><div class="a" style="left:739px;top:124px;width:1px;height:75px;background:#3a3a3e;"></div><div class="a" style="left:69px;top:201px;width:719px;height:210px;background:#0a78d2;"></div><div class="a" style="left:71px;top:203px;width:715px;height:206px;background:#2b2b2e;"></div><svg class="a" style="left:73px;top:207px" width="13" height="13" viewBox="0 0 13 13"><path d="M3.3 0.6H9.7L12.8 6.5L9.7 12.4H3.3L0.2 6.5Z" fill="#e8e8e8"/><path d="M3.6 3.5H8.4L4.7 9.3H10M8.4 3.5L11.3 8.2" stroke="#2b2b2e" stroke-width="1.5" fill="none" stroke-linejoin="miter"/></svg><div class="a" style="left:93.7px;top:206.5px;font-size:10.2px;line-height:13px;color:#e6e6e6;font-weight:400;white-space:nowrap;transform:scaleX(0.9029);transform-origin:0 0;">Realtime</div><svg class="a" style="left:135px;top:211px" width="7" height="4"><path d="M0 0H7L3.5 4Z" fill="#e0e0e0"/></svg><div class="a" style="left:410.5px;top:206.5px;font-size:10.2px;line-height:13px;color:#e0e0e0;font-weight:400;white-space:nowrap;transform:scaleX(0.9076);transform-origin:0 0;">Statistics</div><svg class="a" style="left:717px;top:206px" width="13" height="13" viewBox="0 0 13 13"><circle cx="6.5" cy="6.5" r="4" stroke="#e4e4e4" stroke-width="2.6" fill="none" stroke-dasharray="2 1.14"/><circle cx="6.5" cy="6.5" r="3.2" stroke="#e4e4e4" stroke-width="1.5" fill="none"/></svg><svg class="a" style="left:735px;top:211px" width="7" height="4"><path d="M0 0H7L3.5 4Z" fill="#e0e0e0"/></svg><svg class="a" style="left:750px;top:207px" width="9" height="12" viewBox="0 0 9 12"><path d="M2 1H7M3 1V7M6 1V7M1 7H8M4.5 7V11" stroke="#e4e4e4" stroke-width="1.2" fill="none"/></svg><svg class="a" style="left:770px;top:208px" width="10" height="10" viewBox="0 0 10 10"><path d="M1 1L9 9M9 1L1 9" stroke="#e8e8e8" stroke-width="1.4"/></svg><div class="a" style="left:71px;top:223px;width:715px;height:21px;background:#2d2d30;"></div><div class="a" style="left:122px;top:224px;width:49px;height:20px;background:#1e1e1f;border-top:2px solid #0a78d2"></div><div class="a" style="left:81.2px;top:228.0px;font-size:10.2px;line-height:13px;color:#e0e0e0;font-weight:400;white-space:nowrap;transform:scaleX(0.9413);transform-origin:0 0;">Metrics</div><div class="a" style="left:131.4px;top:228.5px;font-size:10.2px;line-height:13px;color:#2f8fdf;font-weight:400;white-space:nowrap;transform:scaleX(0.9126);transform-origin:0 0;">Journal</div><div class="a" style="left:181.2px;top:228.0px;font-size:10.2px;line-height:13px;color:#e0e0e0;font-weight:400;white-space:nowrap;transform:scaleX(0.9249);transform-origin:0 0;">Equity</div><div class="a" style="left:226.7px;top:228.0px;font-size:10.2px;line-height:13px;color:#e0e0e0;font-weight:400;white-space:nowrap;transform:scaleX(0.9345);transform-origin:0 0;">Orders</div><div class="a" style="left:275.6px;top:228.0px;font-size:10.2px;line-height:13px;color:#e0e0e0;font-weight:400;white-space:nowrap;transform:scaleX(0.8908);transform-origin:0 0;">Executions</div><div class="a" style="left:71px;top:244px;width:715px;height:165px;background:#1e1e1f;"></div><div class="a" style="left:82px;top:253px;width:694px;height:26px;background:#333336;"></div><div class="a" style="left:139px;top:253px;width:1px;height:26px;background:#29292c;"></div><div class="a" style="left:195px;top:253px;width:1px;height:26px;background:#29292c;"></div><div class="a" style="left:252px;top:253px;width:1px;height:26px;background:#29292c;"></div><div class="a" style="left:309px;top:253px;width:1px;height:26px;background:#29292c;"></div><div class="a" style="left:366px;top:253px;width:1px;height:26px;background:#29292c;"></div><div class="a" style="left:422px;top:253px;width:1px;height:26px;background:#29292c;"></div><div class="a" style="left:478px;top:253px;width:1px;height:26px;background:#29292c;"></div><div class="a" style="left:535px;top:253px;width:1px;height:26px;background:#29292c;"></div><div class="a" style="left:592px;top:253px;width:1px;height:26px;background:#29292c;"></div><div class="a" style="left:648px;top:253px;width:1px;height:26px;background:#29292c;"></div><div class="a" style="left:705px;top:253px;width:1px;height:26px;background:#29292c;"></div><div class="a" style="left:762px;top:253px;width:1px;height:26px;background:#29292c;"></div><div class="a" style="left:91.2px;top:259.5px;font-size:10.4px;line-height:14px;color:#f0f0f0;font-weight:700;white-space:nowrap;transform:scaleX(0.9356);transform-origin:0 0;">Account</div><div class="a" style="left:145.2px;top:259.5px;font-size:10.4px;line-height:14px;color:#f0f0f0;font-weight:700;white-space:nowrap;transform:scaleX(0.9622);transform-origin:0 0;">Instrum...</div><div class="a" style="left:200.2px;top:259.5px;font-size:10.4px;line-height:14px;color:#f0f0f0;font-weight:700;white-space:nowrap;transform:scaleX(0.9768);transform-origin:0 0;">Open...</div><div class="a" style="left:257.0px;top:259.5px;font-size:10.4px;line-height:14px;color:#f0f0f0;font-weight:700;white-space:nowrap;">Open pr...</div><div class="a" style="left:312.6px;top:259.5px;font-size:10.4px;line-height:14px;color:#f0f0f0;font-weight:700;white-space:nowrap;transform:scaleX(0.9754);transform-origin:0 0;">Open vo...</div><div class="a" style="left:368.7px;top:259.5px;font-size:10.4px;line-height:14px;color:#f0f0f0;font-weight:700;white-space:nowrap;transform:scaleX(0.9477);transform-origin:0 0;">Close time</div><div class="a" style="left:424.8px;top:259.5px;font-size:10.4px;line-height:14px;color:#f0f0f0;font-weight:700;white-space:nowrap;transform:scaleX(0.9299);transform-origin:0 0;">Close pri...</div><div class="a" style="left:483.0px;top:259.5px;font-size:10.4px;line-height:14px;color:#f0f0f0;font-weight:700;white-space:nowrap;transform:scaleX(0.9352);transform-origin:0 0;">Close vo...</div><div class="a" style="left:542.2px;top:259.5px;font-size:10.4px;line-height:14px;color:#f0f0f0;font-weight:700;white-space:nowrap;transform:scaleX(0.8991);transform-origin:0 0;">Price PnL</div><div class="a" style="left:596.7px;top:259.5px;font-size:10.4px;line-height:14px;color:#f0f0f0;font-weight:700;white-space:nowrap;transform:scaleX(0.9653);transform-origin:0 0;">Profit (ti...</div><div class="a" style="left:667.9px;top:259.5px;font-size:10.4px;line-height:14px;color:#f0f0f0;font-weight:700;white-space:nowrap;transform:scaleX(0.8866);transform-origin:0 0;">PnL</div><div class="a" style="left:709.2px;top:259.5px;font-size:10.4px;line-height:14px;color:#f0f0f0;font-weight:700;white-space:nowrap;transform:scaleX(0.9766);transform-origin:0 0;">Comment</div><svg class="a" style="left:239px;top:265px" width="7" height="4"><path d="M0 0H7L3.5 4Z" fill="#e0e0e0"/></svg><div class="a" style="left:82px;top:279px;width:680px;height:20px;background:#3a3a3d;"></div><div class="a" style="left:82px;top:298px;width:680px;height:1px;background:#2c2c2f;"></div><div class="a" style="left:85.7px;top:282.5px;font-size:10.2px;line-height:13px;color:#dcdcdc;font-weight:400;white-space:nowrap;transform:scaleX(0.8236);transform-origin:0 0;">DEMO00...</div><div class="a" style="left:142.5px;top:282.5px;font-size:10.2px;line-height:13px;color:#dcdcdc;font-weight:400;white-space:nowrap;transform:scaleX(0.8436);transform-origin:0 0;">ESM4@C...</div><div class="a" style="left:198.9px;top:282.5px;font-size:10.2px;line-height:13px;color:#dcdcdc;font-weight:400;white-space:nowrap;transform:scaleX(0.8731);transform-origin:0 0;">29.04.202...</div><div class="a" style="left:285.1px;top:282.5px;font-size:10.2px;line-height:13px;color:#dcdcdc;font-weight:400;white-space:nowrap;transform:scaleX(0.9000);transform-origin:0 0;">5132</div><div class="a" style="left:357.3px;top:282.5px;font-size:10.2px;line-height:13px;color:#dcdcdc;font-weight:400;white-space:nowrap;transform:scaleX(0.9000);transform-origin:0 0;">3</div><div class="a" style="left:368.7px;top:282.5px;font-size:10.2px;line-height:13px;color:#dcdcdc;font-weight:400;white-space:nowrap;transform:scaleX(0.8731);transform-origin:0 0;">29.04.202...</div><div class="a" style="left:442.5px;top:282.5px;font-size:10.2px;line-height:13px;color:#dcdcdc;font-weight:400;white-space:nowrap;transform:scaleX(0.9000);transform-origin:0 0;">5132,25</div><div class="a" style="left:524.2px;top:282.5px;font-size:10.2px;line-height:13px;color:#dcdcdc;font-weight:400;white-space:nowrap;transform:scaleX(0.9000);transform-origin:0 0;">-3</div><div class="a" style="left:570.7px;top:282.5px;font-size:10.2px;line-height:13px;color:#dcdcdc;font-weight:400;white-space:nowrap;transform:scaleX(0.9000);transform-origin:0 0;">0,25</div><div class="a" style="left:640.3px;top:282.5px;font-size:10.2px;line-height:13px;color:#dcdcdc;font-weight:400;white-space:nowrap;transform:scaleX(0.9000);transform-origin:0 0;">1</div><div class="a" style="left:683.9px;top:282.5px;font-size:10.2px;line-height:13px;color:#dcdcdc;font-weight:400;white-space:nowrap;transform:scaleX(0.9000);transform-origin:0 0;">37,5</div><div class="a" style="left:82px;top:317px;width:680px;height:1px;background:#2c2c2f;"></div><div class="a" style="left:85.7px;top:301.8px;font-size:10.2px;line-height:13px;color:#dcdcdc;font-weight:400;white-space:nowrap;transform:scaleX(0.8236);transform-origin:0 0;">DEMO00...</div><div class="a" style="left:142.5px;top:301.8px;font-size:10.2px;line-height:13px;color:#dcdcdc;font-weight:400;white-space:nowrap;transform:scaleX(0.8436);transform-origin:0 0;">ESM4@C...</div><div class="a" style="left:198.9px;top:301.8px;font-size:10.2px;line-height:13px;color:#dcdcdc;font-weight:400;white-space:nowrap;transform:scaleX(0.8731);transform-origin:0 0;">29.04.202...</div><div class="a" style="left:272.4px;top:301.8px;font-size:10.2px;line-height:13px;color:#dcdcdc;font-weight:400;white-space:nowrap;transform:scaleX(0.9000);transform-origin:0 0;">5131,75</div><div class="a" style="left:357.3px;top:301.8px;font-size:10.2px;line-height:13px;color:#dcdcdc;font-weight:400;white-space:nowrap;transform:scaleX(0.9000);transform-origin:0 0;">7</div><div class="a" style="left:368.7px;top:301.8px;font-size:10.2px;line-height:13px;color:#dcdcdc;font-weight:400;white-space:nowrap;transform:scaleX(0.8731);transform-origin:0 0;">29.04.202...</div><div class="a" style="left:442.5px;top:301.8px;font-size:10.2px;line-height:13px;color:#dcdcdc;font-weight:400;white-space:nowrap;transform:scaleX(0.9000);transform-origin:0 0;">5132,25</div><div class="a" style="left:524.2px;top:301.8px;font-size:10.2px;line-height:13px;color:#dcdcdc;font-weight:400;white-space:nowrap;transform:scaleX(0.9000);transform-origin:0 0;">-7</div><div class="a" style="left:570.7px;top:301.8px;font-size:10.2px;line-height:13px;color:#dcdcdc;font-weight:400;white-space:nowrap;transform:scaleX(0.9000);transform-origin:0 0;">0,50</div><div class="a" style="left:640.3px;top:301.8px;font-size:10.2px;line-height:13px;color:#dcdcdc;font-weight:400;white-space:nowrap;transform:scaleX(0.9000);transform-origin:0 0;">2</div><div class="a" style="left:678.8px;top:301.8px;font-size:10.2px;line-height:13px;color:#dcdcdc;font-weight:400;white-space:nowrap;transform:scaleX(0.9000);transform-origin:0 0;">175,0</div><div class="a" style="left:82px;top:336px;width:680px;height:1px;background:#2c2c2f;"></div><div class="a" style="left:85.7px;top:321.0px;font-size:10.2px;line-height:13px;color:#dcdcdc;font-weight:400;white-space:nowrap;transform:scaleX(0.8236);transform-origin:0 0;">DEMO00...</div><div class="a" style="left:142.5px;top:321.0px;font-size:10.2px;line-height:13px;color:#dcdcdc;font-weight:400;white-space:nowrap;transform:scaleX(0.8436);transform-origin:0 0;">ESM4@C...</div><div class="a" style="left:198.9px;top:321.0px;font-size:10.2px;line-height:13px;color:#dcdcdc;font-weight:400;white-space:nowrap;transform:scaleX(0.8731);transform-origin:0 0;">29.04.202...</div><div class="a" style="left:272.4px;top:321.0px;font-size:10.2px;line-height:13px;color:#dcdcdc;font-weight:400;white-space:nowrap;transform:scaleX(0.9000);transform-origin:0 0;">5138,75</div><div class="a" style="left:349.1px;top:321.0px;font-size:10.2px;line-height:13px;color:#dcdcdc;font-weight:400;white-space:nowrap;transform:scaleX(0.9000);transform-origin:0 0;">-10</div><div class="a" style="left:368.7px;top:321.0px;font-size:10.2px;line-height:13px;color:#dcdcdc;font-weight:400;white-space:nowrap;transform:scaleX(0.8731);transform-origin:0 0;">29.04.202...</div><div class="a" style="left:442.5px;top:321.0px;font-size:10.2px;line-height:13px;color:#dcdcdc;font-weight:400;white-space:nowrap;transform:scaleX(0.9000);transform-origin:0 0;">5140,75</div><div class="a" style="left:522.2px;top:321.0px;font-size:10.2px;line-height:13px;color:#dcdcdc;font-weight:400;white-space:nowrap;transform:scaleX(0.9000);transform-origin:0 0;">10</div><div class="a" style="left:567.6px;top:321.0px;font-size:10.2px;line-height:13px;color:#dcdcdc;font-weight:400;white-space:nowrap;transform:scaleX(0.9000);transform-origin:0 0;">-2,00</div><div class="a" style="left:637.2px;top:321.0px;font-size:10.2px;line-height:13px;color:#dcdcdc;font-weight:400;white-space:nowrap;transform:scaleX(0.9000);transform-origin:0 0;">-8</div><div class="a" style="left:670.6px;top:321.0px;font-size:10.2px;line-height:13px;color:#dcdcdc;font-weight:400;white-space:nowrap;transform:scaleX(0.9000);transform-origin:0 0;">-1000,0</div><div class="a" style="left:82px;top:356px;width:680px;height:1px;background:#2c2c2f;"></div><div class="a" style="left:85.7px;top:340.2px;font-size:10.2px;line-height:13px;color:#dcdcdc;font-weight:400;white-space:nowrap;transform:scaleX(0.8236);transform-origin:0 0;">DEMO00...</div><div class="a" style="left:142.5px;top:340.2px;font-size:10.2px;line-height:13px;color:#dcdcdc;font-weight:400;white-space:nowrap;transform:scaleX(0.8436);transform-origin:0 0;">ESM4@C...</div><div class="a" style="left:198.9px;top:340.2px;font-size:10.2px;line-height:13px;color:#dcdcdc;font-weight:400;white-space:nowrap;transform:scaleX(0.8731);transform-origin:0 0;">29.04.202...</div><div class="a" style="left:285.1px;top:340.2px;font-size:10.2px;line-height:13px;color:#dcdcdc;font-weight:400;white-space:nowrap;transform:scaleX(0.9000);transform-origin:0 0;">5142</div><div class="a" style="left:352.2px;top:340.2px;font-size:10.2px;line-height:13px;color:#dcdcdc;font-weight:400;white-space:nowrap;transform:scaleX(0.9000);transform-origin:0 0;">10</div><div class="a" style="left:368.7px;top:340.2px;font-size:10.2px;line-height:13px;color:#dcdcdc;font-weight:400;white-space:nowrap;transform:scaleX(0.8731);transform-origin:0 0;">29.04.202...</div><div class="a" style="left:447.5px;top:340.2px;font-size:10.2px;line-height:13px;color:#dcdcdc;font-weight:400;white-space:nowrap;transform:scaleX(0.9000);transform-origin:0 0;">5140,5</div><div class="a" style="left:519.1px;top:340.2px;font-size:10.2px;line-height:13px;color:#dcdcdc;font-weight:400;white-space:nowrap;transform:scaleX(0.9000);transform-origin:0 0;">-10</div><div class="a" style="left:572.7px;top:340.2px;font-size:10.2px;line-height:13px;color:#dcdcdc;font-weight:400;white-space:nowrap;transform:scaleX(0.9000);transform-origin:0 0;">-1,5</div><div class="a" style="left:637.2px;top:340.2px;font-size:10.2px;line-height:13px;color:#dcdcdc;font-weight:400;white-space:nowrap;transform:scaleX(0.9000);transform-origin:0 0;">-6</div><div class="a" style="left:683.3px;top:340.2px;font-size:10.2px;line-height:13px;color:#dcdcdc;font-weight:400;white-space:nowrap;transform:scaleX(0.9000);transform-origin:0 0;">-750</div><div class="a" style="left:82px;top:375px;width:680px;height:1px;background:#2c2c2f;"></div><div class="a" style="left:85.7px;top:359.5px;font-size:10.2px;line-height:13px;color:#dcdcdc;font-weight:400;white-space:nowrap;transform:scaleX(0.8236);transform-origin:0 0;">DEMO00...</div><div class="a" style="left:142.5px;top:359.5px;font-size:10.2px;line-height:13px;color:#dcdcdc;font-weight:400;white-space:nowrap;transform:scaleX(0.8436);transform-origin:0 0;">ESM4@C...</div><div class="a" style="left:198.9px;top:359.5px;font-size:10.2px;line-height:13px;color:#dcdcdc;font-weight:400;white-space:nowrap;transform:scaleX(0.8731);transform-origin:0 0;">26.04.202...</div><div class="a" style="left:272.4px;top:359.5px;font-size:10.2px;line-height:13px;color:#dcdcdc;font-weight:400;white-space:nowrap;transform:scaleX(0.9000);transform-origin:0 0;">5142,25</div><div class="a" style="left:352.2px;top:359.5px;font-size:10.2px;line-height:13px;color:#dcdcdc;font-weight:400;white-space:nowrap;transform:scaleX(0.9000);transform-origin:0 0;">10</div><div class="a" style="left:368.7px;top:359.5px;font-size:10.2px;line-height:13px;color:#dcdcdc;font-weight:400;white-space:nowrap;transform:scaleX(0.8731);transform-origin:0 0;">26.04.202...</div><div class="a" style="left:442.5px;top:359.5px;font-size:10.2px;line-height:13px;color:#dcdcdc;font-weight:400;white-space:nowrap;transform:scaleX(0.9000);transform-origin:0 0;">5141,25</div><div class="a" style="left:519.1px;top:359.5px;font-size:10.2px;line-height:13px;color:#dcdcdc;font-weight:400;white-space:nowrap;transform:scaleX(0.9000);transform-origin:0 0;">-10</div><div class="a" style="left:567.6px;top:359.5px;font-size:10.2px;line-height:13px;color:#dcdcdc;font-weight:400;white-space:nowrap;transform:scaleX(0.9000);transform-origin:0 0;">-1,00</div><div class="a" style="left:637.2px;top:359.5px;font-size:10.2px;line-height:13px;color:#dcdcdc;font-weight:400;white-space:nowrap;transform:scaleX(0.9000);transform-origin:0 0;">-4</div><div class="a" style="left:675.7px;top:359.5px;font-size:10.2px;line-height:13px;color:#dcdcdc;font-weight:400;white-space:nowrap;transform:scaleX(0.9000);transform-origin:0 0;">-500,0</div><div class="a" style="left:82px;top:394px;width:680px;height:1px;background:#2c2c2f;"></div><div class="a" style="left:85.7px;top:378.8px;font-size:10.2px;line-height:13px;color:#dcdcdc;font-weight:400;white-space:nowrap;transform:scaleX(0.8236);transform-origin:0 0;">DEMO00...</div><div class="a" style="left:142.5px;top:378.8px;font-size:10.2px;line-height:13px;color:#dcdcdc;font-weight:400;white-space:nowrap;transform:scaleX(0.8436);transform-origin:0 0;">ESM4@C...</div><div class="a" style="left:198.9px;top:378.8px;font-size:10.2px;line-height:13px;color:#dcdcdc;font-weight:400;white-space:nowrap;transform:scaleX(0.8731);transform-origin:0 0;">26.04.202...</div><div class="a" style="left:277.4px;top:378.8px;font-size:10.2px;line-height:13px;color:#dcdcdc;font-weight:400;white-space:nowrap;transform:scaleX(0.9000);transform-origin:0 0;">5143,5</div><div class="a" style="left:352.2px;top:378.8px;font-size:10.2px;line-height:13px;color:#dcdcdc;font-weight:400;white-space:nowrap;transform:scaleX(0.9000);transform-origin:0 0;">10</div><div class="a" style="left:368.7px;top:378.8px;font-size:10.2px;line-height:13px;color:#dcdcdc;font-weight:400;white-space:nowrap;transform:scaleX(0.8731);transform-origin:0 0;">26.04.202...</div><div class="a" style="left:442.5px;top:378.8px;font-size:10.2px;line-height:13px;color:#dcdcdc;font-weight:400;white-space:nowrap;transform:scaleX(0.9000);transform-origin:0 0;">5140,25</div><div class="a" style="left:519.1px;top:378.8px;font-size:10.2px;line-height:13px;color:#dcdcdc;font-weight:400;white-space:nowrap;transform:scaleX(0.9000);transform-origin:0 0;">-10</div><div class="a" style="left:567.6px;top:378.8px;font-size:10.2px;line-height:13px;color:#dcdcdc;font-weight:400;white-space:nowrap;transform:scaleX(0.9000);transform-origin:0 0;">-3,25</div><div class="a" style="left:632.1px;top:378.8px;font-size:10.2px;line-height:13px;color:#dcdcdc;font-weight:400;white-space:nowrap;transform:scaleX(0.9000);transform-origin:0 0;">-13</div><div class="a" style="left:670.6px;top:378.8px;font-size:10.2px;line-height:13px;color:#dcdcdc;font-weight:400;white-space:nowrap;transform:scaleX(0.9000);transform-origin:0 0;">-1625,0</div><div class="a" style="left:82px;top:397px;width:694px;height:2px;background:#333336;"></div><div class="a" style="left:762px;top:279px;width:14px;height:119px;background:#2b2b2e;"></div><svg class="a" style="left:765px;top:283px" width="9" height="6" viewBox="0 0 9 6"><path d="M1 5H8L4.5 1Z" fill="#9a9a9a"/></svg><div class="a" style="left:766px;top:293px;width:6px;height:13px;background:#6a6a6d;"></div><svg class="a" style="left:765px;top:389px" width="9" height="6" viewBox="0 0 9 6"><path d="M1 1H8L4.5 5Z" fill="#9a9a9a"/></svg><div class="a" style="left:69px;top:410px;width:720px;height:3px;background:#0a78d2;"></div><div class="a" style="left:70px;top:413px;width:718px;height:18px;background:#2d2d30;border-left:1px solid #0a78d2;border-right:1px solid #0a78d2;"></div><div class="a" style="left:69px;top:431px;width:720px;height:1px;background:#0a78d2;"></div><div class="a" style="left:277px;top:413px;width:47px;height:18px;background:#0a78d2;"></div><div class="a" style="left:438px;top:413px;width:33px;height:18px;background:#353539;"></div><svg class="a" style="left:447px;top:415px" width="14" height="14" viewBox="0 0 14 14"><path d="M7 1V13M1 7H13" stroke="#d8d8d8" stroke-width="1.3"/></svg><div class="a" style="left:75.0px;top:415.5px;font-size:10.2px;line-height:13px;color:#e8e8e8;font-weight:400;white-space:nowrap;transform:scaleX(0.9409);transform-origin:0 0;">Orders</div><div class="a" style="left:113.4px;top:415.5px;font-size:10.2px;line-height:13px;color:#e8e8e8;font-weight:400;white-space:nowrap;transform:scaleX(0.8906);transform-origin:0 0;">Trades</div><div class="a" style="left:150.6px;top:415.5px;font-size:10.2px;line-height:13px;color:#e8e8e8;font-weight:400;white-space:nowrap;transform:scaleX(0.9397);transform-origin:0 0;">Positions - Active</div><div class="a" style="left:233.2px;top:415.5px;font-size:10.2px;line-height:13px;color:#e8e8e8;font-weight:400;white-space:nowrap;transform:scaleX(0.9306);transform-origin:0 0;">Accounts</div><div class="a" style="left:281.9px;top:415.5px;font-size:10.2px;line-height:13px;color:#ffffff;font-weight:400;white-space:nowrap;transform:scaleX(0.9003);transform-origin:0 0;">Statistics</div><div class="a" style="left:328.2px;top:415.5px;font-size:10.2px;line-height:13px;color:#e8e8e8;font-weight:400;white-space:nowrap;transform:scaleX(0.9314);transform-origin:0 0;">Trading strategies</div><div class="a" style="left:413.4px;top:415.5px;font-size:10.2px;line-height:13px;color:#e8e8e8;font-weight:400;white-space:nowrap;transform:scaleX(0.9188);transform-origin:0 0;">Logs</div><svg class="a" style="left:72px;top:437px" width="12" height="12" viewBox="0 0 13 13"><path d="M3.3 0.6H9.7L12.8 6.5L9.7 12.4H3.3L0.2 6.5Z" fill="#1e9ab0"/><path d="M3.6 3.5H8.4L4.7 9.3H10M8.4 3.5L11.3 8.2" stroke="#2b2b2e" stroke-width="1.5" fill="none" stroke-linejoin="miter"/></svg><svg class="a" style="left:90px;top:437px" width="12" height="12" viewBox="0 0 13 13"><path d="M3.3 0.6H9.7L12.8 6.5L9.7 12.4H3.3L0.2 6.5Z" fill="#1e9ab0"/><path d="M3.6 3.5H8.4L4.7 9.3H10M8.4 3.5L11.3 8.2" stroke="#2b2b2e" stroke-width="1.5" fill="none" stroke-linejoin="miter"/></svg><svg class="a" style="left:108px;top:437px" width="12" height="12" viewBox="0 0 13 13"><path d="M3.3 0.6H9.7L12.8 6.5L9.7 12.4H3.3L0.2 6.5Z" fill="#1e9ab0"/><path d="M3.6 3.5H8.4L4.7 9.3H10M8.4 3.5L11.3 8.2" stroke="#2b2b2e" stroke-width="1.5" fill="none" stroke-linejoin="miter"/></svg><div class="a" style="left:71.7px;top:456.2px;font-size:10.2px;line-height:13px;color:#5fcf5f;font-weight:400;white-space:nowrap;transform:scaleX(0.9179);transform-origin:0 0;">R2 - server connected.</div><svg class="a" style="left:170px;top:461px" width="7" height="4"><path d="M0 0H7L3.5 4Z" fill="#e8e8e8"/></svg><div class="a" style="left:183.0px;top:456.2px;font-size:10.2px;line-height:13px;color:#5fcf5f;font-weight:400;white-space:nowrap;transform:scaleX(0.9031);transform-origin:0 0;">Feed Source: Connected</div><div class="a" style="left:290px;top:455px;width:1px;height:15px;background:#1a78c8;"></div><svg class="a" style="left:295px;top:455px" width="14" height="13" viewBox="0 0 14 13"><path d="M7 1L13.5 12.5H0.5Z" fill="#f2a30f"/><path d="M7 5V9M7 10.3V11.5" stroke="#2b2b2e" stroke-width="1.5"/></svg><svg class="a" style="left:779px;top:461px" width="9" height="9" viewBox="0 0 9 9"><path d="M8 2V8H2M8 5V8H5" stroke="#777" stroke-width="1" stroke-dasharray="1 1" fill="none"/></svg></body></html>
